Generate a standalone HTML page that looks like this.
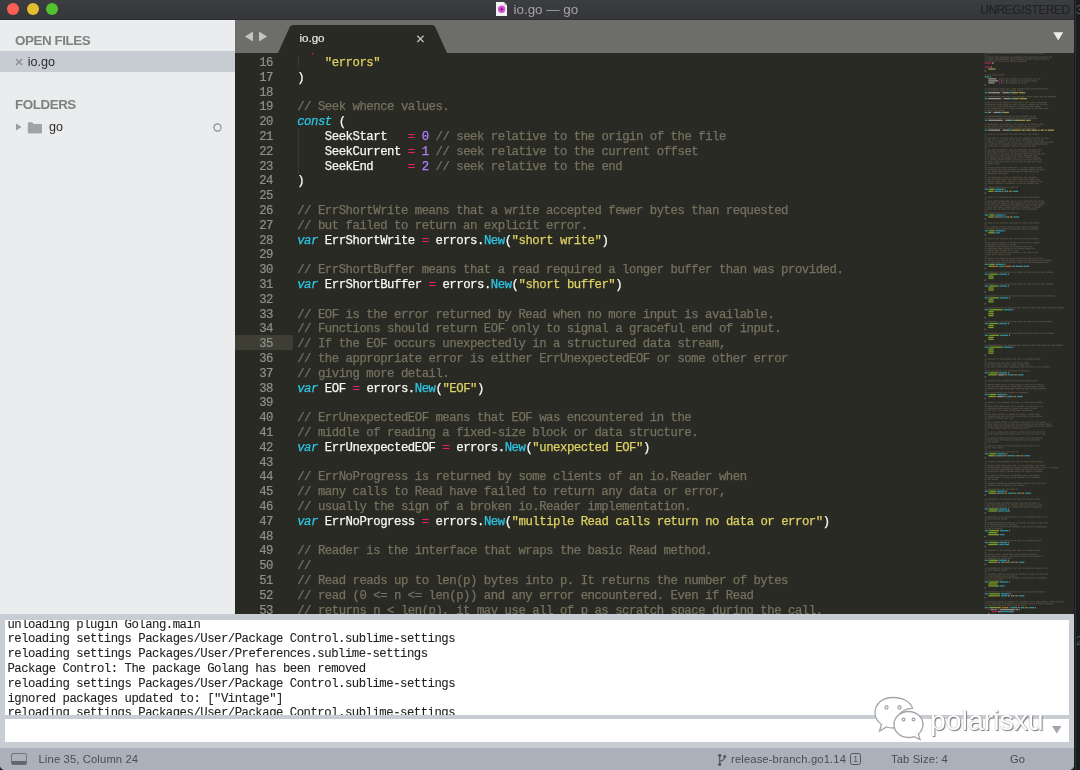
<!DOCTYPE html>
<html><head><meta charset="utf-8">
<style>
*{margin:0;padding:0;box-sizing:border-box}
body{-webkit-font-smoothing:antialiased}
html,body{width:1080px;height:770px;overflow:hidden;background:#1e1f22;font-family:"Liberation Sans",sans-serif}
.abs{position:absolute}
#win{position:absolute;left:0;top:0;width:1074px;height:770px;overflow:hidden;border-radius:0 0 5px 5px;background:#abb1ba;will-change:transform}
#title{position:absolute;left:0;top:0;width:1074px;height:20px;background:linear-gradient(#3c3d40,#36373a);border-bottom:1.5px solid #2b2c2f}
.light{position:absolute;top:3px;width:12px;height:12px;border-radius:50%}
#ttext{position:absolute;left:513.5px;top:1.8px;font-size:13.4px;color:#a4a4a5;white-space:pre;letter-spacing:0px}
#unreg{position:absolute;left:980.3px;top:3.1px;font-size:11.9px;color:#222326;letter-spacing:-0.42px;-webkit-text-stroke:0.2px #222326}
#side{position:absolute;left:0;top:20px;width:235px;height:594px;background:#ebecee}
.hdr{position:absolute;left:15px;font-weight:bold;font-size:13.4px;letter-spacing:-0.45px;color:#7f8080}
#sel{position:absolute;left:0;top:31px;width:235px;height:21px;background:#c7cbd2}
#tabs{position:absolute;left:235px;top:20px;width:839px;height:33px;background:#6d6e69}
#editor{position:absolute;left:235px;top:53px;width:839px;height:561px;background:#2a2a25;overflow:hidden}
.cl{position:absolute;left:297.2px;height:14.8px;line-height:14.8px;font-family:"Liberation Mono",monospace;font-size:12.3px;letter-spacing:-0.4661px;white-space:pre;color:#f8f8f2;-webkit-text-stroke:0.25px}
.gn{position:absolute;left:235px;width:38px;text-align:right;height:14.8px;line-height:14.8px;font-family:"Liberation Mono",monospace;font-size:12.3px;letter-spacing:-0.4661px;white-space:pre;color:#8f908a;-webkit-text-stroke:0.2px}
#codeclip{position:absolute;left:0;top:53px;width:1074px;height:561px;overflow:hidden}
#codeinner{position:absolute;left:0;top:-53px;width:1074px;height:770px;will-change:transform}
.mm{position:absolute;left:0;top:0}
#panel{position:absolute;left:0;top:614px;width:1074px;height:134px;background:#c8ccd3}
#outbox{position:absolute;left:5px;top:6px;width:1064px;height:95px;background:#fff;overflow:hidden}
#outinner{position:absolute;left:-5px;top:-620px;width:1080px;height:770px}
.ol{position:absolute;left:7.4px;height:14.8px;line-height:14.8px;font-family:"Liberation Mono",monospace;font-size:12.3px;letter-spacing:-0.491px;white-space:pre;color:#222;-webkit-text-stroke:0.08px #222}
#inbox{position:absolute;left:5px;top:104.8px;width:1064px;height:23.3px;background:#fff}
#status{position:absolute;left:0;top:748.4px;width:1074px;height:22px;background:#abb1ba}
.st{position:absolute;top:4.5px;font-size:11.2px;letter-spacing:0.15px;color:#4a4c50;white-space:pre}
</style></head>
<body>
<div id="win">
  <div id="title">
    <div class="light" style="left:7px;background:#fd5e56"></div>
    <div class="light" style="left:27px;background:#e5be2d"></div>
    <div class="light" style="left:46px;background:#53c22f"></div>
    <svg class="abs" style="left:495.9px;top:1.7px" width="11.2" height="14.3" viewBox="0 0 11.2 14.3">
      <path d="M0 0 H7.8 L11.2 3.4 V14.3 H0 Z" fill="#f2f2f2"/>
      <path d="M7.8 0 V3.4 H11.2 Z" fill="#d0d0d0"/>
      <circle cx="5.6" cy="7.2" r="3.7" fill="#d65ad6"/>
      <circle cx="5.6" cy="7.2" r="2.2" fill="#c03ec8"/>
      <circle cx="5.6" cy="7.2" r="0.9" fill="#5a2030"/>
    </svg>
    <div id="ttext">io.go — go</div>
    <div id="unreg">UNREGISTERED</div>
  </div>

  <div id="side">
    <div class="hdr" style="top:13px">OPEN FILES</div>
    <div id="sel"></div>
    <svg class="abs" style="left:15px;top:38px" width="8" height="8" viewBox="0 0 8 8"><path d="M1 1 L7 7 M7 1 L1 7" stroke="#86898e" stroke-width="1.25"/></svg>
    <div class="abs" style="left:27.8px;top:35px;font-size:12.6px;color:#2b2b2b">io.go</div>
    <div class="hdr" style="top:77px">FOLDERS</div>
    <svg class="abs" style="left:16px;top:103px" width="6" height="8" viewBox="0 0 6 8"><path d="M0 0.5 L5.5 4 L0 7.5 Z" fill="#9a9b9d"/></svg>
    <svg class="abs" style="left:27px;top:101.5px" width="16" height="12" viewBox="0 0 16 12"><path d="M0.8 1.2 Q0.8 0.3 1.7 0.3 H5.3 L6.8 1.9 H14.1 Q15 1.9 15 2.8 V10.6 Q15 11.5 14.1 11.5 H1.7 Q0.8 11.5 0.8 10.6 Z" fill="#a2a3a5"/></svg>
    <div class="abs" style="left:49px;top:100.2px;font-size:12.6px;color:#2b2b2b">go</div>
    <svg class="abs" style="left:211.7px;top:102px" width="11" height="11" viewBox="0 0 11 11"><circle cx="5.5" cy="5.5" r="3.6" fill="none" stroke="#8e8f91" stroke-width="1.2"/></svg>
  </div>

  <div id="tabs">
    <svg class="abs" style="left:0;top:0" width="839" height="33" viewBox="0 0 839 33">
      <path d="M10 16.5 L18 11.5 V21.5 Z" fill="#c4c4c2"/>
      <path d="M24 11.5 L32 16.5 L24 21.5 Z" fill="#c4c4c2"/>
      <path d="M43 33 L55 6.5 Q56.5 5 58.5 5 L197 5 Q199 5 200 6.5 L212 33 Z" fill="#2a2a25"/>
      <path d="M182.3 15.7 L188.5 21.9 M188.5 15.7 L182.3 21.9" stroke="#bdbdba" stroke-width="1.35"/>
      <path d="M818.3 12.2 L828.2 12.2 L823.25 20.6 Z" fill="#ecece9"/>
    </svg>
    <div class="abs" style="left:64.4px;top:11px;font-size:11.6px;color:#ececea;-webkit-text-stroke:0.15px #ececea">io.go</div>
  </div>

  <div id="editor"></div>
  <div id="codeclip"><div id="codeinner">
    <div class="abs" style="left:235px;top:335px;width:58px;height:15px;background:#3f3e34"></div>
    <div class="abs" style="left:298px;top:55.5px;width:1px;height:12px;border-left:1px dotted #47473f"></div>
    <div class="abs" style="left:298px;top:129px;width:1px;height:45px;border-left:1px dotted #47473f"></div>
<div class="gn" style="top:41.20px">15</div>
<div class="gn" style="top:56.00px">16</div>
<div class="gn" style="top:70.80px">17</div>
<div class="gn" style="top:85.60px">18</div>
<div class="gn" style="top:100.40px">19</div>
<div class="gn" style="top:115.20px">20</div>
<div class="gn" style="top:130.00px">21</div>
<div class="gn" style="top:144.80px">22</div>
<div class="gn" style="top:159.60px">23</div>
<div class="gn" style="top:174.40px">24</div>
<div class="gn" style="top:189.20px">25</div>
<div class="gn" style="top:204.00px">26</div>
<div class="gn" style="top:218.80px">27</div>
<div class="gn" style="top:233.60px">28</div>
<div class="gn" style="top:248.40px">29</div>
<div class="gn" style="top:263.20px">30</div>
<div class="gn" style="top:278.00px">31</div>
<div class="gn" style="top:292.80px">32</div>
<div class="gn" style="top:307.60px">33</div>
<div class="gn" style="top:322.40px">34</div>
<div class="gn" style="top:337.20px">35</div>
<div class="gn" style="top:352.00px">36</div>
<div class="gn" style="top:366.80px">37</div>
<div class="gn" style="top:381.60px">38</div>
<div class="gn" style="top:396.40px">39</div>
<div class="gn" style="top:411.20px">40</div>
<div class="gn" style="top:426.00px">41</div>
<div class="gn" style="top:440.80px">42</div>
<div class="gn" style="top:455.60px">43</div>
<div class="gn" style="top:470.40px">44</div>
<div class="gn" style="top:485.20px">45</div>
<div class="gn" style="top:500.00px">46</div>
<div class="gn" style="top:514.80px">47</div>
<div class="gn" style="top:529.60px">48</div>
<div class="gn" style="top:544.40px">49</div>
<div class="gn" style="top:559.20px">50</div>
<div class="gn" style="top:574.00px">51</div>
<div class="gn" style="top:588.80px">52</div>
<div class="gn" style="top:603.60px">53</div>
<div class="cl" style="top:41.20px"><span style="color:#ec1e72">import</span></div>
<div class="cl" style="top:56.00px">    <span style="color:#ded263">&quot;errors&quot;</span></div>
<div class="cl" style="top:70.80px"><span style="color:#f8f8f2">)</span></div>
<div class="cl" style="top:85.60px"></div>
<div class="cl" style="top:100.40px"><span style="color:#75715e">// Seek whence values.</span></div>
<div class="cl" style="top:115.20px"><span style="color:#2cc6e4;font-style:italic">const</span> <span style="color:#f8f8f2">(</span></div>
<div class="cl" style="top:130.00px">    <span style="color:#f8f8f2">SeekStart</span>   <span style="color:#ec1e72">=</span> <span style="color:#ae81ff">0</span> <span style="color:#75715e">// seek relative to the origin of the file</span></div>
<div class="cl" style="top:144.80px">    <span style="color:#f8f8f2">SeekCurrent</span> <span style="color:#ec1e72">=</span> <span style="color:#ae81ff">1</span> <span style="color:#75715e">// seek relative to the current offset</span></div>
<div class="cl" style="top:159.60px">    <span style="color:#f8f8f2">SeekEnd</span>     <span style="color:#ec1e72">=</span> <span style="color:#ae81ff">2</span> <span style="color:#75715e">// seek relative to the end</span></div>
<div class="cl" style="top:174.40px"><span style="color:#f8f8f2">)</span></div>
<div class="cl" style="top:189.20px"></div>
<div class="cl" style="top:204.00px"><span style="color:#75715e">// ErrShortWrite means that a write accepted fewer bytes than requested</span></div>
<div class="cl" style="top:218.80px"><span style="color:#75715e">// but failed to return an explicit error.</span></div>
<div class="cl" style="top:233.60px"><span style="color:#2cc6e4;font-style:italic">var</span> <span style="color:#f8f8f2">ErrShortWrite</span> <span style="color:#ec1e72">=</span> <span style="color:#f8f8f2">errors</span><span style="color:#f8f8f2">.</span><span style="color:#2cc6e4">New</span><span style="color:#f8f8f2">(</span><span style="color:#ded263">&quot;short write&quot;</span><span style="color:#f8f8f2">)</span></div>
<div class="cl" style="top:248.40px"></div>
<div class="cl" style="top:263.20px"><span style="color:#75715e">// ErrShortBuffer means that a read required a longer buffer than was provided.</span></div>
<div class="cl" style="top:278.00px"><span style="color:#2cc6e4;font-style:italic">var</span> <span style="color:#f8f8f2">ErrShortBuffer</span> <span style="color:#ec1e72">=</span> <span style="color:#f8f8f2">errors</span><span style="color:#f8f8f2">.</span><span style="color:#2cc6e4">New</span><span style="color:#f8f8f2">(</span><span style="color:#ded263">&quot;short buffer&quot;</span><span style="color:#f8f8f2">)</span></div>
<div class="cl" style="top:292.80px"></div>
<div class="cl" style="top:307.60px"><span style="color:#75715e">// EOF is the error returned by Read when no more input is available.</span></div>
<div class="cl" style="top:322.40px"><span style="color:#75715e">// Functions should return EOF only to signal a graceful end of input.</span></div>
<div class="cl" style="top:337.20px"><span style="color:#75715e">// If the EOF occurs unexpectedly in a structured data stream,</span></div>
<div class="cl" style="top:352.00px"><span style="color:#75715e">// the appropriate error is either ErrUnexpectedEOF or some other error</span></div>
<div class="cl" style="top:366.80px"><span style="color:#75715e">// giving more detail.</span></div>
<div class="cl" style="top:381.60px"><span style="color:#2cc6e4;font-style:italic">var</span> <span style="color:#f8f8f2">EOF</span> <span style="color:#ec1e72">=</span> <span style="color:#f8f8f2">errors</span><span style="color:#f8f8f2">.</span><span style="color:#2cc6e4">New</span><span style="color:#f8f8f2">(</span><span style="color:#ded263">&quot;EOF&quot;</span><span style="color:#f8f8f2">)</span></div>
<div class="cl" style="top:396.40px"></div>
<div class="cl" style="top:411.20px"><span style="color:#75715e">// ErrUnexpectedEOF means that EOF was encountered in the</span></div>
<div class="cl" style="top:426.00px"><span style="color:#75715e">// middle of reading a fixed-size block or data structure.</span></div>
<div class="cl" style="top:440.80px"><span style="color:#2cc6e4;font-style:italic">var</span> <span style="color:#f8f8f2">ErrUnexpectedEOF</span> <span style="color:#ec1e72">=</span> <span style="color:#f8f8f2">errors</span><span style="color:#f8f8f2">.</span><span style="color:#2cc6e4">New</span><span style="color:#f8f8f2">(</span><span style="color:#ded263">&quot;unexpected EOF&quot;</span><span style="color:#f8f8f2">)</span></div>
<div class="cl" style="top:455.60px"></div>
<div class="cl" style="top:470.40px"><span style="color:#75715e">// ErrNoProgress is returned by some clients of an io.Reader when</span></div>
<div class="cl" style="top:485.20px"><span style="color:#75715e">// many calls to Read have failed to return any data or error,</span></div>
<div class="cl" style="top:500.00px"><span style="color:#75715e">// usually the sign of a broken io.Reader implementation.</span></div>
<div class="cl" style="top:514.80px"><span style="color:#2cc6e4;font-style:italic">var</span> <span style="color:#f8f8f2">ErrNoProgress</span> <span style="color:#ec1e72">=</span> <span style="color:#f8f8f2">errors</span><span style="color:#f8f8f2">.</span><span style="color:#2cc6e4">New</span><span style="color:#f8f8f2">(</span><span style="color:#ded263">&quot;multiple Read calls return no data or error&quot;</span><span style="color:#f8f8f2">)</span></div>
<div class="cl" style="top:529.60px"></div>
<div class="cl" style="top:544.40px"><span style="color:#75715e">// Reader is the interface that wraps the basic Read method.</span></div>
<div class="cl" style="top:559.20px"><span style="color:#75715e">//</span></div>
<div class="cl" style="top:574.00px"><span style="color:#75715e">// Read reads up to len(p) bytes into p. It returns the number of bytes</span></div>
<div class="cl" style="top:588.80px"><span style="color:#75715e">// read (0 &lt;= n &lt;= len(p)) and any error encountered. Even if Read</span></div>
<div class="cl" style="top:603.60px"><span style="color:#75715e">// returns n &lt; len(p), it may use all of p as scratch space during the call.</span></div>
<svg class="mm" width="1080" height="770" viewBox="0 0 1080 770"><rect x="984.70" y="52.59" width="1.80" height="1.3" fill="#75715e" opacity="0.38"/><rect x="987.40" y="52.59" width="7.20" height="1.3" fill="#75715e" opacity="0.38"/><rect x="995.50" y="52.59" width="2.70" height="1.3" fill="#75715e" opacity="0.38"/><rect x="999.10" y="52.59" width="12.60" height="1.3" fill="#75715e" opacity="0.38"/><rect x="1012.60" y="52.59" width="3.60" height="1.3" fill="#75715e" opacity="0.38"/><rect x="1017.10" y="52.59" width="3.60" height="1.3" fill="#75715e" opacity="0.38"/><rect x="1021.60" y="52.59" width="4.50" height="1.3" fill="#75715e" opacity="0.38"/><rect x="1027.00" y="52.59" width="6.30" height="1.3" fill="#75715e" opacity="0.38"/><rect x="1034.20" y="52.59" width="9.90" height="1.3" fill="#75715e" opacity="0.38"/><rect x="984.70" y="54.56" width="1.80" height="1.3" fill="#75715e" opacity="0.38"/><rect x="984.70" y="56.53" width="1.80" height="1.3" fill="#75715e" opacity="0.38"/><rect x="987.40" y="56.53" width="6.30" height="1.3" fill="#75715e" opacity="0.38"/><rect x="994.60" y="56.53" width="4.50" height="1.3" fill="#75715e" opacity="0.38"/><rect x="1000.00" y="56.53" width="9.00" height="1.3" fill="#75715e" opacity="0.38"/><rect x="1009.90" y="56.53" width="2.70" height="1.3" fill="#75715e" opacity="0.38"/><rect x="1013.50" y="56.53" width="9.00" height="1.3" fill="#75715e" opacity="0.38"/><rect x="1023.40" y="56.53" width="3.60" height="1.3" fill="#75715e" opacity="0.38"/><rect x="1027.90" y="56.53" width="9.90" height="1.3" fill="#75715e" opacity="0.38"/><rect x="1038.70" y="56.53" width="9.00" height="1.3" fill="#75715e" opacity="0.38"/><rect x="1048.60" y="56.53" width="3.60" height="1.3" fill="#75715e" opacity="0.38"/><rect x="984.70" y="58.50" width="1.80" height="1.3" fill="#75715e" opacity="0.38"/><rect x="987.40" y="58.50" width="6.30" height="1.3" fill="#75715e" opacity="0.38"/><rect x="994.60" y="58.50" width="14.40" height="1.3" fill="#75715e" opacity="0.38"/><rect x="1009.90" y="58.50" width="5.40" height="1.3" fill="#75715e" opacity="0.38"/><rect x="1016.20" y="58.50" width="8.10" height="1.3" fill="#75715e" opacity="0.38"/><rect x="1025.20" y="58.50" width="7.20" height="1.3" fill="#75715e" opacity="0.38"/><rect x="1033.30" y="58.50" width="6.30" height="1.3" fill="#75715e" opacity="0.38"/><rect x="1040.50" y="58.50" width="5.40" height="1.3" fill="#75715e" opacity="0.38"/><rect x="1046.80" y="58.50" width="2.70" height="1.3" fill="#75715e" opacity="0.38"/><rect x="984.70" y="60.48" width="1.80" height="1.3" fill="#75715e" opacity="0.38"/><rect x="987.40" y="60.48" width="5.40" height="1.3" fill="#75715e" opacity="0.38"/><rect x="993.70" y="60.48" width="3.60" height="1.3" fill="#75715e" opacity="0.38"/><rect x="998.20" y="60.48" width="2.70" height="1.3" fill="#75715e" opacity="0.38"/><rect x="1001.80" y="60.48" width="3.60" height="1.3" fill="#75715e" opacity="0.38"/><rect x="1006.30" y="60.48" width="2.70" height="1.3" fill="#75715e" opacity="0.38"/><rect x="1009.90" y="60.48" width="7.20" height="1.3" fill="#75715e" opacity="0.38"/><rect x="1018.00" y="60.48" width="9.00" height="1.3" fill="#75715e" opacity="0.38"/><rect x="984.70" y="62.45" width="6.30" height="1.3" fill="#ec1e72" opacity="0.62"/><rect x="991.90" y="62.45" width="1.80" height="1.3" fill="#f8f8f2" opacity="0.5"/><rect x="984.70" y="66.40" width="5.40" height="1.3" fill="#ec1e72" opacity="0.62"/><rect x="991.00" y="66.40" width="0.90" height="1.3" fill="#f8f8f2" opacity="0.5"/><rect x="988.30" y="68.37" width="7.20" height="1.3" fill="#ded263" opacity="0.62"/><rect x="984.70" y="70.34" width="0.90" height="1.3" fill="#f8f8f2" opacity="0.5"/><rect x="984.70" y="74.29" width="1.80" height="1.3" fill="#75715e" opacity="0.38"/><rect x="987.40" y="74.29" width="3.60" height="1.3" fill="#75715e" opacity="0.38"/><rect x="991.90" y="74.29" width="5.40" height="1.3" fill="#75715e" opacity="0.38"/><rect x="998.20" y="74.29" width="6.30" height="1.3" fill="#75715e" opacity="0.38"/><rect x="984.70" y="76.26" width="4.50" height="1.3" fill="#2cc6e4" opacity="0.62"/><rect x="990.10" y="76.26" width="0.90" height="1.3" fill="#f8f8f2" opacity="0.5"/><rect x="988.30" y="78.23" width="8.10" height="1.3" fill="#f8f8f2" opacity="0.5"/><rect x="999.10" y="78.23" width="0.90" height="1.3" fill="#ec1e72" opacity="0.62"/><rect x="1000.90" y="78.23" width="0.90" height="1.3" fill="#ae81ff" opacity="0.62"/><rect x="1002.70" y="78.23" width="1.80" height="1.3" fill="#75715e" opacity="0.38"/><rect x="1005.40" y="78.23" width="3.60" height="1.3" fill="#75715e" opacity="0.38"/><rect x="1009.90" y="78.23" width="7.20" height="1.3" fill="#75715e" opacity="0.38"/><rect x="1018.00" y="78.23" width="1.80" height="1.3" fill="#75715e" opacity="0.38"/><rect x="1020.70" y="78.23" width="2.70" height="1.3" fill="#75715e" opacity="0.38"/><rect x="1024.30" y="78.23" width="5.40" height="1.3" fill="#75715e" opacity="0.38"/><rect x="1030.60" y="78.23" width="1.80" height="1.3" fill="#75715e" opacity="0.38"/><rect x="1033.30" y="78.23" width="2.70" height="1.3" fill="#75715e" opacity="0.38"/><rect x="1036.90" y="78.23" width="3.60" height="1.3" fill="#75715e" opacity="0.38"/><rect x="988.30" y="80.21" width="9.90" height="1.3" fill="#f8f8f2" opacity="0.5"/><rect x="999.10" y="80.21" width="0.90" height="1.3" fill="#ec1e72" opacity="0.62"/><rect x="1000.90" y="80.21" width="0.90" height="1.3" fill="#ae81ff" opacity="0.62"/><rect x="1002.70" y="80.21" width="1.80" height="1.3" fill="#75715e" opacity="0.38"/><rect x="1005.40" y="80.21" width="3.60" height="1.3" fill="#75715e" opacity="0.38"/><rect x="1009.90" y="80.21" width="7.20" height="1.3" fill="#75715e" opacity="0.38"/><rect x="1018.00" y="80.21" width="1.80" height="1.3" fill="#75715e" opacity="0.38"/><rect x="1020.70" y="80.21" width="2.70" height="1.3" fill="#75715e" opacity="0.38"/><rect x="1024.30" y="80.21" width="6.30" height="1.3" fill="#75715e" opacity="0.38"/><rect x="1031.50" y="80.21" width="5.40" height="1.3" fill="#75715e" opacity="0.38"/><rect x="988.30" y="82.18" width="6.30" height="1.3" fill="#f8f8f2" opacity="0.5"/><rect x="999.10" y="82.18" width="0.90" height="1.3" fill="#ec1e72" opacity="0.62"/><rect x="1000.90" y="82.18" width="0.90" height="1.3" fill="#ae81ff" opacity="0.62"/><rect x="1002.70" y="82.18" width="1.80" height="1.3" fill="#75715e" opacity="0.38"/><rect x="1005.40" y="82.18" width="3.60" height="1.3" fill="#75715e" opacity="0.38"/><rect x="1009.90" y="82.18" width="7.20" height="1.3" fill="#75715e" opacity="0.38"/><rect x="1018.00" y="82.18" width="1.80" height="1.3" fill="#75715e" opacity="0.38"/><rect x="1020.70" y="82.18" width="2.70" height="1.3" fill="#75715e" opacity="0.38"/><rect x="1024.30" y="82.18" width="2.70" height="1.3" fill="#75715e" opacity="0.38"/><rect x="984.70" y="84.15" width="0.90" height="1.3" fill="#f8f8f2" opacity="0.5"/><rect x="984.70" y="88.10" width="1.80" height="1.3" fill="#75715e" opacity="0.38"/><rect x="987.40" y="88.10" width="11.70" height="1.3" fill="#75715e" opacity="0.38"/><rect x="1000.00" y="88.10" width="4.50" height="1.3" fill="#75715e" opacity="0.38"/><rect x="1005.40" y="88.10" width="3.60" height="1.3" fill="#75715e" opacity="0.38"/><rect x="1009.90" y="88.10" width="0.90" height="1.3" fill="#75715e" opacity="0.38"/><rect x="1011.70" y="88.10" width="4.50" height="1.3" fill="#75715e" opacity="0.38"/><rect x="1017.10" y="88.10" width="7.20" height="1.3" fill="#75715e" opacity="0.38"/><rect x="1025.20" y="88.10" width="4.50" height="1.3" fill="#75715e" opacity="0.38"/><rect x="1030.60" y="88.10" width="4.50" height="1.3" fill="#75715e" opacity="0.38"/><rect x="1036.00" y="88.10" width="3.60" height="1.3" fill="#75715e" opacity="0.38"/><rect x="1040.50" y="88.10" width="8.10" height="1.3" fill="#75715e" opacity="0.38"/><rect x="984.70" y="90.07" width="1.80" height="1.3" fill="#75715e" opacity="0.38"/><rect x="987.40" y="90.07" width="2.70" height="1.3" fill="#75715e" opacity="0.38"/><rect x="991.00" y="90.07" width="5.40" height="1.3" fill="#75715e" opacity="0.38"/><rect x="997.30" y="90.07" width="1.80" height="1.3" fill="#75715e" opacity="0.38"/><rect x="1000.00" y="90.07" width="5.40" height="1.3" fill="#75715e" opacity="0.38"/><rect x="1006.30" y="90.07" width="1.80" height="1.3" fill="#75715e" opacity="0.38"/><rect x="1009.00" y="90.07" width="7.20" height="1.3" fill="#75715e" opacity="0.38"/><rect x="1017.10" y="90.07" width="5.40" height="1.3" fill="#75715e" opacity="0.38"/><rect x="984.70" y="92.05" width="2.70" height="1.3" fill="#2cc6e4" opacity="0.62"/><rect x="988.30" y="92.05" width="11.70" height="1.3" fill="#f8f8f2" opacity="0.5"/><rect x="1000.90" y="92.05" width="0.90" height="1.3" fill="#ec1e72" opacity="0.62"/><rect x="1002.70" y="92.05" width="5.40" height="1.3" fill="#f8f8f2" opacity="0.5"/><rect x="1008.10" y="92.05" width="0.90" height="1.3" fill="#f8f8f2" opacity="0.5"/><rect x="1009.00" y="92.05" width="2.70" height="1.3" fill="#2cc6e4" opacity="0.62"/><rect x="1011.70" y="92.05" width="0.90" height="1.3" fill="#f8f8f2" opacity="0.5"/><rect x="1012.60" y="92.05" width="5.40" height="1.3" fill="#ded263" opacity="0.62"/><rect x="1018.90" y="92.05" width="5.40" height="1.3" fill="#ded263" opacity="0.62"/><rect x="1024.30" y="92.05" width="0.90" height="1.3" fill="#f8f8f2" opacity="0.5"/><rect x="984.70" y="95.99" width="1.80" height="1.3" fill="#75715e" opacity="0.38"/><rect x="987.40" y="95.99" width="12.60" height="1.3" fill="#75715e" opacity="0.38"/><rect x="1000.90" y="95.99" width="4.50" height="1.3" fill="#75715e" opacity="0.38"/><rect x="1006.30" y="95.99" width="3.60" height="1.3" fill="#75715e" opacity="0.38"/><rect x="1010.80" y="95.99" width="0.90" height="1.3" fill="#75715e" opacity="0.38"/><rect x="1012.60" y="95.99" width="3.60" height="1.3" fill="#75715e" opacity="0.38"/><rect x="1017.10" y="95.99" width="7.20" height="1.3" fill="#75715e" opacity="0.38"/><rect x="1025.20" y="95.99" width="0.90" height="1.3" fill="#75715e" opacity="0.38"/><rect x="1027.00" y="95.99" width="5.40" height="1.3" fill="#75715e" opacity="0.38"/><rect x="1033.30" y="95.99" width="5.40" height="1.3" fill="#75715e" opacity="0.38"/><rect x="1039.60" y="95.99" width="3.60" height="1.3" fill="#75715e" opacity="0.38"/><rect x="1044.10" y="95.99" width="2.70" height="1.3" fill="#75715e" opacity="0.38"/><rect x="1047.70" y="95.99" width="8.10" height="1.3" fill="#75715e" opacity="0.38"/><rect x="984.70" y="97.96" width="2.70" height="1.3" fill="#2cc6e4" opacity="0.62"/><rect x="988.30" y="97.96" width="12.60" height="1.3" fill="#f8f8f2" opacity="0.5"/><rect x="1001.80" y="97.96" width="0.90" height="1.3" fill="#ec1e72" opacity="0.62"/><rect x="1003.60" y="97.96" width="5.40" height="1.3" fill="#f8f8f2" opacity="0.5"/><rect x="1009.00" y="97.96" width="0.90" height="1.3" fill="#f8f8f2" opacity="0.5"/><rect x="1009.90" y="97.96" width="2.70" height="1.3" fill="#2cc6e4" opacity="0.62"/><rect x="1012.60" y="97.96" width="0.90" height="1.3" fill="#f8f8f2" opacity="0.5"/><rect x="1013.50" y="97.96" width="5.40" height="1.3" fill="#ded263" opacity="0.62"/><rect x="1019.80" y="97.96" width="6.30" height="1.3" fill="#ded263" opacity="0.62"/><rect x="1026.10" y="97.96" width="0.90" height="1.3" fill="#f8f8f2" opacity="0.5"/><rect x="984.70" y="101.91" width="1.80" height="1.3" fill="#75715e" opacity="0.38"/><rect x="987.40" y="101.91" width="2.70" height="1.3" fill="#75715e" opacity="0.38"/><rect x="991.00" y="101.91" width="1.80" height="1.3" fill="#75715e" opacity="0.38"/><rect x="993.70" y="101.91" width="2.70" height="1.3" fill="#75715e" opacity="0.38"/><rect x="997.30" y="101.91" width="4.50" height="1.3" fill="#75715e" opacity="0.38"/><rect x="1002.70" y="101.91" width="7.20" height="1.3" fill="#75715e" opacity="0.38"/><rect x="1010.80" y="101.91" width="1.80" height="1.3" fill="#75715e" opacity="0.38"/><rect x="1013.50" y="101.91" width="3.60" height="1.3" fill="#75715e" opacity="0.38"/><rect x="1018.00" y="101.91" width="3.60" height="1.3" fill="#75715e" opacity="0.38"/><rect x="1022.50" y="101.91" width="1.80" height="1.3" fill="#75715e" opacity="0.38"/><rect x="1025.20" y="101.91" width="3.60" height="1.3" fill="#75715e" opacity="0.38"/><rect x="1029.70" y="101.91" width="4.50" height="1.3" fill="#75715e" opacity="0.38"/><rect x="1035.10" y="101.91" width="1.80" height="1.3" fill="#75715e" opacity="0.38"/><rect x="1037.80" y="101.91" width="9.00" height="1.3" fill="#75715e" opacity="0.38"/><rect x="984.70" y="103.88" width="1.80" height="1.3" fill="#75715e" opacity="0.38"/><rect x="987.40" y="103.88" width="8.10" height="1.3" fill="#75715e" opacity="0.38"/><rect x="996.40" y="103.88" width="5.40" height="1.3" fill="#75715e" opacity="0.38"/><rect x="1002.70" y="103.88" width="5.40" height="1.3" fill="#75715e" opacity="0.38"/><rect x="1009.00" y="103.88" width="2.70" height="1.3" fill="#75715e" opacity="0.38"/><rect x="1012.60" y="103.88" width="3.60" height="1.3" fill="#75715e" opacity="0.38"/><rect x="1017.10" y="103.88" width="1.80" height="1.3" fill="#75715e" opacity="0.38"/><rect x="1019.80" y="103.88" width="5.40" height="1.3" fill="#75715e" opacity="0.38"/><rect x="1026.10" y="103.88" width="0.90" height="1.3" fill="#75715e" opacity="0.38"/><rect x="1027.90" y="103.88" width="7.20" height="1.3" fill="#75715e" opacity="0.38"/><rect x="1036.00" y="103.88" width="2.70" height="1.3" fill="#75715e" opacity="0.38"/><rect x="1039.60" y="103.88" width="1.80" height="1.3" fill="#75715e" opacity="0.38"/><rect x="1042.30" y="103.88" width="5.40" height="1.3" fill="#75715e" opacity="0.38"/><rect x="984.70" y="105.86" width="1.80" height="1.3" fill="#75715e" opacity="0.38"/><rect x="987.40" y="105.86" width="1.80" height="1.3" fill="#75715e" opacity="0.38"/><rect x="990.10" y="105.86" width="2.70" height="1.3" fill="#75715e" opacity="0.38"/><rect x="993.70" y="105.86" width="2.70" height="1.3" fill="#75715e" opacity="0.38"/><rect x="997.30" y="105.86" width="5.40" height="1.3" fill="#75715e" opacity="0.38"/><rect x="1003.60" y="105.86" width="10.80" height="1.3" fill="#75715e" opacity="0.38"/><rect x="1015.30" y="105.86" width="1.80" height="1.3" fill="#75715e" opacity="0.38"/><rect x="1018.00" y="105.86" width="0.90" height="1.3" fill="#75715e" opacity="0.38"/><rect x="1019.80" y="105.86" width="9.00" height="1.3" fill="#75715e" opacity="0.38"/><rect x="1029.70" y="105.86" width="3.60" height="1.3" fill="#75715e" opacity="0.38"/><rect x="1034.20" y="105.86" width="6.30" height="1.3" fill="#75715e" opacity="0.38"/><rect x="984.70" y="107.83" width="1.80" height="1.3" fill="#75715e" opacity="0.38"/><rect x="987.40" y="107.83" width="2.70" height="1.3" fill="#75715e" opacity="0.38"/><rect x="991.00" y="107.83" width="9.90" height="1.3" fill="#75715e" opacity="0.38"/><rect x="1001.80" y="107.83" width="4.50" height="1.3" fill="#75715e" opacity="0.38"/><rect x="1007.20" y="107.83" width="1.80" height="1.3" fill="#75715e" opacity="0.38"/><rect x="1009.90" y="107.83" width="5.40" height="1.3" fill="#75715e" opacity="0.38"/><rect x="1016.20" y="107.83" width="14.40" height="1.3" fill="#75715e" opacity="0.38"/><rect x="1031.50" y="107.83" width="1.80" height="1.3" fill="#75715e" opacity="0.38"/><rect x="1034.20" y="107.83" width="3.60" height="1.3" fill="#75715e" opacity="0.38"/><rect x="1038.70" y="107.83" width="4.50" height="1.3" fill="#75715e" opacity="0.38"/><rect x="1044.10" y="107.83" width="4.50" height="1.3" fill="#75715e" opacity="0.38"/><rect x="984.70" y="109.80" width="1.80" height="1.3" fill="#75715e" opacity="0.38"/><rect x="987.40" y="109.80" width="5.40" height="1.3" fill="#75715e" opacity="0.38"/><rect x="993.70" y="109.80" width="3.60" height="1.3" fill="#75715e" opacity="0.38"/><rect x="998.20" y="109.80" width="6.30" height="1.3" fill="#75715e" opacity="0.38"/><rect x="984.70" y="111.78" width="2.70" height="1.3" fill="#2cc6e4" opacity="0.62"/><rect x="988.30" y="111.78" width="2.70" height="1.3" fill="#f8f8f2" opacity="0.5"/><rect x="991.90" y="111.78" width="0.90" height="1.3" fill="#ec1e72" opacity="0.62"/><rect x="993.70" y="111.78" width="5.40" height="1.3" fill="#f8f8f2" opacity="0.5"/><rect x="999.10" y="111.78" width="0.90" height="1.3" fill="#f8f8f2" opacity="0.5"/><rect x="1000.00" y="111.78" width="2.70" height="1.3" fill="#2cc6e4" opacity="0.62"/><rect x="1002.70" y="111.78" width="0.90" height="1.3" fill="#f8f8f2" opacity="0.5"/><rect x="1003.60" y="111.78" width="4.50" height="1.3" fill="#ded263" opacity="0.62"/><rect x="1008.10" y="111.78" width="0.90" height="1.3" fill="#f8f8f2" opacity="0.5"/><rect x="984.70" y="115.72" width="1.80" height="1.3" fill="#75715e" opacity="0.38"/><rect x="987.40" y="115.72" width="14.40" height="1.3" fill="#75715e" opacity="0.38"/><rect x="1002.70" y="115.72" width="4.50" height="1.3" fill="#75715e" opacity="0.38"/><rect x="1008.10" y="115.72" width="3.60" height="1.3" fill="#75715e" opacity="0.38"/><rect x="1012.60" y="115.72" width="2.70" height="1.3" fill="#75715e" opacity="0.38"/><rect x="1016.20" y="115.72" width="2.70" height="1.3" fill="#75715e" opacity="0.38"/><rect x="1019.80" y="115.72" width="9.90" height="1.3" fill="#75715e" opacity="0.38"/><rect x="1030.60" y="115.72" width="1.80" height="1.3" fill="#75715e" opacity="0.38"/><rect x="1033.30" y="115.72" width="2.70" height="1.3" fill="#75715e" opacity="0.38"/><rect x="984.70" y="117.69" width="1.80" height="1.3" fill="#75715e" opacity="0.38"/><rect x="987.40" y="117.69" width="5.40" height="1.3" fill="#75715e" opacity="0.38"/><rect x="993.70" y="117.69" width="1.80" height="1.3" fill="#75715e" opacity="0.38"/><rect x="996.40" y="117.69" width="6.30" height="1.3" fill="#75715e" opacity="0.38"/><rect x="1003.60" y="117.69" width="0.90" height="1.3" fill="#75715e" opacity="0.38"/><rect x="1005.40" y="117.69" width="9.00" height="1.3" fill="#75715e" opacity="0.38"/><rect x="1015.30" y="117.69" width="4.50" height="1.3" fill="#75715e" opacity="0.38"/><rect x="1020.70" y="117.69" width="1.80" height="1.3" fill="#75715e" opacity="0.38"/><rect x="1023.40" y="117.69" width="3.60" height="1.3" fill="#75715e" opacity="0.38"/><rect x="1027.90" y="117.69" width="9.00" height="1.3" fill="#75715e" opacity="0.38"/><rect x="984.70" y="119.67" width="2.70" height="1.3" fill="#2cc6e4" opacity="0.62"/><rect x="988.30" y="119.67" width="14.40" height="1.3" fill="#f8f8f2" opacity="0.5"/><rect x="1003.60" y="119.67" width="0.90" height="1.3" fill="#ec1e72" opacity="0.62"/><rect x="1005.40" y="119.67" width="5.40" height="1.3" fill="#f8f8f2" opacity="0.5"/><rect x="1010.80" y="119.67" width="0.90" height="1.3" fill="#f8f8f2" opacity="0.5"/><rect x="1011.70" y="119.67" width="2.70" height="1.3" fill="#2cc6e4" opacity="0.62"/><rect x="1014.40" y="119.67" width="0.90" height="1.3" fill="#f8f8f2" opacity="0.5"/><rect x="1015.30" y="119.67" width="9.90" height="1.3" fill="#ded263" opacity="0.62"/><rect x="1026.10" y="119.67" width="3.60" height="1.3" fill="#ded263" opacity="0.62"/><rect x="1029.70" y="119.67" width="0.90" height="1.3" fill="#f8f8f2" opacity="0.5"/><rect x="984.70" y="123.61" width="1.80" height="1.3" fill="#75715e" opacity="0.38"/><rect x="987.40" y="123.61" width="11.70" height="1.3" fill="#75715e" opacity="0.38"/><rect x="1000.00" y="123.61" width="1.80" height="1.3" fill="#75715e" opacity="0.38"/><rect x="1002.70" y="123.61" width="7.20" height="1.3" fill="#75715e" opacity="0.38"/><rect x="1010.80" y="123.61" width="1.80" height="1.3" fill="#75715e" opacity="0.38"/><rect x="1013.50" y="123.61" width="3.60" height="1.3" fill="#75715e" opacity="0.38"/><rect x="1018.00" y="123.61" width="6.30" height="1.3" fill="#75715e" opacity="0.38"/><rect x="1025.20" y="123.61" width="1.80" height="1.3" fill="#75715e" opacity="0.38"/><rect x="1027.90" y="123.61" width="1.80" height="1.3" fill="#75715e" opacity="0.38"/><rect x="1030.60" y="123.61" width="8.10" height="1.3" fill="#75715e" opacity="0.38"/><rect x="1039.60" y="123.61" width="3.60" height="1.3" fill="#75715e" opacity="0.38"/><rect x="984.70" y="125.59" width="1.80" height="1.3" fill="#75715e" opacity="0.38"/><rect x="987.40" y="125.59" width="3.60" height="1.3" fill="#75715e" opacity="0.38"/><rect x="991.90" y="125.59" width="4.50" height="1.3" fill="#75715e" opacity="0.38"/><rect x="997.30" y="125.59" width="1.80" height="1.3" fill="#75715e" opacity="0.38"/><rect x="1000.00" y="125.59" width="3.60" height="1.3" fill="#75715e" opacity="0.38"/><rect x="1004.50" y="125.59" width="3.60" height="1.3" fill="#75715e" opacity="0.38"/><rect x="1009.00" y="125.59" width="5.40" height="1.3" fill="#75715e" opacity="0.38"/><rect x="1015.30" y="125.59" width="1.80" height="1.3" fill="#75715e" opacity="0.38"/><rect x="1018.00" y="125.59" width="5.40" height="1.3" fill="#75715e" opacity="0.38"/><rect x="1024.30" y="125.59" width="2.70" height="1.3" fill="#75715e" opacity="0.38"/><rect x="1027.90" y="125.59" width="3.60" height="1.3" fill="#75715e" opacity="0.38"/><rect x="1032.40" y="125.59" width="1.80" height="1.3" fill="#75715e" opacity="0.38"/><rect x="1035.10" y="125.59" width="5.40" height="1.3" fill="#75715e" opacity="0.38"/><rect x="984.70" y="127.56" width="1.80" height="1.3" fill="#75715e" opacity="0.38"/><rect x="987.40" y="127.56" width="6.30" height="1.3" fill="#75715e" opacity="0.38"/><rect x="994.60" y="127.56" width="2.70" height="1.3" fill="#75715e" opacity="0.38"/><rect x="998.20" y="127.56" width="3.60" height="1.3" fill="#75715e" opacity="0.38"/><rect x="1002.70" y="127.56" width="1.80" height="1.3" fill="#75715e" opacity="0.38"/><rect x="1005.40" y="127.56" width="0.90" height="1.3" fill="#75715e" opacity="0.38"/><rect x="1007.20" y="127.56" width="5.40" height="1.3" fill="#75715e" opacity="0.38"/><rect x="1013.50" y="127.56" width="8.10" height="1.3" fill="#75715e" opacity="0.38"/><rect x="1022.50" y="127.56" width="13.50" height="1.3" fill="#75715e" opacity="0.38"/><rect x="984.70" y="129.53" width="2.70" height="1.3" fill="#2cc6e4" opacity="0.62"/><rect x="988.30" y="129.53" width="11.70" height="1.3" fill="#f8f8f2" opacity="0.5"/><rect x="1000.90" y="129.53" width="0.90" height="1.3" fill="#ec1e72" opacity="0.62"/><rect x="1002.70" y="129.53" width="5.40" height="1.3" fill="#f8f8f2" opacity="0.5"/><rect x="1008.10" y="129.53" width="0.90" height="1.3" fill="#f8f8f2" opacity="0.5"/><rect x="1009.00" y="129.53" width="2.70" height="1.3" fill="#2cc6e4" opacity="0.62"/><rect x="1011.70" y="129.53" width="0.90" height="1.3" fill="#f8f8f2" opacity="0.5"/><rect x="1012.60" y="129.53" width="8.10" height="1.3" fill="#ded263" opacity="0.62"/><rect x="1021.60" y="129.53" width="3.60" height="1.3" fill="#ded263" opacity="0.62"/><rect x="1026.10" y="129.53" width="4.50" height="1.3" fill="#ded263" opacity="0.62"/><rect x="1031.50" y="129.53" width="5.40" height="1.3" fill="#ded263" opacity="0.62"/><rect x="1037.80" y="129.53" width="1.80" height="1.3" fill="#ded263" opacity="0.62"/><rect x="1040.50" y="129.53" width="3.60" height="1.3" fill="#ded263" opacity="0.62"/><rect x="1045.00" y="129.53" width="1.80" height="1.3" fill="#ded263" opacity="0.62"/><rect x="1047.70" y="129.53" width="5.40" height="1.3" fill="#ded263" opacity="0.62"/><rect x="1053.10" y="129.53" width="0.90" height="1.3" fill="#f8f8f2" opacity="0.5"/><rect x="984.70" y="133.48" width="1.80" height="1.3" fill="#75715e" opacity="0.38"/><rect x="987.40" y="133.48" width="5.40" height="1.3" fill="#75715e" opacity="0.38"/><rect x="993.70" y="133.48" width="1.80" height="1.3" fill="#75715e" opacity="0.38"/><rect x="996.40" y="133.48" width="2.70" height="1.3" fill="#75715e" opacity="0.38"/><rect x="1000.00" y="133.48" width="8.10" height="1.3" fill="#75715e" opacity="0.38"/><rect x="1009.00" y="133.48" width="3.60" height="1.3" fill="#75715e" opacity="0.38"/><rect x="1013.50" y="133.48" width="4.50" height="1.3" fill="#75715e" opacity="0.38"/><rect x="1018.90" y="133.48" width="2.70" height="1.3" fill="#75715e" opacity="0.38"/><rect x="1022.50" y="133.48" width="4.50" height="1.3" fill="#75715e" opacity="0.38"/><rect x="1027.90" y="133.48" width="3.60" height="1.3" fill="#75715e" opacity="0.38"/><rect x="1032.40" y="133.48" width="6.30" height="1.3" fill="#75715e" opacity="0.38"/><rect x="984.70" y="135.45" width="1.80" height="1.3" fill="#75715e" opacity="0.38"/><rect x="984.70" y="137.42" width="1.80" height="1.3" fill="#75715e" opacity="0.38"/><rect x="987.40" y="137.42" width="3.60" height="1.3" fill="#75715e" opacity="0.38"/><rect x="991.90" y="137.42" width="4.50" height="1.3" fill="#75715e" opacity="0.38"/><rect x="997.30" y="137.42" width="1.80" height="1.3" fill="#75715e" opacity="0.38"/><rect x="1000.00" y="137.42" width="1.80" height="1.3" fill="#75715e" opacity="0.38"/><rect x="1002.70" y="137.42" width="5.40" height="1.3" fill="#75715e" opacity="0.38"/><rect x="1009.00" y="137.42" width="4.50" height="1.3" fill="#75715e" opacity="0.38"/><rect x="1014.40" y="137.42" width="3.60" height="1.3" fill="#75715e" opacity="0.38"/><rect x="1018.90" y="137.42" width="1.80" height="1.3" fill="#75715e" opacity="0.38"/><rect x="1021.60" y="137.42" width="1.80" height="1.3" fill="#75715e" opacity="0.38"/><rect x="1024.30" y="137.42" width="6.30" height="1.3" fill="#75715e" opacity="0.38"/><rect x="1031.50" y="137.42" width="2.70" height="1.3" fill="#75715e" opacity="0.38"/><rect x="1035.10" y="137.42" width="5.40" height="1.3" fill="#75715e" opacity="0.38"/><rect x="1041.40" y="137.42" width="1.80" height="1.3" fill="#75715e" opacity="0.38"/><rect x="1044.10" y="137.42" width="4.50" height="1.3" fill="#75715e" opacity="0.38"/><rect x="984.70" y="139.40" width="1.80" height="1.3" fill="#75715e" opacity="0.38"/><rect x="987.40" y="139.40" width="3.60" height="1.3" fill="#75715e" opacity="0.38"/><rect x="991.90" y="139.40" width="1.80" height="1.3" fill="#75715e" opacity="0.38"/><rect x="994.60" y="139.40" width="1.80" height="1.3" fill="#75715e" opacity="0.38"/><rect x="997.30" y="139.40" width="0.90" height="1.3" fill="#75715e" opacity="0.38"/><rect x="999.10" y="139.40" width="1.80" height="1.3" fill="#75715e" opacity="0.38"/><rect x="1001.80" y="139.40" width="6.30" height="1.3" fill="#75715e" opacity="0.38"/><rect x="1009.00" y="139.40" width="2.70" height="1.3" fill="#75715e" opacity="0.38"/><rect x="1012.60" y="139.40" width="2.70" height="1.3" fill="#75715e" opacity="0.38"/><rect x="1016.20" y="139.40" width="4.50" height="1.3" fill="#75715e" opacity="0.38"/><rect x="1021.60" y="139.40" width="10.80" height="1.3" fill="#75715e" opacity="0.38"/><rect x="1033.30" y="139.40" width="3.60" height="1.3" fill="#75715e" opacity="0.38"/><rect x="1037.80" y="139.40" width="1.80" height="1.3" fill="#75715e" opacity="0.38"/><rect x="1040.50" y="139.40" width="3.60" height="1.3" fill="#75715e" opacity="0.38"/><rect x="984.70" y="141.37" width="1.80" height="1.3" fill="#75715e" opacity="0.38"/><rect x="987.40" y="141.37" width="6.30" height="1.3" fill="#75715e" opacity="0.38"/><rect x="994.60" y="141.37" width="0.90" height="1.3" fill="#75715e" opacity="0.38"/><rect x="996.40" y="141.37" width="0.90" height="1.3" fill="#75715e" opacity="0.38"/><rect x="998.20" y="141.37" width="6.30" height="1.3" fill="#75715e" opacity="0.38"/><rect x="1005.40" y="141.37" width="1.80" height="1.3" fill="#75715e" opacity="0.38"/><rect x="1008.10" y="141.37" width="2.70" height="1.3" fill="#75715e" opacity="0.38"/><rect x="1011.70" y="141.37" width="2.70" height="1.3" fill="#75715e" opacity="0.38"/><rect x="1015.30" y="141.37" width="2.70" height="1.3" fill="#75715e" opacity="0.38"/><rect x="1018.90" y="141.37" width="1.80" height="1.3" fill="#75715e" opacity="0.38"/><rect x="1021.60" y="141.37" width="0.90" height="1.3" fill="#75715e" opacity="0.38"/><rect x="1023.40" y="141.37" width="1.80" height="1.3" fill="#75715e" opacity="0.38"/><rect x="1026.10" y="141.37" width="6.30" height="1.3" fill="#75715e" opacity="0.38"/><rect x="1033.30" y="141.37" width="4.50" height="1.3" fill="#75715e" opacity="0.38"/><rect x="1038.70" y="141.37" width="5.40" height="1.3" fill="#75715e" opacity="0.38"/><rect x="1045.00" y="141.37" width="2.70" height="1.3" fill="#75715e" opacity="0.38"/><rect x="1048.60" y="141.37" width="4.50" height="1.3" fill="#75715e" opacity="0.38"/><rect x="984.70" y="143.34" width="1.80" height="1.3" fill="#75715e" opacity="0.38"/><rect x="987.40" y="143.34" width="1.80" height="1.3" fill="#75715e" opacity="0.38"/><rect x="990.10" y="143.34" width="3.60" height="1.3" fill="#75715e" opacity="0.38"/><rect x="994.60" y="143.34" width="3.60" height="1.3" fill="#75715e" opacity="0.38"/><rect x="999.10" y="143.34" width="1.80" height="1.3" fill="#75715e" opacity="0.38"/><rect x="1001.80" y="143.34" width="8.10" height="1.3" fill="#75715e" opacity="0.38"/><rect x="1010.80" y="143.34" width="2.70" height="1.3" fill="#75715e" opacity="0.38"/><rect x="1014.40" y="143.34" width="2.70" height="1.3" fill="#75715e" opacity="0.38"/><rect x="1018.00" y="143.34" width="5.40" height="1.3" fill="#75715e" opacity="0.38"/><rect x="1024.30" y="143.34" width="5.40" height="1.3" fill="#75715e" opacity="0.38"/><rect x="1030.60" y="143.34" width="3.60" height="1.3" fill="#75715e" opacity="0.38"/><rect x="1035.10" y="143.34" width="12.60" height="1.3" fill="#75715e" opacity="0.38"/><rect x="984.70" y="145.32" width="1.80" height="1.3" fill="#75715e" opacity="0.38"/><rect x="987.40" y="145.32" width="6.30" height="1.3" fill="#75715e" opacity="0.38"/><rect x="994.60" y="145.32" width="3.60" height="1.3" fill="#75715e" opacity="0.38"/><rect x="999.10" y="145.32" width="1.80" height="1.3" fill="#75715e" opacity="0.38"/><rect x="1001.80" y="145.32" width="8.10" height="1.3" fill="#75715e" opacity="0.38"/><rect x="1010.80" y="145.32" width="6.30" height="1.3" fill="#75715e" opacity="0.38"/><rect x="1018.00" y="145.32" width="1.80" height="1.3" fill="#75715e" opacity="0.38"/><rect x="1020.70" y="145.32" width="6.30" height="1.3" fill="#75715e" opacity="0.38"/><rect x="1027.90" y="145.32" width="2.70" height="1.3" fill="#75715e" opacity="0.38"/><rect x="1031.50" y="145.32" width="4.50" height="1.3" fill="#75715e" opacity="0.38"/><rect x="984.70" y="147.29" width="1.80" height="1.3" fill="#75715e" opacity="0.38"/><rect x="984.70" y="149.26" width="1.80" height="1.3" fill="#75715e" opacity="0.38"/><rect x="987.40" y="149.26" width="3.60" height="1.3" fill="#75715e" opacity="0.38"/><rect x="991.90" y="149.26" width="3.60" height="1.3" fill="#75715e" opacity="0.38"/><rect x="996.40" y="149.26" width="9.00" height="1.3" fill="#75715e" opacity="0.38"/><rect x="1006.30" y="149.26" width="1.80" height="1.3" fill="#75715e" opacity="0.38"/><rect x="1009.00" y="149.26" width="4.50" height="1.3" fill="#75715e" opacity="0.38"/><rect x="1014.40" y="149.26" width="1.80" height="1.3" fill="#75715e" opacity="0.38"/><rect x="1017.10" y="149.26" width="9.90" height="1.3" fill="#75715e" opacity="0.38"/><rect x="1027.90" y="149.26" width="8.10" height="1.3" fill="#75715e" opacity="0.38"/><rect x="1036.90" y="149.26" width="4.50" height="1.3" fill="#75715e" opacity="0.38"/><rect x="984.70" y="151.24" width="1.80" height="1.3" fill="#75715e" opacity="0.38"/><rect x="987.40" y="151.24" width="10.80" height="1.3" fill="#75715e" opacity="0.38"/><rect x="999.10" y="151.24" width="6.30" height="1.3" fill="#75715e" opacity="0.38"/><rect x="1006.30" y="151.24" width="0.90" height="1.3" fill="#75715e" opacity="0.38"/><rect x="1008.10" y="151.24" width="0.90" height="1.3" fill="#75715e" opacity="0.38"/><rect x="1009.90" y="151.24" width="0.90" height="1.3" fill="#75715e" opacity="0.38"/><rect x="1011.70" y="151.24" width="5.40" height="1.3" fill="#75715e" opacity="0.38"/><rect x="1018.00" y="151.24" width="1.80" height="1.3" fill="#75715e" opacity="0.38"/><rect x="1020.70" y="151.24" width="6.30" height="1.3" fill="#75715e" opacity="0.38"/><rect x="1027.90" y="151.24" width="2.70" height="1.3" fill="#75715e" opacity="0.38"/><rect x="1031.50" y="151.24" width="5.40" height="1.3" fill="#75715e" opacity="0.38"/><rect x="1037.80" y="151.24" width="1.80" height="1.3" fill="#75715e" opacity="0.38"/><rect x="984.70" y="153.21" width="1.80" height="1.3" fill="#75715e" opacity="0.38"/><rect x="987.40" y="153.21" width="4.50" height="1.3" fill="#75715e" opacity="0.38"/><rect x="992.80" y="153.21" width="4.50" height="1.3" fill="#75715e" opacity="0.38"/><rect x="998.20" y="153.21" width="1.80" height="1.3" fill="#75715e" opacity="0.38"/><rect x="1000.90" y="153.21" width="2.70" height="1.3" fill="#75715e" opacity="0.38"/><rect x="1004.50" y="153.21" width="5.40" height="1.3" fill="#75715e" opacity="0.38"/><rect x="1010.80" y="153.21" width="2.70" height="1.3" fill="#75715e" opacity="0.38"/><rect x="1014.40" y="153.21" width="8.10" height="1.3" fill="#75715e" opacity="0.38"/><rect x="1023.40" y="153.21" width="4.50" height="1.3" fill="#75715e" opacity="0.38"/><rect x="1028.80" y="153.21" width="3.60" height="1.3" fill="#75715e" opacity="0.38"/><rect x="1033.30" y="153.21" width="2.70" height="1.3" fill="#75715e" opacity="0.38"/><rect x="1036.90" y="153.21" width="3.60" height="1.3" fill="#75715e" opacity="0.38"/><rect x="1041.40" y="153.21" width="3.60" height="1.3" fill="#75715e" opacity="0.38"/><rect x="984.70" y="155.18" width="1.80" height="1.3" fill="#75715e" opacity="0.38"/><rect x="987.40" y="155.18" width="1.80" height="1.3" fill="#75715e" opacity="0.38"/><rect x="990.10" y="155.18" width="5.40" height="1.3" fill="#75715e" opacity="0.38"/><rect x="996.40" y="155.18" width="2.70" height="1.3" fill="#75715e" opacity="0.38"/><rect x="1000.00" y="155.18" width="4.50" height="1.3" fill="#75715e" opacity="0.38"/><rect x="1005.40" y="155.18" width="3.60" height="1.3" fill="#75715e" opacity="0.38"/><rect x="1009.90" y="155.18" width="0.90" height="1.3" fill="#75715e" opacity="0.38"/><rect x="1011.70" y="155.18" width="1.80" height="1.3" fill="#75715e" opacity="0.38"/><rect x="1014.40" y="155.18" width="1.80" height="1.3" fill="#75715e" opacity="0.38"/><rect x="1017.10" y="155.18" width="3.60" height="1.3" fill="#75715e" opacity="0.38"/><rect x="1021.60" y="155.18" width="0.90" height="1.3" fill="#75715e" opacity="0.38"/><rect x="1023.40" y="155.18" width="9.00" height="1.3" fill="#75715e" opacity="0.38"/><rect x="1033.30" y="155.18" width="4.50" height="1.3" fill="#75715e" opacity="0.38"/><rect x="984.70" y="157.15" width="1.80" height="1.3" fill="#75715e" opacity="0.38"/><rect x="987.40" y="157.15" width="1.80" height="1.3" fill="#75715e" opacity="0.38"/><rect x="990.10" y="157.15" width="7.20" height="1.3" fill="#75715e" opacity="0.38"/><rect x="998.20" y="157.15" width="1.80" height="1.3" fill="#75715e" opacity="0.38"/><rect x="1000.90" y="157.15" width="3.60" height="1.3" fill="#75715e" opacity="0.38"/><rect x="1005.40" y="157.15" width="6.30" height="1.3" fill="#75715e" opacity="0.38"/><rect x="1012.60" y="157.15" width="3.60" height="1.3" fill="#75715e" opacity="0.38"/><rect x="1017.10" y="157.15" width="1.80" height="1.3" fill="#75715e" opacity="0.38"/><rect x="1019.80" y="157.15" width="3.60" height="1.3" fill="#75715e" opacity="0.38"/><rect x="1024.30" y="157.15" width="0.90" height="1.3" fill="#75715e" opacity="0.38"/><rect x="1026.10" y="157.15" width="5.40" height="1.3" fill="#75715e" opacity="0.38"/><rect x="1032.40" y="157.15" width="8.10" height="1.3" fill="#75715e" opacity="0.38"/><rect x="984.70" y="159.13" width="1.80" height="1.3" fill="#75715e" opacity="0.38"/><rect x="987.40" y="159.13" width="0.90" height="1.3" fill="#75715e" opacity="0.38"/><rect x="989.20" y="159.13" width="7.20" height="1.3" fill="#75715e" opacity="0.38"/><rect x="997.30" y="159.13" width="5.40" height="1.3" fill="#75715e" opacity="0.38"/><rect x="1003.60" y="159.13" width="1.80" height="1.3" fill="#75715e" opacity="0.38"/><rect x="1006.30" y="159.13" width="4.50" height="1.3" fill="#75715e" opacity="0.38"/><rect x="1011.70" y="159.13" width="1.80" height="1.3" fill="#75715e" opacity="0.38"/><rect x="1014.40" y="159.13" width="2.70" height="1.3" fill="#75715e" opacity="0.38"/><rect x="1018.00" y="159.13" width="2.70" height="1.3" fill="#75715e" opacity="0.38"/><rect x="1021.60" y="159.13" width="1.80" height="1.3" fill="#75715e" opacity="0.38"/><rect x="1024.30" y="159.13" width="2.70" height="1.3" fill="#75715e" opacity="0.38"/><rect x="1027.90" y="159.13" width="4.50" height="1.3" fill="#75715e" opacity="0.38"/><rect x="1033.30" y="159.13" width="5.40" height="1.3" fill="#75715e" opacity="0.38"/><rect x="1039.60" y="159.13" width="2.70" height="1.3" fill="#75715e" opacity="0.38"/><rect x="984.70" y="161.10" width="1.80" height="1.3" fill="#75715e" opacity="0.38"/><rect x="987.40" y="161.10" width="5.40" height="1.3" fill="#75715e" opacity="0.38"/><rect x="993.70" y="161.10" width="5.40" height="1.3" fill="#75715e" opacity="0.38"/><rect x="1000.00" y="161.10" width="2.70" height="1.3" fill="#75715e" opacity="0.38"/><rect x="1003.60" y="161.10" width="1.80" height="1.3" fill="#75715e" opacity="0.38"/><rect x="1006.30" y="161.10" width="2.70" height="1.3" fill="#75715e" opacity="0.38"/><rect x="1009.90" y="161.10" width="1.80" height="1.3" fill="#75715e" opacity="0.38"/><rect x="1012.60" y="161.10" width="2.70" height="1.3" fill="#75715e" opacity="0.38"/><rect x="1016.20" y="161.10" width="1.80" height="1.3" fill="#75715e" opacity="0.38"/><rect x="1018.90" y="161.10" width="3.60" height="1.3" fill="#75715e" opacity="0.38"/><rect x="1023.40" y="161.10" width="2.70" height="1.3" fill="#75715e" opacity="0.38"/><rect x="1027.00" y="161.10" width="3.60" height="1.3" fill="#75715e" opacity="0.38"/><rect x="1031.50" y="161.10" width="3.60" height="1.3" fill="#75715e" opacity="0.38"/><rect x="1036.00" y="161.10" width="5.40" height="1.3" fill="#75715e" opacity="0.38"/><rect x="984.70" y="163.07" width="1.80" height="1.3" fill="#75715e" opacity="0.38"/><rect x="987.40" y="163.07" width="5.40" height="1.3" fill="#75715e" opacity="0.38"/><rect x="993.70" y="163.07" width="1.80" height="1.3" fill="#75715e" opacity="0.38"/><rect x="996.40" y="163.07" width="3.60" height="1.3" fill="#75715e" opacity="0.38"/><rect x="984.70" y="165.05" width="1.80" height="1.3" fill="#75715e" opacity="0.38"/><rect x="984.70" y="167.02" width="1.80" height="1.3" fill="#75715e" opacity="0.38"/><rect x="987.40" y="167.02" width="6.30" height="1.3" fill="#75715e" opacity="0.38"/><rect x="994.60" y="167.02" width="5.40" height="1.3" fill="#75715e" opacity="0.38"/><rect x="1000.90" y="167.02" width="5.40" height="1.3" fill="#75715e" opacity="0.38"/><rect x="1007.20" y="167.02" width="6.30" height="1.3" fill="#75715e" opacity="0.38"/><rect x="1014.40" y="167.02" width="2.70" height="1.3" fill="#75715e" opacity="0.38"/><rect x="1018.00" y="167.02" width="0.90" height="1.3" fill="#75715e" opacity="0.38"/><rect x="1019.80" y="167.02" width="0.90" height="1.3" fill="#75715e" opacity="0.38"/><rect x="1021.60" y="167.02" width="0.90" height="1.3" fill="#75715e" opacity="0.38"/><rect x="1023.40" y="167.02" width="4.50" height="1.3" fill="#75715e" opacity="0.38"/><rect x="1028.80" y="167.02" width="7.20" height="1.3" fill="#75715e" opacity="0.38"/><rect x="1036.90" y="167.02" width="5.40" height="1.3" fill="#75715e" opacity="0.38"/><rect x="984.70" y="168.99" width="1.80" height="1.3" fill="#75715e" opacity="0.38"/><rect x="987.40" y="168.99" width="9.90" height="1.3" fill="#75715e" opacity="0.38"/><rect x="998.20" y="168.99" width="2.70" height="1.3" fill="#75715e" opacity="0.38"/><rect x="1001.80" y="168.99" width="4.50" height="1.3" fill="#75715e" opacity="0.38"/><rect x="1007.20" y="168.99" width="3.60" height="1.3" fill="#75715e" opacity="0.38"/><rect x="1011.70" y="168.99" width="4.50" height="1.3" fill="#75715e" opacity="0.38"/><rect x="1017.10" y="168.99" width="1.80" height="1.3" fill="#75715e" opacity="0.38"/><rect x="1019.80" y="168.99" width="8.10" height="1.3" fill="#75715e" opacity="0.38"/><rect x="1028.80" y="168.99" width="6.30" height="1.3" fill="#75715e" opacity="0.38"/><rect x="1036.00" y="168.99" width="2.70" height="1.3" fill="#75715e" opacity="0.38"/><rect x="1039.60" y="168.99" width="5.40" height="1.3" fill="#75715e" opacity="0.38"/><rect x="984.70" y="170.97" width="1.80" height="1.3" fill="#75715e" opacity="0.38"/><rect x="987.40" y="170.97" width="3.60" height="1.3" fill="#75715e" opacity="0.38"/><rect x="991.90" y="170.97" width="5.40" height="1.3" fill="#75715e" opacity="0.38"/><rect x="998.20" y="170.97" width="4.50" height="1.3" fill="#75715e" opacity="0.38"/><rect x="1003.60" y="170.97" width="6.30" height="1.3" fill="#75715e" opacity="0.38"/><rect x="1010.80" y="170.97" width="3.60" height="1.3" fill="#75715e" opacity="0.38"/><rect x="1015.30" y="170.97" width="4.50" height="1.3" fill="#75715e" opacity="0.38"/><rect x="1020.70" y="170.97" width="2.70" height="1.3" fill="#75715e" opacity="0.38"/><rect x="1024.30" y="170.97" width="3.60" height="1.3" fill="#75715e" opacity="0.38"/><rect x="1028.80" y="170.97" width="3.60" height="1.3" fill="#75715e" opacity="0.38"/><rect x="1033.30" y="170.97" width="1.80" height="1.3" fill="#75715e" opacity="0.38"/><rect x="1036.00" y="170.97" width="2.70" height="1.3" fill="#75715e" opacity="0.38"/><rect x="984.70" y="172.94" width="1.80" height="1.3" fill="#75715e" opacity="0.38"/><rect x="987.40" y="172.94" width="6.30" height="1.3" fill="#75715e" opacity="0.38"/><rect x="994.60" y="172.94" width="2.70" height="1.3" fill="#75715e" opacity="0.38"/><rect x="998.20" y="172.94" width="9.00" height="1.3" fill="#75715e" opacity="0.38"/><rect x="984.70" y="174.91" width="1.80" height="1.3" fill="#75715e" opacity="0.38"/><rect x="984.70" y="176.88" width="1.80" height="1.3" fill="#75715e" opacity="0.38"/><rect x="987.40" y="176.88" width="13.50" height="1.3" fill="#75715e" opacity="0.38"/><rect x="1001.80" y="176.88" width="1.80" height="1.3" fill="#75715e" opacity="0.38"/><rect x="1004.50" y="176.88" width="3.60" height="1.3" fill="#75715e" opacity="0.38"/><rect x="1009.00" y="176.88" width="2.70" height="1.3" fill="#75715e" opacity="0.38"/><rect x="1012.60" y="176.88" width="9.90" height="1.3" fill="#75715e" opacity="0.38"/><rect x="1023.40" y="176.88" width="3.60" height="1.3" fill="#75715e" opacity="0.38"/><rect x="1027.90" y="176.88" width="8.10" height="1.3" fill="#75715e" opacity="0.38"/><rect x="1036.90" y="176.88" width="0.90" height="1.3" fill="#75715e" opacity="0.38"/><rect x="984.70" y="178.86" width="1.80" height="1.3" fill="#75715e" opacity="0.38"/><rect x="987.40" y="178.86" width="3.60" height="1.3" fill="#75715e" opacity="0.38"/><rect x="991.90" y="178.86" width="3.60" height="1.3" fill="#75715e" opacity="0.38"/><rect x="996.40" y="178.86" width="4.50" height="1.3" fill="#75715e" opacity="0.38"/><rect x="1001.80" y="178.86" width="3.60" height="1.3" fill="#75715e" opacity="0.38"/><rect x="1006.30" y="178.86" width="0.90" height="1.3" fill="#75715e" opacity="0.38"/><rect x="1008.10" y="178.86" width="2.70" height="1.3" fill="#75715e" opacity="0.38"/><rect x="1011.70" y="178.86" width="5.40" height="1.3" fill="#75715e" opacity="0.38"/><rect x="1018.00" y="178.86" width="5.40" height="1.3" fill="#75715e" opacity="0.38"/><rect x="1024.30" y="178.86" width="3.60" height="1.3" fill="#75715e" opacity="0.38"/><rect x="1028.80" y="178.86" width="5.40" height="1.3" fill="#75715e" opacity="0.38"/><rect x="1035.10" y="178.86" width="1.80" height="1.3" fill="#75715e" opacity="0.38"/><rect x="1037.80" y="178.86" width="1.80" height="1.3" fill="#75715e" opacity="0.38"/><rect x="984.70" y="180.83" width="1.80" height="1.3" fill="#75715e" opacity="0.38"/><rect x="987.40" y="180.83" width="6.30" height="1.3" fill="#75715e" opacity="0.38"/><rect x="994.60" y="180.83" width="5.40" height="1.3" fill="#75715e" opacity="0.38"/><rect x="1000.90" y="180.83" width="4.50" height="1.3" fill="#75715e" opacity="0.38"/><rect x="1006.30" y="180.83" width="0.90" height="1.3" fill="#75715e" opacity="0.38"/><rect x="1008.10" y="180.83" width="5.40" height="1.3" fill="#75715e" opacity="0.38"/><rect x="1014.40" y="180.83" width="1.80" height="1.3" fill="#75715e" opacity="0.38"/><rect x="1017.10" y="180.83" width="0.90" height="1.3" fill="#75715e" opacity="0.38"/><rect x="1018.90" y="180.83" width="2.70" height="1.3" fill="#75715e" opacity="0.38"/><rect x="1022.50" y="180.83" width="2.70" height="1.3" fill="#75715e" opacity="0.38"/><rect x="1026.10" y="180.83" width="1.80" height="1.3" fill="#75715e" opacity="0.38"/><rect x="1028.80" y="180.83" width="9.00" height="1.3" fill="#75715e" opacity="0.38"/><rect x="1038.70" y="180.83" width="3.60" height="1.3" fill="#75715e" opacity="0.38"/><rect x="984.70" y="182.80" width="1.80" height="1.3" fill="#75715e" opacity="0.38"/><rect x="987.40" y="182.80" width="6.30" height="1.3" fill="#75715e" opacity="0.38"/><rect x="994.60" y="182.80" width="8.10" height="1.3" fill="#75715e" opacity="0.38"/><rect x="1003.60" y="182.80" width="1.80" height="1.3" fill="#75715e" opacity="0.38"/><rect x="1006.30" y="182.80" width="9.00" height="1.3" fill="#75715e" opacity="0.38"/><rect x="1016.20" y="182.80" width="1.80" height="1.3" fill="#75715e" opacity="0.38"/><rect x="1018.90" y="182.80" width="3.60" height="1.3" fill="#75715e" opacity="0.38"/><rect x="1023.40" y="182.80" width="2.70" height="1.3" fill="#75715e" opacity="0.38"/><rect x="1027.00" y="182.80" width="7.20" height="1.3" fill="#75715e" opacity="0.38"/><rect x="1035.10" y="182.80" width="3.60" height="1.3" fill="#75715e" opacity="0.38"/><rect x="984.70" y="184.78" width="1.80" height="1.3" fill="#75715e" opacity="0.38"/><rect x="984.70" y="186.75" width="1.80" height="1.3" fill="#75715e" opacity="0.38"/><rect x="987.40" y="186.75" width="13.50" height="1.3" fill="#75715e" opacity="0.38"/><rect x="1001.80" y="186.75" width="3.60" height="1.3" fill="#75715e" opacity="0.38"/><rect x="1006.30" y="186.75" width="2.70" height="1.3" fill="#75715e" opacity="0.38"/><rect x="1009.90" y="186.75" width="5.40" height="1.3" fill="#75715e" opacity="0.38"/><rect x="1016.20" y="186.75" width="1.80" height="1.3" fill="#75715e" opacity="0.38"/><rect x="984.70" y="188.72" width="3.60" height="1.3" fill="#2cc6e4" opacity="0.62"/><rect x="989.20" y="188.72" width="5.40" height="1.3" fill="#a6e22e" opacity="0.62"/><rect x="995.50" y="188.72" width="8.10" height="1.3" fill="#2cc6e4" opacity="0.62"/><rect x="1004.50" y="188.72" width="0.90" height="1.3" fill="#f8f8f2" opacity="0.5"/><rect x="988.30" y="190.69" width="3.60" height="1.3" fill="#a6e22e" opacity="0.62"/><rect x="991.90" y="190.69" width="0.90" height="1.3" fill="#f8f8f2" opacity="0.5"/><rect x="992.80" y="190.69" width="0.90" height="1.3" fill="#fd971f" opacity="0.62"/><rect x="994.60" y="190.69" width="0.90" height="1.3" fill="#f8f8f2" opacity="0.5"/><rect x="995.50" y="190.69" width="0.90" height="1.3" fill="#f8f8f2" opacity="0.5"/><rect x="996.40" y="190.69" width="3.60" height="1.3" fill="#2cc6e4" opacity="0.62"/><rect x="1000.00" y="190.69" width="0.90" height="1.3" fill="#f8f8f2" opacity="0.5"/><rect x="1001.80" y="190.69" width="0.90" height="1.3" fill="#f8f8f2" opacity="0.5"/><rect x="1002.70" y="190.69" width="0.90" height="1.3" fill="#fd971f" opacity="0.62"/><rect x="1004.50" y="190.69" width="2.70" height="1.3" fill="#2cc6e4" opacity="0.62"/><rect x="1007.20" y="190.69" width="0.90" height="1.3" fill="#f8f8f2" opacity="0.5"/><rect x="1009.00" y="190.69" width="2.70" height="1.3" fill="#fd971f" opacity="0.62"/><rect x="1012.60" y="190.69" width="4.50" height="1.3" fill="#2cc6e4" opacity="0.62"/><rect x="1017.10" y="190.69" width="0.90" height="1.3" fill="#f8f8f2" opacity="0.5"/><rect x="984.70" y="192.67" width="0.90" height="1.3" fill="#f8f8f2" opacity="0.5"/><rect x="984.70" y="196.61" width="1.80" height="1.3" fill="#75715e" opacity="0.38"/><rect x="987.40" y="196.61" width="5.40" height="1.3" fill="#75715e" opacity="0.38"/><rect x="993.70" y="196.61" width="1.80" height="1.3" fill="#75715e" opacity="0.38"/><rect x="996.40" y="196.61" width="2.70" height="1.3" fill="#75715e" opacity="0.38"/><rect x="1000.00" y="196.61" width="8.10" height="1.3" fill="#75715e" opacity="0.38"/><rect x="1009.00" y="196.61" width="3.60" height="1.3" fill="#75715e" opacity="0.38"/><rect x="1013.50" y="196.61" width="4.50" height="1.3" fill="#75715e" opacity="0.38"/><rect x="1018.90" y="196.61" width="2.70" height="1.3" fill="#75715e" opacity="0.38"/><rect x="1022.50" y="196.61" width="4.50" height="1.3" fill="#75715e" opacity="0.38"/><rect x="1027.90" y="196.61" width="4.50" height="1.3" fill="#75715e" opacity="0.38"/><rect x="1033.30" y="196.61" width="6.30" height="1.3" fill="#75715e" opacity="0.38"/><rect x="984.70" y="198.59" width="1.80" height="1.3" fill="#75715e" opacity="0.38"/><rect x="984.70" y="200.56" width="1.80" height="1.3" fill="#75715e" opacity="0.38"/><rect x="987.40" y="200.56" width="4.50" height="1.3" fill="#75715e" opacity="0.38"/><rect x="992.80" y="200.56" width="5.40" height="1.3" fill="#75715e" opacity="0.38"/><rect x="999.10" y="200.56" width="5.40" height="1.3" fill="#75715e" opacity="0.38"/><rect x="1005.40" y="200.56" width="4.50" height="1.3" fill="#75715e" opacity="0.38"/><rect x="1010.80" y="200.56" width="3.60" height="1.3" fill="#75715e" opacity="0.38"/><rect x="1015.30" y="200.56" width="0.90" height="1.3" fill="#75715e" opacity="0.38"/><rect x="1017.10" y="200.56" width="1.80" height="1.3" fill="#75715e" opacity="0.38"/><rect x="1019.80" y="200.56" width="2.70" height="1.3" fill="#75715e" opacity="0.38"/><rect x="1023.40" y="200.56" width="9.00" height="1.3" fill="#75715e" opacity="0.38"/><rect x="1033.30" y="200.56" width="3.60" height="1.3" fill="#75715e" opacity="0.38"/><rect x="1037.80" y="200.56" width="6.30" height="1.3" fill="#75715e" opacity="0.38"/><rect x="984.70" y="202.53" width="1.80" height="1.3" fill="#75715e" opacity="0.38"/><rect x="987.40" y="202.53" width="1.80" height="1.3" fill="#75715e" opacity="0.38"/><rect x="990.10" y="202.53" width="6.30" height="1.3" fill="#75715e" opacity="0.38"/><rect x="997.30" y="202.53" width="2.70" height="1.3" fill="#75715e" opacity="0.38"/><rect x="1000.90" y="202.53" width="5.40" height="1.3" fill="#75715e" opacity="0.38"/><rect x="1007.20" y="202.53" width="1.80" height="1.3" fill="#75715e" opacity="0.38"/><rect x="1009.90" y="202.53" width="4.50" height="1.3" fill="#75715e" opacity="0.38"/><rect x="1015.30" y="202.53" width="6.30" height="1.3" fill="#75715e" opacity="0.38"/><rect x="1022.50" y="202.53" width="3.60" height="1.3" fill="#75715e" opacity="0.38"/><rect x="1027.00" y="202.53" width="0.90" height="1.3" fill="#75715e" opacity="0.38"/><rect x="1028.80" y="202.53" width="1.80" height="1.3" fill="#75715e" opacity="0.38"/><rect x="1031.50" y="202.53" width="1.80" height="1.3" fill="#75715e" opacity="0.38"/><rect x="1034.20" y="202.53" width="0.90" height="1.3" fill="#75715e" opacity="0.38"/><rect x="1036.00" y="202.53" width="1.80" height="1.3" fill="#75715e" opacity="0.38"/><rect x="1038.70" y="202.53" width="6.30" height="1.3" fill="#75715e" opacity="0.38"/><rect x="984.70" y="204.51" width="1.80" height="1.3" fill="#75715e" opacity="0.38"/><rect x="987.40" y="204.51" width="2.70" height="1.3" fill="#75715e" opacity="0.38"/><rect x="991.00" y="204.51" width="2.70" height="1.3" fill="#75715e" opacity="0.38"/><rect x="994.60" y="204.51" width="4.50" height="1.3" fill="#75715e" opacity="0.38"/><rect x="1000.00" y="204.51" width="9.90" height="1.3" fill="#75715e" opacity="0.38"/><rect x="1010.80" y="204.51" width="3.60" height="1.3" fill="#75715e" opacity="0.38"/><rect x="1015.30" y="204.51" width="5.40" height="1.3" fill="#75715e" opacity="0.38"/><rect x="1021.60" y="204.51" width="2.70" height="1.3" fill="#75715e" opacity="0.38"/><rect x="1025.20" y="204.51" width="4.50" height="1.3" fill="#75715e" opacity="0.38"/><rect x="1030.60" y="204.51" width="1.80" height="1.3" fill="#75715e" opacity="0.38"/><rect x="1033.30" y="204.51" width="3.60" height="1.3" fill="#75715e" opacity="0.38"/><rect x="1037.80" y="204.51" width="5.40" height="1.3" fill="#75715e" opacity="0.38"/><rect x="984.70" y="206.48" width="1.80" height="1.3" fill="#75715e" opacity="0.38"/><rect x="987.40" y="206.48" width="4.50" height="1.3" fill="#75715e" opacity="0.38"/><rect x="992.80" y="206.48" width="3.60" height="1.3" fill="#75715e" opacity="0.38"/><rect x="997.30" y="206.48" width="5.40" height="1.3" fill="#75715e" opacity="0.38"/><rect x="1003.60" y="206.48" width="0.90" height="1.3" fill="#75715e" opacity="0.38"/><rect x="1005.40" y="206.48" width="6.30" height="1.3" fill="#75715e" opacity="0.38"/><rect x="1012.60" y="206.48" width="4.50" height="1.3" fill="#75715e" opacity="0.38"/><rect x="1018.00" y="206.48" width="1.80" height="1.3" fill="#75715e" opacity="0.38"/><rect x="1020.70" y="206.48" width="1.80" height="1.3" fill="#75715e" opacity="0.38"/><rect x="1023.40" y="206.48" width="6.30" height="1.3" fill="#75715e" opacity="0.38"/><rect x="1030.60" y="206.48" width="0.90" height="1.3" fill="#75715e" opacity="0.38"/><rect x="1032.40" y="206.48" width="0.90" height="1.3" fill="#75715e" opacity="0.38"/><rect x="1034.20" y="206.48" width="6.30" height="1.3" fill="#75715e" opacity="0.38"/><rect x="984.70" y="208.45" width="1.80" height="1.3" fill="#75715e" opacity="0.38"/><rect x="987.40" y="208.45" width="4.50" height="1.3" fill="#75715e" opacity="0.38"/><rect x="992.80" y="208.45" width="3.60" height="1.3" fill="#75715e" opacity="0.38"/><rect x="997.30" y="208.45" width="2.70" height="1.3" fill="#75715e" opacity="0.38"/><rect x="1000.90" y="208.45" width="5.40" height="1.3" fill="#75715e" opacity="0.38"/><rect x="1007.20" y="208.45" width="2.70" height="1.3" fill="#75715e" opacity="0.38"/><rect x="1010.80" y="208.45" width="4.50" height="1.3" fill="#75715e" opacity="0.38"/><rect x="1016.20" y="208.45" width="4.50" height="1.3" fill="#75715e" opacity="0.38"/><rect x="1021.60" y="208.45" width="3.60" height="1.3" fill="#75715e" opacity="0.38"/><rect x="1026.10" y="208.45" width="10.80" height="1.3" fill="#75715e" opacity="0.38"/><rect x="984.70" y="210.42" width="1.80" height="1.3" fill="#75715e" opacity="0.38"/><rect x="984.70" y="212.40" width="1.80" height="1.3" fill="#75715e" opacity="0.38"/><rect x="987.40" y="212.40" width="13.50" height="1.3" fill="#75715e" opacity="0.38"/><rect x="1001.80" y="212.40" width="3.60" height="1.3" fill="#75715e" opacity="0.38"/><rect x="1006.30" y="212.40" width="2.70" height="1.3" fill="#75715e" opacity="0.38"/><rect x="1009.90" y="212.40" width="5.40" height="1.3" fill="#75715e" opacity="0.38"/><rect x="1016.20" y="212.40" width="1.80" height="1.3" fill="#75715e" opacity="0.38"/><rect x="984.70" y="214.37" width="3.60" height="1.3" fill="#2cc6e4" opacity="0.62"/><rect x="989.20" y="214.37" width="5.40" height="1.3" fill="#a6e22e" opacity="0.62"/><rect x="995.50" y="214.37" width="8.10" height="1.3" fill="#2cc6e4" opacity="0.62"/><rect x="1004.50" y="214.37" width="0.90" height="1.3" fill="#f8f8f2" opacity="0.5"/><rect x="988.30" y="216.34" width="4.50" height="1.3" fill="#a6e22e" opacity="0.62"/><rect x="992.80" y="216.34" width="0.90" height="1.3" fill="#f8f8f2" opacity="0.5"/><rect x="993.70" y="216.34" width="0.90" height="1.3" fill="#fd971f" opacity="0.62"/><rect x="995.50" y="216.34" width="0.90" height="1.3" fill="#f8f8f2" opacity="0.5"/><rect x="996.40" y="216.34" width="0.90" height="1.3" fill="#f8f8f2" opacity="0.5"/><rect x="997.30" y="216.34" width="3.60" height="1.3" fill="#2cc6e4" opacity="0.62"/><rect x="1000.90" y="216.34" width="0.90" height="1.3" fill="#f8f8f2" opacity="0.5"/><rect x="1002.70" y="216.34" width="0.90" height="1.3" fill="#f8f8f2" opacity="0.5"/><rect x="1003.60" y="216.34" width="0.90" height="1.3" fill="#fd971f" opacity="0.62"/><rect x="1005.40" y="216.34" width="2.70" height="1.3" fill="#2cc6e4" opacity="0.62"/><rect x="1008.10" y="216.34" width="0.90" height="1.3" fill="#f8f8f2" opacity="0.5"/><rect x="1009.90" y="216.34" width="2.70" height="1.3" fill="#fd971f" opacity="0.62"/><rect x="1013.50" y="216.34" width="4.50" height="1.3" fill="#2cc6e4" opacity="0.62"/><rect x="1018.00" y="216.34" width="0.90" height="1.3" fill="#f8f8f2" opacity="0.5"/><rect x="984.70" y="218.32" width="0.90" height="1.3" fill="#f8f8f2" opacity="0.5"/><rect x="984.70" y="222.26" width="1.80" height="1.3" fill="#75715e" opacity="0.38"/><rect x="987.40" y="222.26" width="5.40" height="1.3" fill="#75715e" opacity="0.38"/><rect x="993.70" y="222.26" width="1.80" height="1.3" fill="#75715e" opacity="0.38"/><rect x="996.40" y="222.26" width="2.70" height="1.3" fill="#75715e" opacity="0.38"/><rect x="1000.00" y="222.26" width="8.10" height="1.3" fill="#75715e" opacity="0.38"/><rect x="1009.00" y="222.26" width="3.60" height="1.3" fill="#75715e" opacity="0.38"/><rect x="1013.50" y="222.26" width="4.50" height="1.3" fill="#75715e" opacity="0.38"/><rect x="1018.90" y="222.26" width="2.70" height="1.3" fill="#75715e" opacity="0.38"/><rect x="1022.50" y="222.26" width="4.50" height="1.3" fill="#75715e" opacity="0.38"/><rect x="1027.90" y="222.26" width="4.50" height="1.3" fill="#75715e" opacity="0.38"/><rect x="1033.30" y="222.26" width="6.30" height="1.3" fill="#75715e" opacity="0.38"/><rect x="984.70" y="224.24" width="1.80" height="1.3" fill="#75715e" opacity="0.38"/><rect x="984.70" y="226.21" width="1.80" height="1.3" fill="#75715e" opacity="0.38"/><rect x="987.40" y="226.21" width="2.70" height="1.3" fill="#75715e" opacity="0.38"/><rect x="991.00" y="226.21" width="7.20" height="1.3" fill="#75715e" opacity="0.38"/><rect x="999.10" y="226.21" width="1.80" height="1.3" fill="#75715e" opacity="0.38"/><rect x="1001.80" y="226.21" width="4.50" height="1.3" fill="#75715e" opacity="0.38"/><rect x="1007.20" y="226.21" width="4.50" height="1.3" fill="#75715e" opacity="0.38"/><rect x="1012.60" y="226.21" width="2.70" height="1.3" fill="#75715e" opacity="0.38"/><rect x="1016.20" y="226.21" width="4.50" height="1.3" fill="#75715e" opacity="0.38"/><rect x="1021.60" y="226.21" width="3.60" height="1.3" fill="#75715e" opacity="0.38"/><rect x="1026.10" y="226.21" width="1.80" height="1.3" fill="#75715e" opacity="0.38"/><rect x="1028.80" y="226.21" width="9.00" height="1.3" fill="#75715e" opacity="0.38"/><rect x="984.70" y="228.18" width="1.80" height="1.3" fill="#75715e" opacity="0.38"/><rect x="987.40" y="228.18" width="7.20" height="1.3" fill="#75715e" opacity="0.38"/><rect x="995.50" y="228.18" width="13.50" height="1.3" fill="#75715e" opacity="0.38"/><rect x="1009.90" y="228.18" width="2.70" height="1.3" fill="#75715e" opacity="0.38"/><rect x="1013.50" y="228.18" width="7.20" height="1.3" fill="#75715e" opacity="0.38"/><rect x="1021.60" y="228.18" width="4.50" height="1.3" fill="#75715e" opacity="0.38"/><rect x="1027.00" y="228.18" width="2.70" height="1.3" fill="#75715e" opacity="0.38"/><rect x="1030.60" y="228.18" width="8.10" height="1.3" fill="#75715e" opacity="0.38"/><rect x="984.70" y="230.16" width="3.60" height="1.3" fill="#2cc6e4" opacity="0.62"/><rect x="989.20" y="230.16" width="5.40" height="1.3" fill="#a6e22e" opacity="0.62"/><rect x="995.50" y="230.16" width="8.10" height="1.3" fill="#2cc6e4" opacity="0.62"/><rect x="1004.50" y="230.16" width="0.90" height="1.3" fill="#f8f8f2" opacity="0.5"/><rect x="988.30" y="232.13" width="4.50" height="1.3" fill="#a6e22e" opacity="0.62"/><rect x="992.80" y="232.13" width="0.90" height="1.3" fill="#f8f8f2" opacity="0.5"/><rect x="993.70" y="232.13" width="0.90" height="1.3" fill="#f8f8f2" opacity="0.5"/><rect x="995.50" y="232.13" width="4.50" height="1.3" fill="#2cc6e4" opacity="0.62"/><rect x="984.70" y="234.10" width="0.90" height="1.3" fill="#f8f8f2" opacity="0.5"/><rect x="984.70" y="238.05" width="1.80" height="1.3" fill="#75715e" opacity="0.38"/><rect x="987.40" y="238.05" width="5.40" height="1.3" fill="#75715e" opacity="0.38"/><rect x="993.70" y="238.05" width="1.80" height="1.3" fill="#75715e" opacity="0.38"/><rect x="996.40" y="238.05" width="2.70" height="1.3" fill="#75715e" opacity="0.38"/><rect x="1000.00" y="238.05" width="8.10" height="1.3" fill="#75715e" opacity="0.38"/><rect x="1009.00" y="238.05" width="3.60" height="1.3" fill="#75715e" opacity="0.38"/><rect x="1013.50" y="238.05" width="4.50" height="1.3" fill="#75715e" opacity="0.38"/><rect x="1018.90" y="238.05" width="2.70" height="1.3" fill="#75715e" opacity="0.38"/><rect x="1022.50" y="238.05" width="4.50" height="1.3" fill="#75715e" opacity="0.38"/><rect x="1027.90" y="238.05" width="3.60" height="1.3" fill="#75715e" opacity="0.38"/><rect x="1032.40" y="238.05" width="6.30" height="1.3" fill="#75715e" opacity="0.38"/><rect x="984.70" y="240.02" width="1.80" height="1.3" fill="#75715e" opacity="0.38"/><rect x="984.70" y="241.99" width="1.80" height="1.3" fill="#75715e" opacity="0.38"/><rect x="987.40" y="241.99" width="3.60" height="1.3" fill="#75715e" opacity="0.38"/><rect x="991.90" y="241.99" width="3.60" height="1.3" fill="#75715e" opacity="0.38"/><rect x="996.40" y="241.99" width="2.70" height="1.3" fill="#75715e" opacity="0.38"/><rect x="1000.00" y="241.99" width="5.40" height="1.3" fill="#75715e" opacity="0.38"/><rect x="1006.30" y="241.99" width="2.70" height="1.3" fill="#75715e" opacity="0.38"/><rect x="1009.90" y="241.99" width="2.70" height="1.3" fill="#75715e" opacity="0.38"/><rect x="1013.50" y="241.99" width="3.60" height="1.3" fill="#75715e" opacity="0.38"/><rect x="1018.00" y="241.99" width="3.60" height="1.3" fill="#75715e" opacity="0.38"/><rect x="1022.50" y="241.99" width="1.80" height="1.3" fill="#75715e" opacity="0.38"/><rect x="1025.20" y="241.99" width="4.50" height="1.3" fill="#75715e" opacity="0.38"/><rect x="1030.60" y="241.99" width="1.80" height="1.3" fill="#75715e" opacity="0.38"/><rect x="1033.30" y="241.99" width="6.30" height="1.3" fill="#75715e" opacity="0.38"/><rect x="984.70" y="243.97" width="1.80" height="1.3" fill="#75715e" opacity="0.38"/><rect x="987.40" y="243.97" width="9.90" height="1.3" fill="#75715e" opacity="0.38"/><rect x="998.20" y="243.97" width="8.10" height="1.3" fill="#75715e" opacity="0.38"/><rect x="1007.20" y="243.97" width="1.80" height="1.3" fill="#75715e" opacity="0.38"/><rect x="1009.90" y="243.97" width="6.30" height="1.3" fill="#75715e" opacity="0.38"/><rect x="984.70" y="245.94" width="1.80" height="1.3" fill="#75715e" opacity="0.38"/><rect x="987.40" y="245.94" width="8.10" height="1.3" fill="#75715e" opacity="0.38"/><rect x="996.40" y="245.94" width="4.50" height="1.3" fill="#75715e" opacity="0.38"/><rect x="1001.80" y="245.94" width="7.20" height="1.3" fill="#75715e" opacity="0.38"/><rect x="1009.90" y="245.94" width="1.80" height="1.3" fill="#75715e" opacity="0.38"/><rect x="1012.60" y="245.94" width="2.70" height="1.3" fill="#75715e" opacity="0.38"/><rect x="1016.20" y="245.94" width="4.50" height="1.3" fill="#75715e" opacity="0.38"/><rect x="1021.60" y="245.94" width="1.80" height="1.3" fill="#75715e" opacity="0.38"/><rect x="1024.30" y="245.94" width="2.70" height="1.3" fill="#75715e" opacity="0.38"/><rect x="1027.90" y="245.94" width="4.50" height="1.3" fill="#75715e" opacity="0.38"/><rect x="984.70" y="247.91" width="1.80" height="1.3" fill="#75715e" opacity="0.38"/><rect x="987.40" y="247.91" width="9.90" height="1.3" fill="#75715e" opacity="0.38"/><rect x="998.20" y="247.91" width="4.50" height="1.3" fill="#75715e" opacity="0.38"/><rect x="1003.60" y="247.91" width="7.20" height="1.3" fill="#75715e" opacity="0.38"/><rect x="1011.70" y="247.91" width="1.80" height="1.3" fill="#75715e" opacity="0.38"/><rect x="1014.40" y="247.91" width="2.70" height="1.3" fill="#75715e" opacity="0.38"/><rect x="1018.00" y="247.91" width="6.30" height="1.3" fill="#75715e" opacity="0.38"/><rect x="1025.20" y="247.91" width="6.30" height="1.3" fill="#75715e" opacity="0.38"/><rect x="1032.40" y="247.91" width="2.70" height="1.3" fill="#75715e" opacity="0.38"/><rect x="984.70" y="249.88" width="1.80" height="1.3" fill="#75715e" opacity="0.38"/><rect x="987.40" y="249.88" width="6.30" height="1.3" fill="#75715e" opacity="0.38"/><rect x="994.60" y="249.88" width="4.50" height="1.3" fill="#75715e" opacity="0.38"/><rect x="1000.00" y="249.88" width="7.20" height="1.3" fill="#75715e" opacity="0.38"/><rect x="1008.10" y="249.88" width="1.80" height="1.3" fill="#75715e" opacity="0.38"/><rect x="1010.80" y="249.88" width="2.70" height="1.3" fill="#75715e" opacity="0.38"/><rect x="1014.40" y="249.88" width="3.60" height="1.3" fill="#75715e" opacity="0.38"/><rect x="984.70" y="251.86" width="1.80" height="1.3" fill="#75715e" opacity="0.38"/><rect x="987.40" y="251.86" width="3.60" height="1.3" fill="#75715e" opacity="0.38"/><rect x="991.90" y="251.86" width="6.30" height="1.3" fill="#75715e" opacity="0.38"/><rect x="999.10" y="251.86" width="2.70" height="1.3" fill="#75715e" opacity="0.38"/><rect x="1002.70" y="251.86" width="2.70" height="1.3" fill="#75715e" opacity="0.38"/><rect x="1006.30" y="251.86" width="5.40" height="1.3" fill="#75715e" opacity="0.38"/><rect x="1012.60" y="251.86" width="7.20" height="1.3" fill="#75715e" opacity="0.38"/><rect x="1020.70" y="251.86" width="1.80" height="1.3" fill="#75715e" opacity="0.38"/><rect x="1023.40" y="251.86" width="2.70" height="1.3" fill="#75715e" opacity="0.38"/><rect x="1027.00" y="251.86" width="4.50" height="1.3" fill="#75715e" opacity="0.38"/><rect x="1032.40" y="251.86" width="1.80" height="1.3" fill="#75715e" opacity="0.38"/><rect x="1035.10" y="251.86" width="2.70" height="1.3" fill="#75715e" opacity="0.38"/><rect x="984.70" y="253.83" width="1.80" height="1.3" fill="#75715e" opacity="0.38"/><rect x="987.40" y="253.83" width="3.60" height="1.3" fill="#75715e" opacity="0.38"/><rect x="991.90" y="253.83" width="2.70" height="1.3" fill="#75715e" opacity="0.38"/><rect x="995.50" y="253.83" width="1.80" height="1.3" fill="#75715e" opacity="0.38"/><rect x="998.20" y="253.83" width="5.40" height="1.3" fill="#75715e" opacity="0.38"/><rect x="1004.50" y="253.83" width="1.80" height="1.3" fill="#75715e" opacity="0.38"/><rect x="1007.20" y="253.83" width="3.60" height="1.3" fill="#75715e" opacity="0.38"/><rect x="984.70" y="255.80" width="1.80" height="1.3" fill="#75715e" opacity="0.38"/><rect x="984.70" y="257.78" width="1.80" height="1.3" fill="#75715e" opacity="0.38"/><rect x="987.40" y="257.78" width="6.30" height="1.3" fill="#75715e" opacity="0.38"/><rect x="994.60" y="257.78" width="1.80" height="1.3" fill="#75715e" opacity="0.38"/><rect x="997.30" y="257.78" width="1.80" height="1.3" fill="#75715e" opacity="0.38"/><rect x="1000.00" y="257.78" width="5.40" height="1.3" fill="#75715e" opacity="0.38"/><rect x="1006.30" y="257.78" width="5.40" height="1.3" fill="#75715e" opacity="0.38"/><rect x="1012.60" y="257.78" width="2.70" height="1.3" fill="#75715e" opacity="0.38"/><rect x="1016.20" y="257.78" width="4.50" height="1.3" fill="#75715e" opacity="0.38"/><rect x="1021.60" y="257.78" width="1.80" height="1.3" fill="#75715e" opacity="0.38"/><rect x="1024.30" y="257.78" width="2.70" height="1.3" fill="#75715e" opacity="0.38"/><rect x="1027.90" y="257.78" width="3.60" height="1.3" fill="#75715e" opacity="0.38"/><rect x="1032.40" y="257.78" width="1.80" height="1.3" fill="#75715e" opacity="0.38"/><rect x="1035.10" y="257.78" width="1.80" height="1.3" fill="#75715e" opacity="0.38"/><rect x="1037.80" y="257.78" width="5.40" height="1.3" fill="#75715e" opacity="0.38"/><rect x="984.70" y="259.75" width="1.80" height="1.3" fill="#75715e" opacity="0.38"/><rect x="987.40" y="259.75" width="6.30" height="1.3" fill="#75715e" opacity="0.38"/><rect x="994.60" y="259.75" width="1.80" height="1.3" fill="#75715e" opacity="0.38"/><rect x="997.30" y="259.75" width="2.70" height="1.3" fill="#75715e" opacity="0.38"/><rect x="1000.90" y="259.75" width="7.20" height="1.3" fill="#75715e" opacity="0.38"/><rect x="1009.00" y="259.75" width="5.40" height="1.3" fill="#75715e" opacity="0.38"/><rect x="1015.30" y="259.75" width="1.80" height="1.3" fill="#75715e" opacity="0.38"/><rect x="1018.00" y="259.75" width="5.40" height="1.3" fill="#75715e" opacity="0.38"/><rect x="1024.30" y="259.75" width="2.70" height="1.3" fill="#75715e" opacity="0.38"/><rect x="1027.90" y="259.75" width="2.70" height="1.3" fill="#75715e" opacity="0.38"/><rect x="1031.50" y="259.75" width="7.20" height="1.3" fill="#75715e" opacity="0.38"/><rect x="1039.60" y="259.75" width="1.80" height="1.3" fill="#75715e" opacity="0.38"/><rect x="1042.30" y="259.75" width="9.00" height="1.3" fill="#75715e" opacity="0.38"/><rect x="984.70" y="261.72" width="1.80" height="1.3" fill="#75715e" opacity="0.38"/><rect x="987.40" y="261.72" width="2.70" height="1.3" fill="#75715e" opacity="0.38"/><rect x="991.00" y="261.72" width="9.00" height="1.3" fill="#75715e" opacity="0.38"/><rect x="1000.90" y="261.72" width="1.80" height="1.3" fill="#75715e" opacity="0.38"/><rect x="1003.60" y="261.72" width="2.70" height="1.3" fill="#75715e" opacity="0.38"/><rect x="1007.20" y="261.72" width="9.00" height="1.3" fill="#75715e" opacity="0.38"/><rect x="1017.10" y="261.72" width="5.40" height="1.3" fill="#75715e" opacity="0.38"/><rect x="1023.40" y="261.72" width="1.80" height="1.3" fill="#75715e" opacity="0.38"/><rect x="1026.10" y="261.72" width="22.50" height="1.3" fill="#75715e" opacity="0.38"/><rect x="984.70" y="263.70" width="3.60" height="1.3" fill="#2cc6e4" opacity="0.62"/><rect x="989.20" y="263.70" width="5.40" height="1.3" fill="#a6e22e" opacity="0.62"/><rect x="995.50" y="263.70" width="8.10" height="1.3" fill="#2cc6e4" opacity="0.62"/><rect x="1004.50" y="263.70" width="0.90" height="1.3" fill="#f8f8f2" opacity="0.5"/><rect x="988.30" y="265.67" width="3.60" height="1.3" fill="#a6e22e" opacity="0.62"/><rect x="991.90" y="265.67" width="0.90" height="1.3" fill="#f8f8f2" opacity="0.5"/><rect x="992.80" y="265.67" width="5.40" height="1.3" fill="#fd971f" opacity="0.62"/><rect x="999.10" y="265.67" width="4.50" height="1.3" fill="#2cc6e4" opacity="0.62"/><rect x="1003.60" y="265.67" width="0.90" height="1.3" fill="#f8f8f2" opacity="0.5"/><rect x="1005.40" y="265.67" width="5.40" height="1.3" fill="#fd971f" opacity="0.62"/><rect x="1011.70" y="265.67" width="2.70" height="1.3" fill="#2cc6e4" opacity="0.62"/><rect x="1014.40" y="265.67" width="0.90" height="1.3" fill="#f8f8f2" opacity="0.5"/><rect x="1016.20" y="265.67" width="0.90" height="1.3" fill="#f8f8f2" opacity="0.5"/><rect x="1017.10" y="265.67" width="4.50" height="1.3" fill="#2cc6e4" opacity="0.62"/><rect x="1021.60" y="265.67" width="0.90" height="1.3" fill="#f8f8f2" opacity="0.5"/><rect x="1023.40" y="265.67" width="4.50" height="1.3" fill="#2cc6e4" opacity="0.62"/><rect x="1027.90" y="265.67" width="0.90" height="1.3" fill="#f8f8f2" opacity="0.5"/><rect x="984.70" y="267.64" width="0.90" height="1.3" fill="#f8f8f2" opacity="0.5"/><rect x="984.70" y="271.59" width="1.80" height="1.3" fill="#75715e" opacity="0.38"/><rect x="987.40" y="271.59" width="9.00" height="1.3" fill="#75715e" opacity="0.38"/><rect x="997.30" y="271.59" width="1.80" height="1.3" fill="#75715e" opacity="0.38"/><rect x="1000.00" y="271.59" width="2.70" height="1.3" fill="#75715e" opacity="0.38"/><rect x="1003.60" y="271.59" width="8.10" height="1.3" fill="#75715e" opacity="0.38"/><rect x="1012.60" y="271.59" width="3.60" height="1.3" fill="#75715e" opacity="0.38"/><rect x="1017.10" y="271.59" width="5.40" height="1.3" fill="#75715e" opacity="0.38"/><rect x="1023.40" y="271.59" width="2.70" height="1.3" fill="#75715e" opacity="0.38"/><rect x="1027.00" y="271.59" width="4.50" height="1.3" fill="#75715e" opacity="0.38"/><rect x="1032.40" y="271.59" width="3.60" height="1.3" fill="#75715e" opacity="0.38"/><rect x="1036.90" y="271.59" width="2.70" height="1.3" fill="#75715e" opacity="0.38"/><rect x="1040.50" y="271.59" width="4.50" height="1.3" fill="#75715e" opacity="0.38"/><rect x="1045.90" y="271.59" width="7.20" height="1.3" fill="#75715e" opacity="0.38"/><rect x="984.70" y="273.56" width="3.60" height="1.3" fill="#2cc6e4" opacity="0.62"/><rect x="989.20" y="273.56" width="9.00" height="1.3" fill="#a6e22e" opacity="0.62"/><rect x="999.10" y="273.56" width="8.10" height="1.3" fill="#2cc6e4" opacity="0.62"/><rect x="1008.10" y="273.56" width="0.90" height="1.3" fill="#f8f8f2" opacity="0.5"/><rect x="988.30" y="275.53" width="5.40" height="1.3" fill="#a6e22e" opacity="0.62"/><rect x="988.30" y="277.51" width="5.40" height="1.3" fill="#a6e22e" opacity="0.62"/><rect x="984.70" y="279.48" width="0.90" height="1.3" fill="#f8f8f2" opacity="0.5"/><rect x="984.70" y="283.43" width="1.80" height="1.3" fill="#75715e" opacity="0.38"/><rect x="987.40" y="283.43" width="9.00" height="1.3" fill="#75715e" opacity="0.38"/><rect x="997.30" y="283.43" width="1.80" height="1.3" fill="#75715e" opacity="0.38"/><rect x="1000.00" y="283.43" width="2.70" height="1.3" fill="#75715e" opacity="0.38"/><rect x="1003.60" y="283.43" width="8.10" height="1.3" fill="#75715e" opacity="0.38"/><rect x="1012.60" y="283.43" width="3.60" height="1.3" fill="#75715e" opacity="0.38"/><rect x="1017.10" y="283.43" width="5.40" height="1.3" fill="#75715e" opacity="0.38"/><rect x="1023.40" y="283.43" width="2.70" height="1.3" fill="#75715e" opacity="0.38"/><rect x="1027.00" y="283.43" width="4.50" height="1.3" fill="#75715e" opacity="0.38"/><rect x="1032.40" y="283.43" width="3.60" height="1.3" fill="#75715e" opacity="0.38"/><rect x="1036.90" y="283.43" width="2.70" height="1.3" fill="#75715e" opacity="0.38"/><rect x="1040.50" y="283.43" width="4.50" height="1.3" fill="#75715e" opacity="0.38"/><rect x="1045.90" y="283.43" width="7.20" height="1.3" fill="#75715e" opacity="0.38"/><rect x="984.70" y="285.40" width="3.60" height="1.3" fill="#2cc6e4" opacity="0.62"/><rect x="989.20" y="285.40" width="9.00" height="1.3" fill="#a6e22e" opacity="0.62"/><rect x="999.10" y="285.40" width="8.10" height="1.3" fill="#2cc6e4" opacity="0.62"/><rect x="1008.10" y="285.40" width="0.90" height="1.3" fill="#f8f8f2" opacity="0.5"/><rect x="988.30" y="287.37" width="5.40" height="1.3" fill="#a6e22e" opacity="0.62"/><rect x="988.30" y="289.35" width="5.40" height="1.3" fill="#a6e22e" opacity="0.62"/><rect x="984.70" y="291.32" width="0.90" height="1.3" fill="#f8f8f2" opacity="0.5"/><rect x="984.70" y="295.26" width="1.80" height="1.3" fill="#75715e" opacity="0.38"/><rect x="987.40" y="295.26" width="9.90" height="1.3" fill="#75715e" opacity="0.38"/><rect x="998.20" y="295.26" width="1.80" height="1.3" fill="#75715e" opacity="0.38"/><rect x="1000.90" y="295.26" width="2.70" height="1.3" fill="#75715e" opacity="0.38"/><rect x="1004.50" y="295.26" width="8.10" height="1.3" fill="#75715e" opacity="0.38"/><rect x="1013.50" y="295.26" width="3.60" height="1.3" fill="#75715e" opacity="0.38"/><rect x="1018.00" y="295.26" width="5.40" height="1.3" fill="#75715e" opacity="0.38"/><rect x="1024.30" y="295.26" width="2.70" height="1.3" fill="#75715e" opacity="0.38"/><rect x="1027.90" y="295.26" width="4.50" height="1.3" fill="#75715e" opacity="0.38"/><rect x="1033.30" y="295.26" width="4.50" height="1.3" fill="#75715e" opacity="0.38"/><rect x="1038.70" y="295.26" width="2.70" height="1.3" fill="#75715e" opacity="0.38"/><rect x="1042.30" y="295.26" width="4.50" height="1.3" fill="#75715e" opacity="0.38"/><rect x="1047.70" y="295.26" width="7.20" height="1.3" fill="#75715e" opacity="0.38"/><rect x="984.70" y="297.24" width="3.60" height="1.3" fill="#2cc6e4" opacity="0.62"/><rect x="989.20" y="297.24" width="9.90" height="1.3" fill="#a6e22e" opacity="0.62"/><rect x="1000.00" y="297.24" width="8.10" height="1.3" fill="#2cc6e4" opacity="0.62"/><rect x="1009.00" y="297.24" width="0.90" height="1.3" fill="#f8f8f2" opacity="0.5"/><rect x="988.30" y="299.21" width="5.40" height="1.3" fill="#a6e22e" opacity="0.62"/><rect x="988.30" y="301.18" width="5.40" height="1.3" fill="#a6e22e" opacity="0.62"/><rect x="984.70" y="303.16" width="0.90" height="1.3" fill="#f8f8f2" opacity="0.5"/><rect x="984.70" y="307.10" width="1.80" height="1.3" fill="#75715e" opacity="0.38"/><rect x="987.40" y="307.10" width="13.50" height="1.3" fill="#75715e" opacity="0.38"/><rect x="1001.80" y="307.10" width="1.80" height="1.3" fill="#75715e" opacity="0.38"/><rect x="1004.50" y="307.10" width="2.70" height="1.3" fill="#75715e" opacity="0.38"/><rect x="1008.10" y="307.10" width="8.10" height="1.3" fill="#75715e" opacity="0.38"/><rect x="1017.10" y="307.10" width="3.60" height="1.3" fill="#75715e" opacity="0.38"/><rect x="1021.60" y="307.10" width="5.40" height="1.3" fill="#75715e" opacity="0.38"/><rect x="1027.90" y="307.10" width="2.70" height="1.3" fill="#75715e" opacity="0.38"/><rect x="1031.50" y="307.10" width="4.50" height="1.3" fill="#75715e" opacity="0.38"/><rect x="1036.90" y="307.10" width="4.50" height="1.3" fill="#75715e" opacity="0.38"/><rect x="1042.30" y="307.10" width="4.50" height="1.3" fill="#75715e" opacity="0.38"/><rect x="1047.70" y="307.10" width="2.70" height="1.3" fill="#75715e" opacity="0.38"/><rect x="1051.30" y="307.10" width="4.50" height="1.3" fill="#75715e" opacity="0.38"/><rect x="1056.70" y="307.10" width="7.20" height="1.3" fill="#75715e" opacity="0.38"/><rect x="984.70" y="309.08" width="3.60" height="1.3" fill="#2cc6e4" opacity="0.62"/><rect x="989.20" y="309.08" width="13.50" height="1.3" fill="#a6e22e" opacity="0.62"/><rect x="1003.60" y="309.08" width="8.10" height="1.3" fill="#2cc6e4" opacity="0.62"/><rect x="1012.60" y="309.08" width="0.90" height="1.3" fill="#f8f8f2" opacity="0.5"/><rect x="988.30" y="311.05" width="5.40" height="1.3" fill="#a6e22e" opacity="0.62"/><rect x="988.30" y="313.02" width="5.40" height="1.3" fill="#a6e22e" opacity="0.62"/><rect x="988.30" y="314.99" width="5.40" height="1.3" fill="#a6e22e" opacity="0.62"/><rect x="984.70" y="316.97" width="0.90" height="1.3" fill="#f8f8f2" opacity="0.5"/><rect x="984.70" y="320.91" width="1.80" height="1.3" fill="#75715e" opacity="0.38"/><rect x="987.40" y="320.91" width="9.00" height="1.3" fill="#75715e" opacity="0.38"/><rect x="997.30" y="320.91" width="1.80" height="1.3" fill="#75715e" opacity="0.38"/><rect x="1000.00" y="320.91" width="2.70" height="1.3" fill="#75715e" opacity="0.38"/><rect x="1003.60" y="320.91" width="8.10" height="1.3" fill="#75715e" opacity="0.38"/><rect x="1012.60" y="320.91" width="3.60" height="1.3" fill="#75715e" opacity="0.38"/><rect x="1017.10" y="320.91" width="5.40" height="1.3" fill="#75715e" opacity="0.38"/><rect x="1023.40" y="320.91" width="2.70" height="1.3" fill="#75715e" opacity="0.38"/><rect x="1027.00" y="320.91" width="4.50" height="1.3" fill="#75715e" opacity="0.38"/><rect x="1032.40" y="320.91" width="3.60" height="1.3" fill="#75715e" opacity="0.38"/><rect x="1036.90" y="320.91" width="2.70" height="1.3" fill="#75715e" opacity="0.38"/><rect x="1040.50" y="320.91" width="3.60" height="1.3" fill="#75715e" opacity="0.38"/><rect x="1045.00" y="320.91" width="7.20" height="1.3" fill="#75715e" opacity="0.38"/><rect x="984.70" y="322.89" width="3.60" height="1.3" fill="#2cc6e4" opacity="0.62"/><rect x="989.20" y="322.89" width="9.00" height="1.3" fill="#a6e22e" opacity="0.62"/><rect x="999.10" y="322.89" width="8.10" height="1.3" fill="#2cc6e4" opacity="0.62"/><rect x="1008.10" y="322.89" width="0.90" height="1.3" fill="#f8f8f2" opacity="0.5"/><rect x="988.30" y="324.86" width="5.40" height="1.3" fill="#a6e22e" opacity="0.62"/><rect x="988.30" y="326.83" width="5.40" height="1.3" fill="#a6e22e" opacity="0.62"/><rect x="984.70" y="328.81" width="0.90" height="1.3" fill="#f8f8f2" opacity="0.5"/><rect x="984.70" y="332.75" width="1.80" height="1.3" fill="#75715e" opacity="0.38"/><rect x="987.40" y="332.75" width="9.90" height="1.3" fill="#75715e" opacity="0.38"/><rect x="998.20" y="332.75" width="1.80" height="1.3" fill="#75715e" opacity="0.38"/><rect x="1000.90" y="332.75" width="2.70" height="1.3" fill="#75715e" opacity="0.38"/><rect x="1004.50" y="332.75" width="8.10" height="1.3" fill="#75715e" opacity="0.38"/><rect x="1013.50" y="332.75" width="3.60" height="1.3" fill="#75715e" opacity="0.38"/><rect x="1018.00" y="332.75" width="5.40" height="1.3" fill="#75715e" opacity="0.38"/><rect x="1024.30" y="332.75" width="2.70" height="1.3" fill="#75715e" opacity="0.38"/><rect x="1027.90" y="332.75" width="4.50" height="1.3" fill="#75715e" opacity="0.38"/><rect x="1033.30" y="332.75" width="4.50" height="1.3" fill="#75715e" opacity="0.38"/><rect x="1038.70" y="332.75" width="2.70" height="1.3" fill="#75715e" opacity="0.38"/><rect x="1042.30" y="332.75" width="3.60" height="1.3" fill="#75715e" opacity="0.38"/><rect x="1046.80" y="332.75" width="7.20" height="1.3" fill="#75715e" opacity="0.38"/><rect x="984.70" y="334.72" width="3.60" height="1.3" fill="#2cc6e4" opacity="0.62"/><rect x="989.20" y="334.72" width="9.90" height="1.3" fill="#a6e22e" opacity="0.62"/><rect x="1000.00" y="334.72" width="8.10" height="1.3" fill="#2cc6e4" opacity="0.62"/><rect x="1009.00" y="334.72" width="0.90" height="1.3" fill="#f8f8f2" opacity="0.5"/><rect x="988.30" y="336.70" width="5.40" height="1.3" fill="#a6e22e" opacity="0.62"/><rect x="988.30" y="338.67" width="5.40" height="1.3" fill="#a6e22e" opacity="0.62"/><rect x="984.70" y="340.64" width="0.90" height="1.3" fill="#f8f8f2" opacity="0.5"/><rect x="984.70" y="344.59" width="1.80" height="1.3" fill="#75715e" opacity="0.38"/><rect x="987.40" y="344.59" width="13.50" height="1.3" fill="#75715e" opacity="0.38"/><rect x="1001.80" y="344.59" width="1.80" height="1.3" fill="#75715e" opacity="0.38"/><rect x="1004.50" y="344.59" width="2.70" height="1.3" fill="#75715e" opacity="0.38"/><rect x="1008.10" y="344.59" width="8.10" height="1.3" fill="#75715e" opacity="0.38"/><rect x="1017.10" y="344.59" width="3.60" height="1.3" fill="#75715e" opacity="0.38"/><rect x="1021.60" y="344.59" width="5.40" height="1.3" fill="#75715e" opacity="0.38"/><rect x="1027.90" y="344.59" width="2.70" height="1.3" fill="#75715e" opacity="0.38"/><rect x="1031.50" y="344.59" width="4.50" height="1.3" fill="#75715e" opacity="0.38"/><rect x="1036.90" y="344.59" width="4.50" height="1.3" fill="#75715e" opacity="0.38"/><rect x="1042.30" y="344.59" width="4.50" height="1.3" fill="#75715e" opacity="0.38"/><rect x="1047.70" y="344.59" width="2.70" height="1.3" fill="#75715e" opacity="0.38"/><rect x="1051.30" y="344.59" width="3.60" height="1.3" fill="#75715e" opacity="0.38"/><rect x="1055.80" y="344.59" width="7.20" height="1.3" fill="#75715e" opacity="0.38"/><rect x="984.70" y="346.56" width="3.60" height="1.3" fill="#2cc6e4" opacity="0.62"/><rect x="989.20" y="346.56" width="13.50" height="1.3" fill="#a6e22e" opacity="0.62"/><rect x="1003.60" y="346.56" width="8.10" height="1.3" fill="#2cc6e4" opacity="0.62"/><rect x="1012.60" y="346.56" width="0.90" height="1.3" fill="#f8f8f2" opacity="0.5"/><rect x="988.30" y="348.54" width="5.40" height="1.3" fill="#a6e22e" opacity="0.62"/><rect x="988.30" y="350.51" width="5.40" height="1.3" fill="#a6e22e" opacity="0.62"/><rect x="988.30" y="352.48" width="5.40" height="1.3" fill="#a6e22e" opacity="0.62"/><rect x="984.70" y="354.45" width="0.90" height="1.3" fill="#f8f8f2" opacity="0.5"/><rect x="984.70" y="358.40" width="1.80" height="1.3" fill="#75715e" opacity="0.38"/><rect x="987.40" y="358.40" width="9.00" height="1.3" fill="#75715e" opacity="0.38"/><rect x="997.30" y="358.40" width="1.80" height="1.3" fill="#75715e" opacity="0.38"/><rect x="1000.00" y="358.40" width="2.70" height="1.3" fill="#75715e" opacity="0.38"/><rect x="1003.60" y="358.40" width="8.10" height="1.3" fill="#75715e" opacity="0.38"/><rect x="1012.60" y="358.40" width="3.60" height="1.3" fill="#75715e" opacity="0.38"/><rect x="1017.10" y="358.40" width="4.50" height="1.3" fill="#75715e" opacity="0.38"/><rect x="1022.50" y="358.40" width="2.70" height="1.3" fill="#75715e" opacity="0.38"/><rect x="1026.10" y="358.40" width="7.20" height="1.3" fill="#75715e" opacity="0.38"/><rect x="1034.20" y="358.40" width="6.30" height="1.3" fill="#75715e" opacity="0.38"/><rect x="984.70" y="360.37" width="1.80" height="1.3" fill="#75715e" opacity="0.38"/><rect x="984.70" y="362.35" width="1.80" height="1.3" fill="#75715e" opacity="0.38"/><rect x="987.40" y="362.35" width="7.20" height="1.3" fill="#75715e" opacity="0.38"/><rect x="995.50" y="362.35" width="4.50" height="1.3" fill="#75715e" opacity="0.38"/><rect x="1000.90" y="362.35" width="3.60" height="1.3" fill="#75715e" opacity="0.38"/><rect x="1005.40" y="362.35" width="3.60" height="1.3" fill="#75715e" opacity="0.38"/><rect x="1009.90" y="362.35" width="0.90" height="1.3" fill="#75715e" opacity="0.38"/><rect x="1011.70" y="362.35" width="4.50" height="1.3" fill="#75715e" opacity="0.38"/><rect x="1017.10" y="362.35" width="2.70" height="1.3" fill="#75715e" opacity="0.38"/><rect x="1020.70" y="362.35" width="1.80" height="1.3" fill="#75715e" opacity="0.38"/><rect x="1023.40" y="362.35" width="5.40" height="1.3" fill="#75715e" opacity="0.38"/><rect x="984.70" y="364.32" width="1.80" height="1.3" fill="#75715e" opacity="0.38"/><rect x="987.40" y="364.32" width="2.70" height="1.3" fill="#75715e" opacity="0.38"/><rect x="991.00" y="364.32" width="5.40" height="1.3" fill="#75715e" opacity="0.38"/><rect x="997.30" y="364.32" width="4.50" height="1.3" fill="#75715e" opacity="0.38"/><rect x="1002.70" y="364.32" width="0.90" height="1.3" fill="#75715e" opacity="0.38"/><rect x="1004.50" y="364.32" width="1.80" height="1.3" fill="#75715e" opacity="0.38"/><rect x="1007.20" y="364.32" width="2.70" height="1.3" fill="#75715e" opacity="0.38"/><rect x="1010.80" y="364.32" width="5.40" height="1.3" fill="#75715e" opacity="0.38"/><rect x="1017.10" y="364.32" width="1.80" height="1.3" fill="#75715e" opacity="0.38"/><rect x="1019.80" y="364.32" width="4.50" height="1.3" fill="#75715e" opacity="0.38"/><rect x="1025.20" y="364.32" width="4.50" height="1.3" fill="#75715e" opacity="0.38"/><rect x="984.70" y="366.29" width="1.80" height="1.3" fill="#75715e" opacity="0.38"/><rect x="987.40" y="366.29" width="2.70" height="1.3" fill="#75715e" opacity="0.38"/><rect x="991.00" y="366.29" width="4.50" height="1.3" fill="#75715e" opacity="0.38"/><rect x="996.40" y="366.29" width="5.40" height="1.3" fill="#75715e" opacity="0.38"/><rect x="1002.70" y="366.29" width="5.40" height="1.3" fill="#75715e" opacity="0.38"/><rect x="1009.00" y="366.29" width="9.90" height="1.3" fill="#75715e" opacity="0.38"/><rect x="1019.80" y="366.29" width="5.40" height="1.3" fill="#75715e" opacity="0.38"/><rect x="1026.10" y="366.29" width="2.70" height="1.3" fill="#75715e" opacity="0.38"/><rect x="1029.70" y="366.29" width="3.60" height="1.3" fill="#75715e" opacity="0.38"/><rect x="1034.20" y="366.29" width="1.80" height="1.3" fill="#75715e" opacity="0.38"/><rect x="1036.90" y="366.29" width="3.60" height="1.3" fill="#75715e" opacity="0.38"/><rect x="1041.40" y="366.29" width="8.10" height="1.3" fill="#75715e" opacity="0.38"/><rect x="984.70" y="368.27" width="1.80" height="1.3" fill="#75715e" opacity="0.38"/><rect x="984.70" y="370.24" width="1.80" height="1.3" fill="#75715e" opacity="0.38"/><rect x="987.40" y="370.24" width="2.70" height="1.3" fill="#75715e" opacity="0.38"/><rect x="991.00" y="370.24" width="3.60" height="1.3" fill="#75715e" opacity="0.38"/><rect x="995.50" y="370.24" width="7.20" height="1.3" fill="#75715e" opacity="0.38"/><rect x="1003.60" y="370.24" width="3.60" height="1.3" fill="#75715e" opacity="0.38"/><rect x="1008.10" y="370.24" width="9.00" height="1.3" fill="#75715e" opacity="0.38"/><rect x="1018.00" y="370.24" width="1.80" height="1.3" fill="#75715e" opacity="0.38"/><rect x="1020.70" y="370.24" width="9.00" height="1.3" fill="#75715e" opacity="0.38"/><rect x="984.70" y="372.21" width="3.60" height="1.3" fill="#2cc6e4" opacity="0.62"/><rect x="989.20" y="372.21" width="9.00" height="1.3" fill="#a6e22e" opacity="0.62"/><rect x="999.10" y="372.21" width="8.10" height="1.3" fill="#2cc6e4" opacity="0.62"/><rect x="1008.10" y="372.21" width="0.90" height="1.3" fill="#f8f8f2" opacity="0.5"/><rect x="988.30" y="374.18" width="7.20" height="1.3" fill="#a6e22e" opacity="0.62"/><rect x="995.50" y="374.18" width="0.90" height="1.3" fill="#f8f8f2" opacity="0.5"/><rect x="996.40" y="374.18" width="0.90" height="1.3" fill="#fd971f" opacity="0.62"/><rect x="998.20" y="374.18" width="5.40" height="1.3" fill="#f8f8f2" opacity="0.5"/><rect x="1003.60" y="374.18" width="0.90" height="1.3" fill="#f8f8f2" opacity="0.5"/><rect x="1005.40" y="374.18" width="0.90" height="1.3" fill="#f8f8f2" opacity="0.5"/><rect x="1006.30" y="374.18" width="0.90" height="1.3" fill="#fd971f" opacity="0.62"/><rect x="1008.10" y="374.18" width="4.50" height="1.3" fill="#2cc6e4" opacity="0.62"/><rect x="1012.60" y="374.18" width="0.90" height="1.3" fill="#f8f8f2" opacity="0.5"/><rect x="1014.40" y="374.18" width="2.70" height="1.3" fill="#fd971f" opacity="0.62"/><rect x="1018.00" y="374.18" width="4.50" height="1.3" fill="#2cc6e4" opacity="0.62"/><rect x="1022.50" y="374.18" width="0.90" height="1.3" fill="#f8f8f2" opacity="0.5"/><rect x="984.70" y="376.16" width="0.90" height="1.3" fill="#f8f8f2" opacity="0.5"/><rect x="984.70" y="380.10" width="1.80" height="1.3" fill="#75715e" opacity="0.38"/><rect x="987.40" y="380.10" width="7.20" height="1.3" fill="#75715e" opacity="0.38"/><rect x="995.50" y="380.10" width="1.80" height="1.3" fill="#75715e" opacity="0.38"/><rect x="998.20" y="380.10" width="2.70" height="1.3" fill="#75715e" opacity="0.38"/><rect x="1001.80" y="380.10" width="8.10" height="1.3" fill="#75715e" opacity="0.38"/><rect x="1010.80" y="380.10" width="3.60" height="1.3" fill="#75715e" opacity="0.38"/><rect x="1015.30" y="380.10" width="4.50" height="1.3" fill="#75715e" opacity="0.38"/><rect x="1020.70" y="380.10" width="2.70" height="1.3" fill="#75715e" opacity="0.38"/><rect x="1024.30" y="380.10" width="6.30" height="1.3" fill="#75715e" opacity="0.38"/><rect x="1031.50" y="380.10" width="6.30" height="1.3" fill="#75715e" opacity="0.38"/><rect x="984.70" y="382.08" width="1.80" height="1.3" fill="#75715e" opacity="0.38"/><rect x="984.70" y="384.05" width="1.80" height="1.3" fill="#75715e" opacity="0.38"/><rect x="987.40" y="384.05" width="6.30" height="1.3" fill="#75715e" opacity="0.38"/><rect x="994.60" y="384.05" width="5.40" height="1.3" fill="#75715e" opacity="0.38"/><rect x="1000.90" y="384.05" width="3.60" height="1.3" fill="#75715e" opacity="0.38"/><rect x="1005.40" y="384.05" width="1.80" height="1.3" fill="#75715e" opacity="0.38"/><rect x="1008.10" y="384.05" width="0.90" height="1.3" fill="#75715e" opacity="0.38"/><rect x="1009.90" y="384.05" width="4.50" height="1.3" fill="#75715e" opacity="0.38"/><rect x="1015.30" y="384.05" width="6.30" height="1.3" fill="#75715e" opacity="0.38"/><rect x="1022.50" y="384.05" width="1.80" height="1.3" fill="#75715e" opacity="0.38"/><rect x="1025.20" y="384.05" width="3.60" height="1.3" fill="#75715e" opacity="0.38"/><rect x="1029.70" y="384.05" width="3.60" height="1.3" fill="#75715e" opacity="0.38"/><rect x="1034.20" y="384.05" width="1.80" height="1.3" fill="#75715e" opacity="0.38"/><rect x="1036.90" y="384.05" width="4.50" height="1.3" fill="#75715e" opacity="0.38"/><rect x="1042.30" y="384.05" width="1.80" height="1.3" fill="#75715e" opacity="0.38"/><rect x="984.70" y="386.02" width="1.80" height="1.3" fill="#75715e" opacity="0.38"/><rect x="987.40" y="386.02" width="3.60" height="1.3" fill="#75715e" opacity="0.38"/><rect x="991.90" y="386.02" width="1.80" height="1.3" fill="#75715e" opacity="0.38"/><rect x="994.60" y="386.02" width="4.50" height="1.3" fill="#75715e" opacity="0.38"/><rect x="1000.00" y="386.02" width="6.30" height="1.3" fill="#75715e" opacity="0.38"/><rect x="1007.20" y="386.02" width="2.70" height="1.3" fill="#75715e" opacity="0.38"/><rect x="1010.80" y="386.02" width="5.40" height="1.3" fill="#75715e" opacity="0.38"/><rect x="1017.10" y="386.02" width="4.50" height="1.3" fill="#75715e" opacity="0.38"/><rect x="1022.50" y="386.02" width="0.90" height="1.3" fill="#75715e" opacity="0.38"/><rect x="1024.30" y="386.02" width="1.80" height="1.3" fill="#75715e" opacity="0.38"/><rect x="1027.00" y="386.02" width="2.70" height="1.3" fill="#75715e" opacity="0.38"/><rect x="1030.60" y="386.02" width="5.40" height="1.3" fill="#75715e" opacity="0.38"/><rect x="1036.90" y="386.02" width="1.80" height="1.3" fill="#75715e" opacity="0.38"/><rect x="1039.60" y="386.02" width="4.50" height="1.3" fill="#75715e" opacity="0.38"/><rect x="984.70" y="388.00" width="1.80" height="1.3" fill="#75715e" opacity="0.38"/><rect x="987.40" y="388.00" width="7.20" height="1.3" fill="#75715e" opacity="0.38"/><rect x="995.50" y="388.00" width="2.70" height="1.3" fill="#75715e" opacity="0.38"/><rect x="999.10" y="388.00" width="4.50" height="1.3" fill="#75715e" opacity="0.38"/><rect x="1004.50" y="388.00" width="9.90" height="1.3" fill="#75715e" opacity="0.38"/><rect x="1015.30" y="388.00" width="5.40" height="1.3" fill="#75715e" opacity="0.38"/><rect x="1021.60" y="388.00" width="2.70" height="1.3" fill="#75715e" opacity="0.38"/><rect x="1025.20" y="388.00" width="4.50" height="1.3" fill="#75715e" opacity="0.38"/><rect x="1030.60" y="388.00" width="1.80" height="1.3" fill="#75715e" opacity="0.38"/><rect x="1033.30" y="388.00" width="3.60" height="1.3" fill="#75715e" opacity="0.38"/><rect x="1037.80" y="388.00" width="8.10" height="1.3" fill="#75715e" opacity="0.38"/><rect x="984.70" y="389.97" width="1.80" height="1.3" fill="#75715e" opacity="0.38"/><rect x="984.70" y="391.94" width="1.80" height="1.3" fill="#75715e" opacity="0.38"/><rect x="987.40" y="391.94" width="2.70" height="1.3" fill="#75715e" opacity="0.38"/><rect x="991.00" y="391.94" width="3.60" height="1.3" fill="#75715e" opacity="0.38"/><rect x="995.50" y="391.94" width="7.20" height="1.3" fill="#75715e" opacity="0.38"/><rect x="1003.60" y="391.94" width="3.60" height="1.3" fill="#75715e" opacity="0.38"/><rect x="1008.10" y="391.94" width="7.20" height="1.3" fill="#75715e" opacity="0.38"/><rect x="1016.20" y="391.94" width="1.80" height="1.3" fill="#75715e" opacity="0.38"/><rect x="1018.90" y="391.94" width="9.00" height="1.3" fill="#75715e" opacity="0.38"/><rect x="984.70" y="393.91" width="3.60" height="1.3" fill="#2cc6e4" opacity="0.62"/><rect x="989.20" y="393.91" width="7.20" height="1.3" fill="#a6e22e" opacity="0.62"/><rect x="997.30" y="393.91" width="8.10" height="1.3" fill="#2cc6e4" opacity="0.62"/><rect x="1006.30" y="393.91" width="0.90" height="1.3" fill="#f8f8f2" opacity="0.5"/><rect x="988.30" y="395.89" width="6.30" height="1.3" fill="#a6e22e" opacity="0.62"/><rect x="994.60" y="395.89" width="0.90" height="1.3" fill="#f8f8f2" opacity="0.5"/><rect x="995.50" y="395.89" width="0.90" height="1.3" fill="#fd971f" opacity="0.62"/><rect x="997.30" y="395.89" width="5.40" height="1.3" fill="#f8f8f2" opacity="0.5"/><rect x="1002.70" y="395.89" width="0.90" height="1.3" fill="#f8f8f2" opacity="0.5"/><rect x="1004.50" y="395.89" width="0.90" height="1.3" fill="#f8f8f2" opacity="0.5"/><rect x="1005.40" y="395.89" width="0.90" height="1.3" fill="#fd971f" opacity="0.62"/><rect x="1007.20" y="395.89" width="4.50" height="1.3" fill="#2cc6e4" opacity="0.62"/><rect x="1011.70" y="395.89" width="0.90" height="1.3" fill="#f8f8f2" opacity="0.5"/><rect x="1013.50" y="395.89" width="2.70" height="1.3" fill="#fd971f" opacity="0.62"/><rect x="1017.10" y="395.89" width="4.50" height="1.3" fill="#2cc6e4" opacity="0.62"/><rect x="1021.60" y="395.89" width="0.90" height="1.3" fill="#f8f8f2" opacity="0.5"/><rect x="984.70" y="397.86" width="0.90" height="1.3" fill="#f8f8f2" opacity="0.5"/><rect x="984.70" y="401.81" width="1.80" height="1.3" fill="#75715e" opacity="0.38"/><rect x="987.40" y="401.81" width="7.20" height="1.3" fill="#75715e" opacity="0.38"/><rect x="995.50" y="401.81" width="1.80" height="1.3" fill="#75715e" opacity="0.38"/><rect x="998.20" y="401.81" width="2.70" height="1.3" fill="#75715e" opacity="0.38"/><rect x="1001.80" y="401.81" width="8.10" height="1.3" fill="#75715e" opacity="0.38"/><rect x="1010.80" y="401.81" width="3.60" height="1.3" fill="#75715e" opacity="0.38"/><rect x="1015.30" y="401.81" width="4.50" height="1.3" fill="#75715e" opacity="0.38"/><rect x="1020.70" y="401.81" width="2.70" height="1.3" fill="#75715e" opacity="0.38"/><rect x="1024.30" y="401.81" width="4.50" height="1.3" fill="#75715e" opacity="0.38"/><rect x="1029.70" y="401.81" width="5.40" height="1.3" fill="#75715e" opacity="0.38"/><rect x="1036.00" y="401.81" width="6.30" height="1.3" fill="#75715e" opacity="0.38"/><rect x="984.70" y="403.78" width="1.80" height="1.3" fill="#75715e" opacity="0.38"/><rect x="984.70" y="405.75" width="1.80" height="1.3" fill="#75715e" opacity="0.38"/><rect x="987.40" y="405.75" width="5.40" height="1.3" fill="#75715e" opacity="0.38"/><rect x="993.70" y="405.75" width="4.50" height="1.3" fill="#75715e" opacity="0.38"/><rect x="999.10" y="405.75" width="5.40" height="1.3" fill="#75715e" opacity="0.38"/><rect x="1005.40" y="405.75" width="4.50" height="1.3" fill="#75715e" opacity="0.38"/><rect x="1010.80" y="405.75" width="3.60" height="1.3" fill="#75715e" opacity="0.38"/><rect x="1015.30" y="405.75" width="0.90" height="1.3" fill="#75715e" opacity="0.38"/><rect x="1017.10" y="405.75" width="7.20" height="1.3" fill="#75715e" opacity="0.38"/><rect x="1025.20" y="405.75" width="1.80" height="1.3" fill="#75715e" opacity="0.38"/><rect x="1027.90" y="405.75" width="5.40" height="1.3" fill="#75715e" opacity="0.38"/><rect x="1034.20" y="405.75" width="2.70" height="1.3" fill="#75715e" opacity="0.38"/><rect x="1037.80" y="405.75" width="1.80" height="1.3" fill="#75715e" opacity="0.38"/><rect x="1040.50" y="405.75" width="2.70" height="1.3" fill="#75715e" opacity="0.38"/><rect x="984.70" y="407.73" width="1.80" height="1.3" fill="#75715e" opacity="0.38"/><rect x="987.40" y="407.73" width="9.00" height="1.3" fill="#75715e" opacity="0.38"/><rect x="997.30" y="407.73" width="4.50" height="1.3" fill="#75715e" opacity="0.38"/><rect x="1002.70" y="407.73" width="6.30" height="1.3" fill="#75715e" opacity="0.38"/><rect x="1009.90" y="407.73" width="1.80" height="1.3" fill="#75715e" opacity="0.38"/><rect x="1012.60" y="407.73" width="6.30" height="1.3" fill="#75715e" opacity="0.38"/><rect x="1019.80" y="407.73" width="2.70" height="1.3" fill="#75715e" opacity="0.38"/><rect x="1023.40" y="407.73" width="5.40" height="1.3" fill="#75715e" opacity="0.38"/><rect x="1029.70" y="407.73" width="1.80" height="1.3" fill="#75715e" opacity="0.38"/><rect x="1032.40" y="407.73" width="4.50" height="1.3" fill="#75715e" opacity="0.38"/><rect x="984.70" y="409.70" width="1.80" height="1.3" fill="#75715e" opacity="0.38"/><rect x="987.40" y="409.70" width="3.60" height="1.3" fill="#75715e" opacity="0.38"/><rect x="991.90" y="409.70" width="1.80" height="1.3" fill="#75715e" opacity="0.38"/><rect x="994.60" y="409.70" width="1.80" height="1.3" fill="#75715e" opacity="0.38"/><rect x="997.30" y="409.70" width="0.90" height="1.3" fill="#75715e" opacity="0.38"/><rect x="999.10" y="409.70" width="1.80" height="1.3" fill="#75715e" opacity="0.38"/><rect x="1001.80" y="409.70" width="6.30" height="1.3" fill="#75715e" opacity="0.38"/><rect x="1009.00" y="409.70" width="2.70" height="1.3" fill="#75715e" opacity="0.38"/><rect x="1012.60" y="409.70" width="2.70" height="1.3" fill="#75715e" opacity="0.38"/><rect x="1016.20" y="409.70" width="4.50" height="1.3" fill="#75715e" opacity="0.38"/><rect x="1021.60" y="409.70" width="10.80" height="1.3" fill="#75715e" opacity="0.38"/><rect x="984.70" y="411.67" width="1.80" height="1.3" fill="#75715e" opacity="0.38"/><rect x="984.70" y="413.64" width="1.80" height="1.3" fill="#75715e" opacity="0.38"/><rect x="987.40" y="413.64" width="3.60" height="1.3" fill="#75715e" opacity="0.38"/><rect x="991.90" y="413.64" width="5.40" height="1.3" fill="#75715e" opacity="0.38"/><rect x="998.20" y="413.64" width="6.30" height="1.3" fill="#75715e" opacity="0.38"/><rect x="1005.40" y="413.64" width="0.90" height="1.3" fill="#75715e" opacity="0.38"/><rect x="1007.20" y="413.64" width="0.90" height="1.3" fill="#75715e" opacity="0.38"/><rect x="1009.00" y="413.64" width="6.30" height="1.3" fill="#75715e" opacity="0.38"/><rect x="1016.20" y="413.64" width="1.80" height="1.3" fill="#75715e" opacity="0.38"/><rect x="1018.90" y="413.64" width="6.30" height="1.3" fill="#75715e" opacity="0.38"/><rect x="1026.10" y="413.64" width="0.90" height="1.3" fill="#75715e" opacity="0.38"/><rect x="1027.90" y="413.64" width="6.30" height="1.3" fill="#75715e" opacity="0.38"/><rect x="1035.10" y="413.64" width="4.50" height="1.3" fill="#75715e" opacity="0.38"/><rect x="984.70" y="415.62" width="1.80" height="1.3" fill="#75715e" opacity="0.38"/><rect x="987.40" y="415.62" width="9.00" height="1.3" fill="#75715e" opacity="0.38"/><rect x="997.30" y="415.62" width="2.70" height="1.3" fill="#75715e" opacity="0.38"/><rect x="1000.90" y="415.62" width="3.60" height="1.3" fill="#75715e" opacity="0.38"/><rect x="1005.40" y="415.62" width="4.50" height="1.3" fill="#75715e" opacity="0.38"/><rect x="1010.80" y="415.62" width="3.60" height="1.3" fill="#75715e" opacity="0.38"/><rect x="1015.30" y="415.62" width="2.70" height="1.3" fill="#75715e" opacity="0.38"/><rect x="1018.90" y="415.62" width="8.10" height="1.3" fill="#75715e" opacity="0.38"/><rect x="1027.90" y="415.62" width="1.80" height="1.3" fill="#75715e" opacity="0.38"/><rect x="1030.60" y="415.62" width="3.60" height="1.3" fill="#75715e" opacity="0.38"/><rect x="1035.10" y="415.62" width="7.20" height="1.3" fill="#75715e" opacity="0.38"/><rect x="984.70" y="417.59" width="1.80" height="1.3" fill="#75715e" opacity="0.38"/><rect x="987.40" y="417.59" width="5.40" height="1.3" fill="#75715e" opacity="0.38"/><rect x="993.70" y="417.59" width="1.80" height="1.3" fill="#75715e" opacity="0.38"/><rect x="996.40" y="417.59" width="7.20" height="1.3" fill="#75715e" opacity="0.38"/><rect x="1004.50" y="417.59" width="3.60" height="1.3" fill="#75715e" opacity="0.38"/><rect x="1009.00" y="417.59" width="4.50" height="1.3" fill="#75715e" opacity="0.38"/><rect x="984.70" y="419.56" width="1.80" height="1.3" fill="#75715e" opacity="0.38"/><rect x="984.70" y="421.54" width="1.80" height="1.3" fill="#75715e" opacity="0.38"/><rect x="987.40" y="421.54" width="3.60" height="1.3" fill="#75715e" opacity="0.38"/><rect x="991.90" y="421.54" width="1.80" height="1.3" fill="#75715e" opacity="0.38"/><rect x="994.60" y="421.54" width="5.40" height="1.3" fill="#75715e" opacity="0.38"/><rect x="1000.90" y="421.54" width="6.30" height="1.3" fill="#75715e" opacity="0.38"/><rect x="1008.10" y="421.54" width="0.90" height="1.3" fill="#75715e" opacity="0.38"/><rect x="1009.90" y="421.54" width="0.90" height="1.3" fill="#75715e" opacity="0.38"/><rect x="1011.70" y="421.54" width="6.30" height="1.3" fill="#75715e" opacity="0.38"/><rect x="1018.90" y="421.54" width="1.80" height="1.3" fill="#75715e" opacity="0.38"/><rect x="1021.60" y="421.54" width="2.70" height="1.3" fill="#75715e" opacity="0.38"/><rect x="1025.20" y="421.54" width="2.70" height="1.3" fill="#75715e" opacity="0.38"/><rect x="1028.80" y="421.54" width="2.70" height="1.3" fill="#75715e" opacity="0.38"/><rect x="1032.40" y="421.54" width="1.80" height="1.3" fill="#75715e" opacity="0.38"/><rect x="1035.10" y="421.54" width="0.90" height="1.3" fill="#75715e" opacity="0.38"/><rect x="1036.90" y="421.54" width="1.80" height="1.3" fill="#75715e" opacity="0.38"/><rect x="1039.60" y="421.54" width="6.30" height="1.3" fill="#75715e" opacity="0.38"/><rect x="984.70" y="423.51" width="1.80" height="1.3" fill="#75715e" opacity="0.38"/><rect x="987.40" y="423.51" width="4.50" height="1.3" fill="#75715e" opacity="0.38"/><rect x="992.80" y="423.51" width="5.40" height="1.3" fill="#75715e" opacity="0.38"/><rect x="999.10" y="423.51" width="2.70" height="1.3" fill="#75715e" opacity="0.38"/><rect x="1002.70" y="423.51" width="4.50" height="1.3" fill="#75715e" opacity="0.38"/><rect x="1008.10" y="423.51" width="1.80" height="1.3" fill="#75715e" opacity="0.38"/><rect x="1010.80" y="423.51" width="3.60" height="1.3" fill="#75715e" opacity="0.38"/><rect x="1015.30" y="423.51" width="3.60" height="1.3" fill="#75715e" opacity="0.38"/><rect x="1019.80" y="423.51" width="1.80" height="1.3" fill="#75715e" opacity="0.38"/><rect x="1022.50" y="423.51" width="8.10" height="1.3" fill="#75715e" opacity="0.38"/><rect x="1031.50" y="423.51" width="2.70" height="1.3" fill="#75715e" opacity="0.38"/><rect x="1035.10" y="423.51" width="2.70" height="1.3" fill="#75715e" opacity="0.38"/><rect x="1038.70" y="423.51" width="5.40" height="1.3" fill="#75715e" opacity="0.38"/><rect x="1045.00" y="423.51" width="5.40" height="1.3" fill="#75715e" opacity="0.38"/><rect x="984.70" y="425.48" width="1.80" height="1.3" fill="#75715e" opacity="0.38"/><rect x="987.40" y="425.48" width="5.40" height="1.3" fill="#75715e" opacity="0.38"/><rect x="993.70" y="425.48" width="5.40" height="1.3" fill="#75715e" opacity="0.38"/><rect x="1000.00" y="425.48" width="4.50" height="1.3" fill="#75715e" opacity="0.38"/><rect x="1005.40" y="425.48" width="5.40" height="1.3" fill="#75715e" opacity="0.38"/><rect x="1011.70" y="425.48" width="2.70" height="1.3" fill="#75715e" opacity="0.38"/><rect x="1015.30" y="425.48" width="2.70" height="1.3" fill="#75715e" opacity="0.38"/><rect x="1018.90" y="425.48" width="3.60" height="1.3" fill="#75715e" opacity="0.38"/><rect x="1023.40" y="425.48" width="1.80" height="1.3" fill="#75715e" opacity="0.38"/><rect x="1026.10" y="425.48" width="8.10" height="1.3" fill="#75715e" opacity="0.38"/><rect x="1035.10" y="425.48" width="1.80" height="1.3" fill="#75715e" opacity="0.38"/><rect x="1037.80" y="425.48" width="1.80" height="1.3" fill="#75715e" opacity="0.38"/><rect x="1040.50" y="425.48" width="4.50" height="1.3" fill="#75715e" opacity="0.38"/><rect x="1045.90" y="425.48" width="6.30" height="1.3" fill="#75715e" opacity="0.38"/><rect x="984.70" y="427.46" width="1.80" height="1.3" fill="#75715e" opacity="0.38"/><rect x="987.40" y="427.46" width="1.80" height="1.3" fill="#75715e" opacity="0.38"/><rect x="990.10" y="427.46" width="3.60" height="1.3" fill="#75715e" opacity="0.38"/><rect x="994.60" y="427.46" width="6.30" height="1.3" fill="#75715e" opacity="0.38"/><rect x="1001.80" y="427.46" width="5.40" height="1.3" fill="#75715e" opacity="0.38"/><rect x="1008.10" y="427.46" width="1.80" height="1.3" fill="#75715e" opacity="0.38"/><rect x="1010.80" y="427.46" width="8.10" height="1.3" fill="#75715e" opacity="0.38"/><rect x="1019.80" y="427.46" width="3.60" height="1.3" fill="#75715e" opacity="0.38"/><rect x="1024.30" y="427.46" width="4.50" height="1.3" fill="#75715e" opacity="0.38"/><rect x="984.70" y="429.43" width="1.80" height="1.3" fill="#75715e" opacity="0.38"/><rect x="984.70" y="431.40" width="1.80" height="1.3" fill="#75715e" opacity="0.38"/><rect x="987.40" y="431.40" width="1.80" height="1.3" fill="#75715e" opacity="0.38"/><rect x="990.10" y="431.40" width="2.70" height="1.3" fill="#75715e" opacity="0.38"/><rect x="993.70" y="431.40" width="0.90" height="1.3" fill="#75715e" opacity="0.38"/><rect x="995.50" y="431.40" width="0.90" height="1.3" fill="#75715e" opacity="0.38"/><rect x="997.30" y="431.40" width="5.40" height="1.3" fill="#75715e" opacity="0.38"/><rect x="1003.60" y="431.40" width="4.50" height="1.3" fill="#75715e" opacity="0.38"/><rect x="1009.00" y="431.40" width="7.20" height="1.3" fill="#75715e" opacity="0.38"/><rect x="1017.10" y="431.40" width="1.80" height="1.3" fill="#75715e" opacity="0.38"/><rect x="1019.80" y="431.40" width="5.40" height="1.3" fill="#75715e" opacity="0.38"/><rect x="1026.10" y="431.40" width="2.70" height="1.3" fill="#75715e" opacity="0.38"/><rect x="1029.70" y="431.40" width="1.80" height="1.3" fill="#75715e" opacity="0.38"/><rect x="1032.40" y="431.40" width="2.70" height="1.3" fill="#75715e" opacity="0.38"/><rect x="1036.00" y="431.40" width="2.70" height="1.3" fill="#75715e" opacity="0.38"/><rect x="1039.60" y="431.40" width="1.80" height="1.3" fill="#75715e" opacity="0.38"/><rect x="1042.30" y="431.40" width="2.70" height="1.3" fill="#75715e" opacity="0.38"/><rect x="984.70" y="433.37" width="1.80" height="1.3" fill="#75715e" opacity="0.38"/><rect x="987.40" y="433.37" width="4.50" height="1.3" fill="#75715e" opacity="0.38"/><rect x="992.80" y="433.37" width="6.30" height="1.3" fill="#75715e" opacity="0.38"/><rect x="1000.00" y="433.37" width="5.40" height="1.3" fill="#75715e" opacity="0.38"/><rect x="1006.30" y="433.37" width="2.70" height="1.3" fill="#75715e" opacity="0.38"/><rect x="1009.90" y="433.37" width="5.40" height="1.3" fill="#75715e" opacity="0.38"/><rect x="1016.20" y="433.37" width="5.40" height="1.3" fill="#75715e" opacity="0.38"/><rect x="1022.50" y="433.37" width="2.70" height="1.3" fill="#75715e" opacity="0.38"/><rect x="1026.10" y="433.37" width="1.80" height="1.3" fill="#75715e" opacity="0.38"/><rect x="1028.80" y="433.37" width="2.70" height="1.3" fill="#75715e" opacity="0.38"/><rect x="1032.40" y="433.37" width="1.80" height="1.3" fill="#75715e" opacity="0.38"/><rect x="1035.10" y="433.37" width="2.70" height="1.3" fill="#75715e" opacity="0.38"/><rect x="1038.70" y="433.37" width="1.80" height="1.3" fill="#75715e" opacity="0.38"/><rect x="1041.40" y="433.37" width="3.60" height="1.3" fill="#75715e" opacity="0.38"/><rect x="984.70" y="435.35" width="1.80" height="1.3" fill="#75715e" opacity="0.38"/><rect x="984.70" y="437.32" width="1.80" height="1.3" fill="#75715e" opacity="0.38"/><rect x="987.40" y="437.32" width="1.80" height="1.3" fill="#75715e" opacity="0.38"/><rect x="990.10" y="437.32" width="5.40" height="1.3" fill="#75715e" opacity="0.38"/><rect x="996.40" y="437.32" width="1.80" height="1.3" fill="#75715e" opacity="0.38"/><rect x="999.10" y="437.32" width="6.30" height="1.3" fill="#75715e" opacity="0.38"/><rect x="1006.30" y="437.32" width="3.60" height="1.3" fill="#75715e" opacity="0.38"/><rect x="1010.80" y="437.32" width="1.80" height="1.3" fill="#75715e" opacity="0.38"/><rect x="1013.50" y="437.32" width="4.50" height="1.3" fill="#75715e" opacity="0.38"/><rect x="1018.90" y="437.32" width="5.40" height="1.3" fill="#75715e" opacity="0.38"/><rect x="1025.20" y="437.32" width="3.60" height="1.3" fill="#75715e" opacity="0.38"/><rect x="1029.70" y="437.32" width="0.90" height="1.3" fill="#75715e" opacity="0.38"/><rect x="1031.50" y="437.32" width="3.60" height="1.3" fill="#75715e" opacity="0.38"/><rect x="1036.00" y="437.32" width="6.30" height="1.3" fill="#75715e" opacity="0.38"/><rect x="984.70" y="439.29" width="1.80" height="1.3" fill="#75715e" opacity="0.38"/><rect x="987.40" y="439.29" width="5.40" height="1.3" fill="#75715e" opacity="0.38"/><rect x="993.70" y="439.29" width="5.40" height="1.3" fill="#75715e" opacity="0.38"/><rect x="1000.00" y="439.29" width="2.70" height="1.3" fill="#75715e" opacity="0.38"/><rect x="1003.60" y="439.29" width="5.40" height="1.3" fill="#75715e" opacity="0.38"/><rect x="1009.90" y="439.29" width="2.70" height="1.3" fill="#75715e" opacity="0.38"/><rect x="1013.50" y="439.29" width="1.80" height="1.3" fill="#75715e" opacity="0.38"/><rect x="1016.20" y="439.29" width="7.20" height="1.3" fill="#75715e" opacity="0.38"/><rect x="1024.30" y="439.29" width="1.80" height="1.3" fill="#75715e" opacity="0.38"/><rect x="1027.00" y="439.29" width="2.70" height="1.3" fill="#75715e" opacity="0.38"/><rect x="1030.60" y="439.29" width="9.00" height="1.3" fill="#75715e" opacity="0.38"/><rect x="984.70" y="441.27" width="1.80" height="1.3" fill="#75715e" opacity="0.38"/><rect x="987.40" y="441.27" width="3.60" height="1.3" fill="#75715e" opacity="0.38"/><rect x="991.90" y="441.27" width="6.30" height="1.3" fill="#75715e" opacity="0.38"/><rect x="984.70" y="443.24" width="1.80" height="1.3" fill="#75715e" opacity="0.38"/><rect x="984.70" y="445.21" width="1.80" height="1.3" fill="#75715e" opacity="0.38"/><rect x="987.40" y="445.21" width="6.30" height="1.3" fill="#75715e" opacity="0.38"/><rect x="994.60" y="445.21" width="1.80" height="1.3" fill="#75715e" opacity="0.38"/><rect x="997.30" y="445.21" width="5.40" height="1.3" fill="#75715e" opacity="0.38"/><rect x="1003.60" y="445.21" width="2.70" height="1.3" fill="#75715e" opacity="0.38"/><rect x="1007.20" y="445.21" width="6.30" height="1.3" fill="#75715e" opacity="0.38"/><rect x="1014.40" y="445.21" width="7.20" height="1.3" fill="#75715e" opacity="0.38"/><rect x="1022.50" y="445.21" width="5.40" height="1.3" fill="#75715e" opacity="0.38"/><rect x="1028.80" y="445.21" width="4.50" height="1.3" fill="#75715e" opacity="0.38"/><rect x="1034.20" y="445.21" width="1.80" height="1.3" fill="#75715e" opacity="0.38"/><rect x="1036.90" y="445.21" width="2.70" height="1.3" fill="#75715e" opacity="0.38"/><rect x="984.70" y="447.19" width="1.80" height="1.3" fill="#75715e" opacity="0.38"/><rect x="987.40" y="447.19" width="3.60" height="1.3" fill="#75715e" opacity="0.38"/><rect x="991.90" y="447.19" width="4.50" height="1.3" fill="#75715e" opacity="0.38"/><rect x="997.30" y="447.19" width="6.30" height="1.3" fill="#75715e" opacity="0.38"/><rect x="984.70" y="449.16" width="1.80" height="1.3" fill="#75715e" opacity="0.38"/><rect x="984.70" y="451.13" width="1.80" height="1.3" fill="#75715e" opacity="0.38"/><rect x="987.40" y="451.13" width="13.50" height="1.3" fill="#75715e" opacity="0.38"/><rect x="1001.80" y="451.13" width="3.60" height="1.3" fill="#75715e" opacity="0.38"/><rect x="1006.30" y="451.13" width="2.70" height="1.3" fill="#75715e" opacity="0.38"/><rect x="1009.90" y="451.13" width="5.40" height="1.3" fill="#75715e" opacity="0.38"/><rect x="1016.20" y="451.13" width="1.80" height="1.3" fill="#75715e" opacity="0.38"/><rect x="984.70" y="453.10" width="3.60" height="1.3" fill="#2cc6e4" opacity="0.62"/><rect x="989.20" y="453.10" width="7.20" height="1.3" fill="#a6e22e" opacity="0.62"/><rect x="997.30" y="453.10" width="8.10" height="1.3" fill="#2cc6e4" opacity="0.62"/><rect x="1006.30" y="453.10" width="0.90" height="1.3" fill="#f8f8f2" opacity="0.5"/><rect x="988.30" y="455.08" width="5.40" height="1.3" fill="#a6e22e" opacity="0.62"/><rect x="993.70" y="455.08" width="0.90" height="1.3" fill="#f8f8f2" opacity="0.5"/><rect x="994.60" y="455.08" width="0.90" height="1.3" fill="#fd971f" opacity="0.62"/><rect x="996.40" y="455.08" width="0.90" height="1.3" fill="#f8f8f2" opacity="0.5"/><rect x="997.30" y="455.08" width="0.90" height="1.3" fill="#f8f8f2" opacity="0.5"/><rect x="998.20" y="455.08" width="3.60" height="1.3" fill="#2cc6e4" opacity="0.62"/><rect x="1001.80" y="455.08" width="0.90" height="1.3" fill="#f8f8f2" opacity="0.5"/><rect x="1003.60" y="455.08" width="2.70" height="1.3" fill="#fd971f" opacity="0.62"/><rect x="1007.20" y="455.08" width="4.50" height="1.3" fill="#2cc6e4" opacity="0.62"/><rect x="1011.70" y="455.08" width="0.90" height="1.3" fill="#f8f8f2" opacity="0.5"/><rect x="1013.50" y="455.08" width="0.90" height="1.3" fill="#f8f8f2" opacity="0.5"/><rect x="1014.40" y="455.08" width="0.90" height="1.3" fill="#fd971f" opacity="0.62"/><rect x="1016.20" y="455.08" width="2.70" height="1.3" fill="#2cc6e4" opacity="0.62"/><rect x="1018.90" y="455.08" width="0.90" height="1.3" fill="#f8f8f2" opacity="0.5"/><rect x="1020.70" y="455.08" width="2.70" height="1.3" fill="#fd971f" opacity="0.62"/><rect x="1024.30" y="455.08" width="4.50" height="1.3" fill="#2cc6e4" opacity="0.62"/><rect x="1028.80" y="455.08" width="0.90" height="1.3" fill="#f8f8f2" opacity="0.5"/><rect x="984.70" y="457.05" width="0.90" height="1.3" fill="#f8f8f2" opacity="0.5"/><rect x="984.70" y="461.00" width="1.80" height="1.3" fill="#75715e" opacity="0.38"/><rect x="987.40" y="461.00" width="7.20" height="1.3" fill="#75715e" opacity="0.38"/><rect x="995.50" y="461.00" width="1.80" height="1.3" fill="#75715e" opacity="0.38"/><rect x="998.20" y="461.00" width="2.70" height="1.3" fill="#75715e" opacity="0.38"/><rect x="1001.80" y="461.00" width="8.10" height="1.3" fill="#75715e" opacity="0.38"/><rect x="1010.80" y="461.00" width="3.60" height="1.3" fill="#75715e" opacity="0.38"/><rect x="1015.30" y="461.00" width="4.50" height="1.3" fill="#75715e" opacity="0.38"/><rect x="1020.70" y="461.00" width="2.70" height="1.3" fill="#75715e" opacity="0.38"/><rect x="1024.30" y="461.00" width="4.50" height="1.3" fill="#75715e" opacity="0.38"/><rect x="1029.70" y="461.00" width="6.30" height="1.3" fill="#75715e" opacity="0.38"/><rect x="1036.90" y="461.00" width="6.30" height="1.3" fill="#75715e" opacity="0.38"/><rect x="984.70" y="462.97" width="1.80" height="1.3" fill="#75715e" opacity="0.38"/><rect x="984.70" y="464.94" width="1.80" height="1.3" fill="#75715e" opacity="0.38"/><rect x="987.40" y="464.94" width="6.30" height="1.3" fill="#75715e" opacity="0.38"/><rect x="994.60" y="464.94" width="5.40" height="1.3" fill="#75715e" opacity="0.38"/><rect x="1000.90" y="464.94" width="5.40" height="1.3" fill="#75715e" opacity="0.38"/><rect x="1007.20" y="464.94" width="4.50" height="1.3" fill="#75715e" opacity="0.38"/><rect x="1012.60" y="464.94" width="3.60" height="1.3" fill="#75715e" opacity="0.38"/><rect x="1017.10" y="464.94" width="0.90" height="1.3" fill="#75715e" opacity="0.38"/><rect x="1018.90" y="464.94" width="1.80" height="1.3" fill="#75715e" opacity="0.38"/><rect x="1021.60" y="464.94" width="2.70" height="1.3" fill="#75715e" opacity="0.38"/><rect x="1025.20" y="464.94" width="9.00" height="1.3" fill="#75715e" opacity="0.38"/><rect x="1035.10" y="464.94" width="3.60" height="1.3" fill="#75715e" opacity="0.38"/><rect x="1039.60" y="464.94" width="5.40" height="1.3" fill="#75715e" opacity="0.38"/><rect x="984.70" y="466.92" width="1.80" height="1.3" fill="#75715e" opacity="0.38"/><rect x="987.40" y="466.92" width="1.80" height="1.3" fill="#75715e" opacity="0.38"/><rect x="990.10" y="466.92" width="5.40" height="1.3" fill="#75715e" opacity="0.38"/><rect x="996.40" y="466.92" width="3.60" height="1.3" fill="#75715e" opacity="0.38"/><rect x="1000.90" y="466.92" width="1.80" height="1.3" fill="#75715e" opacity="0.38"/><rect x="1003.60" y="466.92" width="6.30" height="1.3" fill="#75715e" opacity="0.38"/><rect x="1010.80" y="466.92" width="2.70" height="1.3" fill="#75715e" opacity="0.38"/><rect x="1014.40" y="466.92" width="5.40" height="1.3" fill="#75715e" opacity="0.38"/><rect x="1020.70" y="466.92" width="1.80" height="1.3" fill="#75715e" opacity="0.38"/><rect x="1023.40" y="466.92" width="4.50" height="1.3" fill="#75715e" opacity="0.38"/><rect x="1028.80" y="466.92" width="6.30" height="1.3" fill="#75715e" opacity="0.38"/><rect x="1036.00" y="466.92" width="3.60" height="1.3" fill="#75715e" opacity="0.38"/><rect x="1040.50" y="466.92" width="0.90" height="1.3" fill="#75715e" opacity="0.38"/><rect x="1042.30" y="466.92" width="1.80" height="1.3" fill="#75715e" opacity="0.38"/><rect x="1045.00" y="466.92" width="1.80" height="1.3" fill="#75715e" opacity="0.38"/><rect x="1047.70" y="466.92" width="0.90" height="1.3" fill="#75715e" opacity="0.38"/><rect x="1049.50" y="466.92" width="1.80" height="1.3" fill="#75715e" opacity="0.38"/><rect x="1052.20" y="466.92" width="6.30" height="1.3" fill="#75715e" opacity="0.38"/><rect x="984.70" y="468.89" width="1.80" height="1.3" fill="#75715e" opacity="0.38"/><rect x="987.40" y="468.89" width="2.70" height="1.3" fill="#75715e" opacity="0.38"/><rect x="991.00" y="468.89" width="2.70" height="1.3" fill="#75715e" opacity="0.38"/><rect x="994.60" y="468.89" width="4.50" height="1.3" fill="#75715e" opacity="0.38"/><rect x="1000.00" y="468.89" width="9.90" height="1.3" fill="#75715e" opacity="0.38"/><rect x="1010.80" y="468.89" width="3.60" height="1.3" fill="#75715e" opacity="0.38"/><rect x="1015.30" y="468.89" width="5.40" height="1.3" fill="#75715e" opacity="0.38"/><rect x="1021.60" y="468.89" width="2.70" height="1.3" fill="#75715e" opacity="0.38"/><rect x="1025.20" y="468.89" width="4.50" height="1.3" fill="#75715e" opacity="0.38"/><rect x="1030.60" y="468.89" width="1.80" height="1.3" fill="#75715e" opacity="0.38"/><rect x="1033.30" y="468.89" width="3.60" height="1.3" fill="#75715e" opacity="0.38"/><rect x="1037.80" y="468.89" width="5.40" height="1.3" fill="#75715e" opacity="0.38"/><rect x="984.70" y="470.86" width="1.80" height="1.3" fill="#75715e" opacity="0.38"/><rect x="987.40" y="470.86" width="6.30" height="1.3" fill="#75715e" opacity="0.38"/><rect x="994.60" y="470.86" width="3.60" height="1.3" fill="#75715e" opacity="0.38"/><rect x="999.10" y="470.86" width="5.40" height="1.3" fill="#75715e" opacity="0.38"/><rect x="1005.40" y="470.86" width="0.90" height="1.3" fill="#75715e" opacity="0.38"/><rect x="1007.20" y="470.86" width="6.30" height="1.3" fill="#75715e" opacity="0.38"/><rect x="1014.40" y="470.86" width="4.50" height="1.3" fill="#75715e" opacity="0.38"/><rect x="1019.80" y="470.86" width="1.80" height="1.3" fill="#75715e" opacity="0.38"/><rect x="1022.50" y="470.86" width="1.80" height="1.3" fill="#75715e" opacity="0.38"/><rect x="1025.20" y="470.86" width="6.30" height="1.3" fill="#75715e" opacity="0.38"/><rect x="1032.40" y="470.86" width="0.90" height="1.3" fill="#75715e" opacity="0.38"/><rect x="1034.20" y="470.86" width="0.90" height="1.3" fill="#75715e" opacity="0.38"/><rect x="1036.00" y="470.86" width="6.30" height="1.3" fill="#75715e" opacity="0.38"/><rect x="984.70" y="472.83" width="1.80" height="1.3" fill="#75715e" opacity="0.38"/><rect x="984.70" y="474.81" width="1.80" height="1.3" fill="#75715e" opacity="0.38"/><rect x="987.40" y="474.81" width="1.80" height="1.3" fill="#75715e" opacity="0.38"/><rect x="990.10" y="474.81" width="6.30" height="1.3" fill="#75715e" opacity="0.38"/><rect x="997.30" y="474.81" width="1.80" height="1.3" fill="#75715e" opacity="0.38"/><rect x="1000.00" y="474.81" width="6.30" height="1.3" fill="#75715e" opacity="0.38"/><rect x="1007.20" y="474.81" width="1.80" height="1.3" fill="#75715e" opacity="0.38"/><rect x="1009.90" y="474.81" width="0.90" height="1.3" fill="#75715e" opacity="0.38"/><rect x="1011.70" y="474.81" width="9.90" height="1.3" fill="#75715e" opacity="0.38"/><rect x="1022.50" y="474.81" width="3.60" height="1.3" fill="#75715e" opacity="0.38"/><rect x="1027.00" y="474.81" width="0.90" height="1.3" fill="#75715e" opacity="0.38"/><rect x="1028.80" y="474.81" width="3.60" height="1.3" fill="#75715e" opacity="0.38"/><rect x="1033.30" y="474.81" width="6.30" height="1.3" fill="#75715e" opacity="0.38"/><rect x="984.70" y="476.78" width="1.80" height="1.3" fill="#75715e" opacity="0.38"/><rect x="987.40" y="476.78" width="6.30" height="1.3" fill="#75715e" opacity="0.38"/><rect x="994.60" y="476.78" width="5.40" height="1.3" fill="#75715e" opacity="0.38"/><rect x="1000.90" y="476.78" width="2.70" height="1.3" fill="#75715e" opacity="0.38"/><rect x="1004.50" y="476.78" width="5.40" height="1.3" fill="#75715e" opacity="0.38"/><rect x="1010.80" y="476.78" width="2.70" height="1.3" fill="#75715e" opacity="0.38"/><rect x="1014.40" y="476.78" width="1.80" height="1.3" fill="#75715e" opacity="0.38"/><rect x="1017.10" y="476.78" width="7.20" height="1.3" fill="#75715e" opacity="0.38"/><rect x="1025.20" y="476.78" width="1.80" height="1.3" fill="#75715e" opacity="0.38"/><rect x="1027.90" y="476.78" width="2.70" height="1.3" fill="#75715e" opacity="0.38"/><rect x="1031.50" y="476.78" width="9.00" height="1.3" fill="#75715e" opacity="0.38"/><rect x="984.70" y="478.75" width="1.80" height="1.3" fill="#75715e" opacity="0.38"/><rect x="987.40" y="478.75" width="3.60" height="1.3" fill="#75715e" opacity="0.38"/><rect x="991.90" y="478.75" width="6.30" height="1.3" fill="#75715e" opacity="0.38"/><rect x="984.70" y="480.73" width="1.80" height="1.3" fill="#75715e" opacity="0.38"/><rect x="984.70" y="482.70" width="1.80" height="1.3" fill="#75715e" opacity="0.38"/><rect x="987.40" y="482.70" width="6.30" height="1.3" fill="#75715e" opacity="0.38"/><rect x="994.60" y="482.70" width="1.80" height="1.3" fill="#75715e" opacity="0.38"/><rect x="997.30" y="482.70" width="6.30" height="1.3" fill="#75715e" opacity="0.38"/><rect x="1004.50" y="482.70" width="2.70" height="1.3" fill="#75715e" opacity="0.38"/><rect x="1008.10" y="482.70" width="6.30" height="1.3" fill="#75715e" opacity="0.38"/><rect x="1015.30" y="482.70" width="7.20" height="1.3" fill="#75715e" opacity="0.38"/><rect x="1023.40" y="482.70" width="6.30" height="1.3" fill="#75715e" opacity="0.38"/><rect x="1030.60" y="482.70" width="4.50" height="1.3" fill="#75715e" opacity="0.38"/><rect x="1036.00" y="482.70" width="1.80" height="1.3" fill="#75715e" opacity="0.38"/><rect x="1038.70" y="482.70" width="2.70" height="1.3" fill="#75715e" opacity="0.38"/><rect x="1042.30" y="482.70" width="3.60" height="1.3" fill="#75715e" opacity="0.38"/><rect x="984.70" y="484.67" width="1.80" height="1.3" fill="#75715e" opacity="0.38"/><rect x="987.40" y="484.67" width="9.90" height="1.3" fill="#75715e" opacity="0.38"/><rect x="998.20" y="484.67" width="1.80" height="1.3" fill="#75715e" opacity="0.38"/><rect x="1000.90" y="484.67" width="2.70" height="1.3" fill="#75715e" opacity="0.38"/><rect x="1004.50" y="484.67" width="5.40" height="1.3" fill="#75715e" opacity="0.38"/><rect x="1010.80" y="484.67" width="1.80" height="1.3" fill="#75715e" opacity="0.38"/><rect x="1013.50" y="484.67" width="2.70" height="1.3" fill="#75715e" opacity="0.38"/><rect x="1017.10" y="484.67" width="7.20" height="1.3" fill="#75715e" opacity="0.38"/><rect x="984.70" y="486.65" width="1.80" height="1.3" fill="#75715e" opacity="0.38"/><rect x="984.70" y="488.62" width="1.80" height="1.3" fill="#75715e" opacity="0.38"/><rect x="987.40" y="488.62" width="13.50" height="1.3" fill="#75715e" opacity="0.38"/><rect x="1001.80" y="488.62" width="3.60" height="1.3" fill="#75715e" opacity="0.38"/><rect x="1006.30" y="488.62" width="2.70" height="1.3" fill="#75715e" opacity="0.38"/><rect x="1009.90" y="488.62" width="5.40" height="1.3" fill="#75715e" opacity="0.38"/><rect x="1016.20" y="488.62" width="1.80" height="1.3" fill="#75715e" opacity="0.38"/><rect x="984.70" y="490.59" width="3.60" height="1.3" fill="#2cc6e4" opacity="0.62"/><rect x="989.20" y="490.59" width="7.20" height="1.3" fill="#a6e22e" opacity="0.62"/><rect x="997.30" y="490.59" width="8.10" height="1.3" fill="#2cc6e4" opacity="0.62"/><rect x="1006.30" y="490.59" width="0.90" height="1.3" fill="#f8f8f2" opacity="0.5"/><rect x="988.30" y="492.56" width="6.30" height="1.3" fill="#a6e22e" opacity="0.62"/><rect x="994.60" y="492.56" width="0.90" height="1.3" fill="#f8f8f2" opacity="0.5"/><rect x="995.50" y="492.56" width="0.90" height="1.3" fill="#fd971f" opacity="0.62"/><rect x="997.30" y="492.56" width="0.90" height="1.3" fill="#f8f8f2" opacity="0.5"/><rect x="998.20" y="492.56" width="0.90" height="1.3" fill="#f8f8f2" opacity="0.5"/><rect x="999.10" y="492.56" width="3.60" height="1.3" fill="#2cc6e4" opacity="0.62"/><rect x="1002.70" y="492.56" width="0.90" height="1.3" fill="#f8f8f2" opacity="0.5"/><rect x="1004.50" y="492.56" width="2.70" height="1.3" fill="#fd971f" opacity="0.62"/><rect x="1008.10" y="492.56" width="4.50" height="1.3" fill="#2cc6e4" opacity="0.62"/><rect x="1012.60" y="492.56" width="0.90" height="1.3" fill="#f8f8f2" opacity="0.5"/><rect x="1014.40" y="492.56" width="0.90" height="1.3" fill="#f8f8f2" opacity="0.5"/><rect x="1015.30" y="492.56" width="0.90" height="1.3" fill="#fd971f" opacity="0.62"/><rect x="1017.10" y="492.56" width="2.70" height="1.3" fill="#2cc6e4" opacity="0.62"/><rect x="1019.80" y="492.56" width="0.90" height="1.3" fill="#f8f8f2" opacity="0.5"/><rect x="1021.60" y="492.56" width="2.70" height="1.3" fill="#fd971f" opacity="0.62"/><rect x="1025.20" y="492.56" width="4.50" height="1.3" fill="#2cc6e4" opacity="0.62"/><rect x="1029.70" y="492.56" width="0.90" height="1.3" fill="#f8f8f2" opacity="0.5"/><rect x="984.70" y="494.54" width="0.90" height="1.3" fill="#f8f8f2" opacity="0.5"/><rect x="984.70" y="498.48" width="1.80" height="1.3" fill="#75715e" opacity="0.38"/><rect x="987.40" y="498.48" width="9.00" height="1.3" fill="#75715e" opacity="0.38"/><rect x="997.30" y="498.48" width="1.80" height="1.3" fill="#75715e" opacity="0.38"/><rect x="1000.00" y="498.48" width="2.70" height="1.3" fill="#75715e" opacity="0.38"/><rect x="1003.60" y="498.48" width="8.10" height="1.3" fill="#75715e" opacity="0.38"/><rect x="1012.60" y="498.48" width="3.60" height="1.3" fill="#75715e" opacity="0.38"/><rect x="1017.10" y="498.48" width="4.50" height="1.3" fill="#75715e" opacity="0.38"/><rect x="1022.50" y="498.48" width="2.70" height="1.3" fill="#75715e" opacity="0.38"/><rect x="1026.10" y="498.48" width="7.20" height="1.3" fill="#75715e" opacity="0.38"/><rect x="1034.20" y="498.48" width="6.30" height="1.3" fill="#75715e" opacity="0.38"/><rect x="984.70" y="500.46" width="1.80" height="1.3" fill="#75715e" opacity="0.38"/><rect x="984.70" y="502.43" width="1.80" height="1.3" fill="#75715e" opacity="0.38"/><rect x="987.40" y="502.43" width="7.20" height="1.3" fill="#75715e" opacity="0.38"/><rect x="995.50" y="502.43" width="4.50" height="1.3" fill="#75715e" opacity="0.38"/><rect x="1000.90" y="502.43" width="2.70" height="1.3" fill="#75715e" opacity="0.38"/><rect x="1004.50" y="502.43" width="6.30" height="1.3" fill="#75715e" opacity="0.38"/><rect x="1011.70" y="502.43" width="2.70" height="1.3" fill="#75715e" opacity="0.38"/><rect x="1015.30" y="502.43" width="3.60" height="1.3" fill="#75715e" opacity="0.38"/><rect x="1019.80" y="502.43" width="3.60" height="1.3" fill="#75715e" opacity="0.38"/><rect x="1024.30" y="502.43" width="3.60" height="1.3" fill="#75715e" opacity="0.38"/><rect x="1028.80" y="502.43" width="2.70" height="1.3" fill="#75715e" opacity="0.38"/><rect x="1032.40" y="502.43" width="4.50" height="1.3" fill="#75715e" opacity="0.38"/><rect x="1037.80" y="502.43" width="1.80" height="1.3" fill="#75715e" opacity="0.38"/><rect x="984.70" y="504.40" width="1.80" height="1.3" fill="#75715e" opacity="0.38"/><rect x="987.40" y="504.40" width="2.70" height="1.3" fill="#75715e" opacity="0.38"/><rect x="991.00" y="504.40" width="4.50" height="1.3" fill="#75715e" opacity="0.38"/><rect x="996.40" y="504.40" width="10.80" height="1.3" fill="#75715e" opacity="0.38"/><rect x="1008.10" y="504.40" width="1.80" height="1.3" fill="#75715e" opacity="0.38"/><rect x="1010.80" y="504.40" width="7.20" height="1.3" fill="#75715e" opacity="0.38"/><rect x="1018.90" y="504.40" width="6.30" height="1.3" fill="#75715e" opacity="0.38"/><rect x="1026.10" y="504.40" width="1.80" height="1.3" fill="#75715e" opacity="0.38"/><rect x="1028.80" y="504.40" width="5.40" height="1.3" fill="#75715e" opacity="0.38"/><rect x="1035.10" y="504.40" width="1.80" height="1.3" fill="#75715e" opacity="0.38"/><rect x="1037.80" y="504.40" width="4.50" height="1.3" fill="#75715e" opacity="0.38"/><rect x="984.70" y="506.38" width="1.80" height="1.3" fill="#75715e" opacity="0.38"/><rect x="987.40" y="506.38" width="3.60" height="1.3" fill="#75715e" opacity="0.38"/><rect x="991.90" y="506.38" width="2.70" height="1.3" fill="#75715e" opacity="0.38"/><rect x="995.50" y="506.38" width="8.10" height="1.3" fill="#75715e" opacity="0.38"/><rect x="1004.50" y="506.38" width="2.70" height="1.3" fill="#75715e" opacity="0.38"/><rect x="1008.10" y="506.38" width="2.70" height="1.3" fill="#75715e" opacity="0.38"/><rect x="1011.70" y="506.38" width="7.20" height="1.3" fill="#75715e" opacity="0.38"/><rect x="1019.80" y="506.38" width="3.60" height="1.3" fill="#75715e" opacity="0.38"/><rect x="1024.30" y="506.38" width="4.50" height="1.3" fill="#75715e" opacity="0.38"/><rect x="1029.70" y="506.38" width="1.80" height="1.3" fill="#75715e" opacity="0.38"/><rect x="1032.40" y="506.38" width="9.00" height="1.3" fill="#75715e" opacity="0.38"/><rect x="984.70" y="508.35" width="3.60" height="1.3" fill="#2cc6e4" opacity="0.62"/><rect x="989.20" y="508.35" width="9.00" height="1.3" fill="#a6e22e" opacity="0.62"/><rect x="999.10" y="508.35" width="8.10" height="1.3" fill="#2cc6e4" opacity="0.62"/><rect x="1008.10" y="508.35" width="0.90" height="1.3" fill="#f8f8f2" opacity="0.5"/><rect x="988.30" y="510.32" width="7.20" height="1.3" fill="#a6e22e" opacity="0.62"/><rect x="995.50" y="510.32" width="0.90" height="1.3" fill="#f8f8f2" opacity="0.5"/><rect x="996.40" y="510.32" width="0.90" height="1.3" fill="#f8f8f2" opacity="0.5"/><rect x="998.20" y="510.32" width="0.90" height="1.3" fill="#f8f8f2" opacity="0.5"/><rect x="999.10" y="510.32" width="3.60" height="1.3" fill="#2cc6e4" opacity="0.62"/><rect x="1002.70" y="510.32" width="0.90" height="1.3" fill="#f8f8f2" opacity="0.5"/><rect x="1004.50" y="510.32" width="4.50" height="1.3" fill="#2cc6e4" opacity="0.62"/><rect x="1009.00" y="510.32" width="0.90" height="1.3" fill="#f8f8f2" opacity="0.5"/><rect x="984.70" y="512.29" width="0.90" height="1.3" fill="#f8f8f2" opacity="0.5"/><rect x="984.70" y="516.24" width="1.80" height="1.3" fill="#75715e" opacity="0.38"/><rect x="987.40" y="516.24" width="9.90" height="1.3" fill="#75715e" opacity="0.38"/><rect x="998.20" y="516.24" width="1.80" height="1.3" fill="#75715e" opacity="0.38"/><rect x="1000.90" y="516.24" width="2.70" height="1.3" fill="#75715e" opacity="0.38"/><rect x="1004.50" y="516.24" width="8.10" height="1.3" fill="#75715e" opacity="0.38"/><rect x="1013.50" y="516.24" width="3.60" height="1.3" fill="#75715e" opacity="0.38"/><rect x="1018.00" y="516.24" width="3.60" height="1.3" fill="#75715e" opacity="0.38"/><rect x="1022.50" y="516.24" width="2.70" height="1.3" fill="#75715e" opacity="0.38"/><rect x="1026.10" y="516.24" width="9.00" height="1.3" fill="#75715e" opacity="0.38"/><rect x="1036.00" y="516.24" width="5.40" height="1.3" fill="#75715e" opacity="0.38"/><rect x="1042.30" y="516.24" width="1.80" height="1.3" fill="#75715e" opacity="0.38"/><rect x="1045.00" y="516.24" width="2.70" height="1.3" fill="#75715e" opacity="0.38"/><rect x="984.70" y="518.21" width="1.80" height="1.3" fill="#75715e" opacity="0.38"/><rect x="987.40" y="518.21" width="4.50" height="1.3" fill="#75715e" opacity="0.38"/><rect x="992.80" y="518.21" width="7.20" height="1.3" fill="#75715e" opacity="0.38"/><rect x="1000.90" y="518.21" width="6.30" height="1.3" fill="#75715e" opacity="0.38"/><rect x="984.70" y="520.19" width="1.80" height="1.3" fill="#75715e" opacity="0.38"/><rect x="984.70" y="522.16" width="1.80" height="1.3" fill="#75715e" opacity="0.38"/><rect x="987.40" y="522.16" width="9.00" height="1.3" fill="#75715e" opacity="0.38"/><rect x="997.30" y="522.16" width="5.40" height="1.3" fill="#75715e" opacity="0.38"/><rect x="1003.60" y="522.16" width="2.70" height="1.3" fill="#75715e" opacity="0.38"/><rect x="1007.20" y="522.16" width="3.60" height="1.3" fill="#75715e" opacity="0.38"/><rect x="1011.70" y="522.16" width="3.60" height="1.3" fill="#75715e" opacity="0.38"/><rect x="1016.20" y="522.16" width="1.80" height="1.3" fill="#75715e" opacity="0.38"/><rect x="1018.90" y="522.16" width="7.20" height="1.3" fill="#75715e" opacity="0.38"/><rect x="1027.00" y="522.16" width="1.80" height="1.3" fill="#75715e" opacity="0.38"/><rect x="1029.70" y="522.16" width="5.40" height="1.3" fill="#75715e" opacity="0.38"/><rect x="1036.00" y="522.16" width="2.70" height="1.3" fill="#75715e" opacity="0.38"/><rect x="1039.60" y="522.16" width="3.60" height="1.3" fill="#75715e" opacity="0.38"/><rect x="1044.10" y="522.16" width="3.60" height="1.3" fill="#75715e" opacity="0.38"/><rect x="984.70" y="524.13" width="1.80" height="1.3" fill="#75715e" opacity="0.38"/><rect x="987.40" y="524.13" width="1.80" height="1.3" fill="#75715e" opacity="0.38"/><rect x="990.10" y="524.13" width="2.70" height="1.3" fill="#75715e" opacity="0.38"/><rect x="993.70" y="524.13" width="7.20" height="1.3" fill="#75715e" opacity="0.38"/><rect x="1001.80" y="524.13" width="3.60" height="1.3" fill="#75715e" opacity="0.38"/><rect x="1006.30" y="524.13" width="1.80" height="1.3" fill="#75715e" opacity="0.38"/><rect x="1009.00" y="524.13" width="8.10" height="1.3" fill="#75715e" opacity="0.38"/><rect x="984.70" y="526.11" width="1.80" height="1.3" fill="#75715e" opacity="0.38"/><rect x="987.40" y="526.11" width="1.80" height="1.3" fill="#75715e" opacity="0.38"/><rect x="990.10" y="526.11" width="2.70" height="1.3" fill="#75715e" opacity="0.38"/><rect x="993.70" y="526.11" width="1.80" height="1.3" fill="#75715e" opacity="0.38"/><rect x="996.40" y="526.11" width="1.80" height="1.3" fill="#75715e" opacity="0.38"/><rect x="999.10" y="526.11" width="4.50" height="1.3" fill="#75715e" opacity="0.38"/><rect x="1004.50" y="526.11" width="1.80" height="1.3" fill="#75715e" opacity="0.38"/><rect x="1007.20" y="526.11" width="3.60" height="1.3" fill="#75715e" opacity="0.38"/><rect x="1011.70" y="526.11" width="9.00" height="1.3" fill="#75715e" opacity="0.38"/><rect x="1021.60" y="526.11" width="4.50" height="1.3" fill="#75715e" opacity="0.38"/><rect x="1027.00" y="526.11" width="6.30" height="1.3" fill="#75715e" opacity="0.38"/><rect x="1034.20" y="526.11" width="1.80" height="1.3" fill="#75715e" opacity="0.38"/><rect x="1036.90" y="526.11" width="9.90" height="1.3" fill="#75715e" opacity="0.38"/><rect x="984.70" y="528.08" width="1.80" height="1.3" fill="#75715e" opacity="0.38"/><rect x="987.40" y="528.08" width="3.60" height="1.3" fill="#75715e" opacity="0.38"/><rect x="991.90" y="528.08" width="1.80" height="1.3" fill="#75715e" opacity="0.38"/><rect x="994.60" y="528.08" width="8.10" height="1.3" fill="#75715e" opacity="0.38"/><rect x="984.70" y="530.05" width="3.60" height="1.3" fill="#2cc6e4" opacity="0.62"/><rect x="989.20" y="530.05" width="9.90" height="1.3" fill="#a6e22e" opacity="0.62"/><rect x="1000.00" y="530.05" width="8.10" height="1.3" fill="#2cc6e4" opacity="0.62"/><rect x="1009.00" y="530.05" width="0.90" height="1.3" fill="#f8f8f2" opacity="0.5"/><rect x="988.30" y="532.02" width="9.00" height="1.3" fill="#a6e22e" opacity="0.62"/><rect x="988.30" y="534.00" width="9.00" height="1.3" fill="#a6e22e" opacity="0.62"/><rect x="997.30" y="534.00" width="0.90" height="1.3" fill="#f8f8f2" opacity="0.5"/><rect x="998.20" y="534.00" width="0.90" height="1.3" fill="#f8f8f2" opacity="0.5"/><rect x="1000.00" y="534.00" width="4.50" height="1.3" fill="#2cc6e4" opacity="0.62"/><rect x="984.70" y="535.97" width="0.90" height="1.3" fill="#f8f8f2" opacity="0.5"/><rect x="984.70" y="539.92" width="1.80" height="1.3" fill="#75715e" opacity="0.38"/><rect x="987.40" y="539.92" width="9.00" height="1.3" fill="#75715e" opacity="0.38"/><rect x="997.30" y="539.92" width="1.80" height="1.3" fill="#75715e" opacity="0.38"/><rect x="1000.00" y="539.92" width="2.70" height="1.3" fill="#75715e" opacity="0.38"/><rect x="1003.60" y="539.92" width="8.10" height="1.3" fill="#75715e" opacity="0.38"/><rect x="1012.60" y="539.92" width="3.60" height="1.3" fill="#75715e" opacity="0.38"/><rect x="1017.10" y="539.92" width="4.50" height="1.3" fill="#75715e" opacity="0.38"/><rect x="1022.50" y="539.92" width="2.70" height="1.3" fill="#75715e" opacity="0.38"/><rect x="1026.10" y="539.92" width="8.10" height="1.3" fill="#75715e" opacity="0.38"/><rect x="1035.10" y="539.92" width="6.30" height="1.3" fill="#75715e" opacity="0.38"/><rect x="984.70" y="541.89" width="3.60" height="1.3" fill="#2cc6e4" opacity="0.62"/><rect x="989.20" y="541.89" width="9.00" height="1.3" fill="#a6e22e" opacity="0.62"/><rect x="999.10" y="541.89" width="8.10" height="1.3" fill="#2cc6e4" opacity="0.62"/><rect x="1008.10" y="541.89" width="0.90" height="1.3" fill="#f8f8f2" opacity="0.5"/><rect x="988.30" y="543.86" width="8.10" height="1.3" fill="#a6e22e" opacity="0.62"/><rect x="996.40" y="543.86" width="0.90" height="1.3" fill="#f8f8f2" opacity="0.5"/><rect x="997.30" y="543.86" width="0.90" height="1.3" fill="#fd971f" opacity="0.62"/><rect x="999.10" y="543.86" width="3.60" height="1.3" fill="#2cc6e4" opacity="0.62"/><rect x="1002.70" y="543.86" width="0.90" height="1.3" fill="#f8f8f2" opacity="0.5"/><rect x="1004.50" y="543.86" width="4.50" height="1.3" fill="#2cc6e4" opacity="0.62"/><rect x="984.70" y="545.84" width="0.90" height="1.3" fill="#f8f8f2" opacity="0.5"/><rect x="984.70" y="549.78" width="1.80" height="1.3" fill="#75715e" opacity="0.38"/><rect x="987.40" y="549.78" width="9.00" height="1.3" fill="#75715e" opacity="0.38"/><rect x="997.30" y="549.78" width="1.80" height="1.3" fill="#75715e" opacity="0.38"/><rect x="1000.00" y="549.78" width="2.70" height="1.3" fill="#75715e" opacity="0.38"/><rect x="1003.60" y="549.78" width="8.10" height="1.3" fill="#75715e" opacity="0.38"/><rect x="1012.60" y="549.78" width="3.60" height="1.3" fill="#75715e" opacity="0.38"/><rect x="1017.10" y="549.78" width="4.50" height="1.3" fill="#75715e" opacity="0.38"/><rect x="1022.50" y="549.78" width="2.70" height="1.3" fill="#75715e" opacity="0.38"/><rect x="1026.10" y="549.78" width="7.20" height="1.3" fill="#75715e" opacity="0.38"/><rect x="1034.20" y="549.78" width="6.30" height="1.3" fill="#75715e" opacity="0.38"/><rect x="984.70" y="551.75" width="1.80" height="1.3" fill="#75715e" opacity="0.38"/><rect x="984.70" y="553.73" width="1.80" height="1.3" fill="#75715e" opacity="0.38"/><rect x="987.40" y="553.73" width="7.20" height="1.3" fill="#75715e" opacity="0.38"/><rect x="995.50" y="553.73" width="4.50" height="1.3" fill="#75715e" opacity="0.38"/><rect x="1000.90" y="553.73" width="0.90" height="1.3" fill="#75715e" opacity="0.38"/><rect x="1002.70" y="553.73" width="5.40" height="1.3" fill="#75715e" opacity="0.38"/><rect x="1009.00" y="553.73" width="4.50" height="1.3" fill="#75715e" opacity="0.38"/><rect x="1014.40" y="553.73" width="6.30" height="1.3" fill="#75715e" opacity="0.38"/><rect x="1021.60" y="553.73" width="6.30" height="1.3" fill="#75715e" opacity="0.38"/><rect x="1028.80" y="553.73" width="8.10" height="1.3" fill="#75715e" opacity="0.38"/><rect x="984.70" y="555.70" width="1.80" height="1.3" fill="#75715e" opacity="0.38"/><rect x="987.40" y="555.70" width="2.70" height="1.3" fill="#75715e" opacity="0.38"/><rect x="991.00" y="555.70" width="6.30" height="1.3" fill="#75715e" opacity="0.38"/><rect x="998.20" y="555.70" width="2.70" height="1.3" fill="#75715e" opacity="0.38"/><rect x="1001.80" y="555.70" width="3.60" height="1.3" fill="#75715e" opacity="0.38"/><rect x="1006.30" y="555.70" width="2.70" height="1.3" fill="#75715e" opacity="0.38"/><rect x="1009.90" y="555.70" width="2.70" height="1.3" fill="#75715e" opacity="0.38"/><rect x="1013.50" y="555.70" width="3.60" height="1.3" fill="#75715e" opacity="0.38"/><rect x="1018.00" y="555.70" width="1.80" height="1.3" fill="#75715e" opacity="0.38"/><rect x="1020.70" y="555.70" width="5.40" height="1.3" fill="#75715e" opacity="0.38"/><rect x="1027.00" y="555.70" width="1.80" height="1.3" fill="#75715e" opacity="0.38"/><rect x="1029.70" y="555.70" width="1.80" height="1.3" fill="#75715e" opacity="0.38"/><rect x="1032.40" y="555.70" width="8.10" height="1.3" fill="#75715e" opacity="0.38"/><rect x="1041.40" y="555.70" width="1.80" height="1.3" fill="#75715e" opacity="0.38"/><rect x="984.70" y="557.67" width="1.80" height="1.3" fill="#75715e" opacity="0.38"/><rect x="987.40" y="557.67" width="9.00" height="1.3" fill="#75715e" opacity="0.38"/><rect x="997.30" y="557.67" width="2.70" height="1.3" fill="#75715e" opacity="0.38"/><rect x="1000.90" y="557.67" width="3.60" height="1.3" fill="#75715e" opacity="0.38"/><rect x="1005.40" y="557.67" width="1.80" height="1.3" fill="#75715e" opacity="0.38"/><rect x="1008.10" y="557.67" width="3.60" height="1.3" fill="#75715e" opacity="0.38"/><rect x="984.70" y="559.65" width="3.60" height="1.3" fill="#2cc6e4" opacity="0.62"/><rect x="989.20" y="559.65" width="9.00" height="1.3" fill="#a6e22e" opacity="0.62"/><rect x="999.10" y="559.65" width="8.10" height="1.3" fill="#2cc6e4" opacity="0.62"/><rect x="1008.10" y="559.65" width="0.90" height="1.3" fill="#f8f8f2" opacity="0.5"/><rect x="988.30" y="561.62" width="7.20" height="1.3" fill="#a6e22e" opacity="0.62"/><rect x="995.50" y="561.62" width="0.90" height="1.3" fill="#f8f8f2" opacity="0.5"/><rect x="996.40" y="561.62" width="0.90" height="1.3" fill="#f8f8f2" opacity="0.5"/><rect x="998.20" y="561.62" width="0.90" height="1.3" fill="#f8f8f2" opacity="0.5"/><rect x="999.10" y="561.62" width="0.90" height="1.3" fill="#fd971f" opacity="0.62"/><rect x="1000.90" y="561.62" width="3.60" height="1.3" fill="#2cc6e4" opacity="0.62"/><rect x="1004.50" y="561.62" width="0.90" height="1.3" fill="#f8f8f2" opacity="0.5"/><rect x="1006.30" y="561.62" width="3.60" height="1.3" fill="#fd971f" opacity="0.62"/><rect x="1010.80" y="561.62" width="2.70" height="1.3" fill="#2cc6e4" opacity="0.62"/><rect x="1013.50" y="561.62" width="0.90" height="1.3" fill="#f8f8f2" opacity="0.5"/><rect x="1015.30" y="561.62" width="2.70" height="1.3" fill="#fd971f" opacity="0.62"/><rect x="1018.90" y="561.62" width="4.50" height="1.3" fill="#2cc6e4" opacity="0.62"/><rect x="1023.40" y="561.62" width="0.90" height="1.3" fill="#f8f8f2" opacity="0.5"/><rect x="984.70" y="563.59" width="0.90" height="1.3" fill="#f8f8f2" opacity="0.5"/><rect x="984.70" y="567.54" width="1.80" height="1.3" fill="#75715e" opacity="0.38"/><rect x="987.40" y="567.54" width="9.90" height="1.3" fill="#75715e" opacity="0.38"/><rect x="998.20" y="567.54" width="1.80" height="1.3" fill="#75715e" opacity="0.38"/><rect x="1000.90" y="567.54" width="2.70" height="1.3" fill="#75715e" opacity="0.38"/><rect x="1004.50" y="567.54" width="8.10" height="1.3" fill="#75715e" opacity="0.38"/><rect x="1013.50" y="567.54" width="3.60" height="1.3" fill="#75715e" opacity="0.38"/><rect x="1018.00" y="567.54" width="3.60" height="1.3" fill="#75715e" opacity="0.38"/><rect x="1022.50" y="567.54" width="2.70" height="1.3" fill="#75715e" opacity="0.38"/><rect x="1026.10" y="567.54" width="9.00" height="1.3" fill="#75715e" opacity="0.38"/><rect x="1036.00" y="567.54" width="5.40" height="1.3" fill="#75715e" opacity="0.38"/><rect x="1042.30" y="567.54" width="1.80" height="1.3" fill="#75715e" opacity="0.38"/><rect x="1045.00" y="567.54" width="2.70" height="1.3" fill="#75715e" opacity="0.38"/><rect x="984.70" y="569.51" width="1.80" height="1.3" fill="#75715e" opacity="0.38"/><rect x="987.40" y="569.51" width="4.50" height="1.3" fill="#75715e" opacity="0.38"/><rect x="992.80" y="569.51" width="7.20" height="1.3" fill="#75715e" opacity="0.38"/><rect x="1000.90" y="569.51" width="6.30" height="1.3" fill="#75715e" opacity="0.38"/><rect x="984.70" y="571.48" width="1.80" height="1.3" fill="#75715e" opacity="0.38"/><rect x="984.70" y="573.46" width="1.80" height="1.3" fill="#75715e" opacity="0.38"/><rect x="987.40" y="573.46" width="9.00" height="1.3" fill="#75715e" opacity="0.38"/><rect x="997.30" y="573.46" width="5.40" height="1.3" fill="#75715e" opacity="0.38"/><rect x="1003.60" y="573.46" width="2.70" height="1.3" fill="#75715e" opacity="0.38"/><rect x="1007.20" y="573.46" width="3.60" height="1.3" fill="#75715e" opacity="0.38"/><rect x="1011.70" y="573.46" width="3.60" height="1.3" fill="#75715e" opacity="0.38"/><rect x="1016.20" y="573.46" width="1.80" height="1.3" fill="#75715e" opacity="0.38"/><rect x="1018.90" y="573.46" width="7.20" height="1.3" fill="#75715e" opacity="0.38"/><rect x="1027.00" y="573.46" width="1.80" height="1.3" fill="#75715e" opacity="0.38"/><rect x="1029.70" y="573.46" width="5.40" height="1.3" fill="#75715e" opacity="0.38"/><rect x="1036.00" y="573.46" width="2.70" height="1.3" fill="#75715e" opacity="0.38"/><rect x="1039.60" y="573.46" width="3.60" height="1.3" fill="#75715e" opacity="0.38"/><rect x="1044.10" y="573.46" width="3.60" height="1.3" fill="#75715e" opacity="0.38"/><rect x="984.70" y="575.43" width="1.80" height="1.3" fill="#75715e" opacity="0.38"/><rect x="987.40" y="575.43" width="1.80" height="1.3" fill="#75715e" opacity="0.38"/><rect x="990.10" y="575.43" width="2.70" height="1.3" fill="#75715e" opacity="0.38"/><rect x="993.70" y="575.43" width="7.20" height="1.3" fill="#75715e" opacity="0.38"/><rect x="1001.80" y="575.43" width="3.60" height="1.3" fill="#75715e" opacity="0.38"/><rect x="1006.30" y="575.43" width="1.80" height="1.3" fill="#75715e" opacity="0.38"/><rect x="1009.00" y="575.43" width="8.10" height="1.3" fill="#75715e" opacity="0.38"/><rect x="984.70" y="577.40" width="1.80" height="1.3" fill="#75715e" opacity="0.38"/><rect x="987.40" y="577.40" width="1.80" height="1.3" fill="#75715e" opacity="0.38"/><rect x="990.10" y="577.40" width="2.70" height="1.3" fill="#75715e" opacity="0.38"/><rect x="993.70" y="577.40" width="1.80" height="1.3" fill="#75715e" opacity="0.38"/><rect x="996.40" y="577.40" width="1.80" height="1.3" fill="#75715e" opacity="0.38"/><rect x="999.10" y="577.40" width="4.50" height="1.3" fill="#75715e" opacity="0.38"/><rect x="1004.50" y="577.40" width="1.80" height="1.3" fill="#75715e" opacity="0.38"/><rect x="1007.20" y="577.40" width="3.60" height="1.3" fill="#75715e" opacity="0.38"/><rect x="1011.70" y="577.40" width="9.00" height="1.3" fill="#75715e" opacity="0.38"/><rect x="1021.60" y="577.40" width="4.50" height="1.3" fill="#75715e" opacity="0.38"/><rect x="1027.00" y="577.40" width="6.30" height="1.3" fill="#75715e" opacity="0.38"/><rect x="1034.20" y="577.40" width="1.80" height="1.3" fill="#75715e" opacity="0.38"/><rect x="1036.90" y="577.40" width="9.90" height="1.3" fill="#75715e" opacity="0.38"/><rect x="984.70" y="579.38" width="1.80" height="1.3" fill="#75715e" opacity="0.38"/><rect x="987.40" y="579.38" width="3.60" height="1.3" fill="#75715e" opacity="0.38"/><rect x="991.90" y="579.38" width="1.80" height="1.3" fill="#75715e" opacity="0.38"/><rect x="994.60" y="579.38" width="8.10" height="1.3" fill="#75715e" opacity="0.38"/><rect x="984.70" y="581.35" width="3.60" height="1.3" fill="#2cc6e4" opacity="0.62"/><rect x="989.20" y="581.35" width="9.90" height="1.3" fill="#a6e22e" opacity="0.62"/><rect x="1000.00" y="581.35" width="8.10" height="1.3" fill="#2cc6e4" opacity="0.62"/><rect x="1009.00" y="581.35" width="0.90" height="1.3" fill="#f8f8f2" opacity="0.5"/><rect x="988.30" y="583.32" width="9.00" height="1.3" fill="#a6e22e" opacity="0.62"/><rect x="988.30" y="585.30" width="9.00" height="1.3" fill="#a6e22e" opacity="0.62"/><rect x="997.30" y="585.30" width="0.90" height="1.3" fill="#f8f8f2" opacity="0.5"/><rect x="998.20" y="585.30" width="0.90" height="1.3" fill="#f8f8f2" opacity="0.5"/><rect x="1000.00" y="585.30" width="4.50" height="1.3" fill="#2cc6e4" opacity="0.62"/><rect x="984.70" y="587.27" width="0.90" height="1.3" fill="#f8f8f2" opacity="0.5"/><rect x="984.70" y="591.21" width="1.80" height="1.3" fill="#75715e" opacity="0.38"/><rect x="987.40" y="591.21" width="10.80" height="1.3" fill="#75715e" opacity="0.38"/><rect x="999.10" y="591.21" width="1.80" height="1.3" fill="#75715e" opacity="0.38"/><rect x="1001.80" y="591.21" width="2.70" height="1.3" fill="#75715e" opacity="0.38"/><rect x="1005.40" y="591.21" width="8.10" height="1.3" fill="#75715e" opacity="0.38"/><rect x="1014.40" y="591.21" width="3.60" height="1.3" fill="#75715e" opacity="0.38"/><rect x="1018.90" y="591.21" width="4.50" height="1.3" fill="#75715e" opacity="0.38"/><rect x="1024.30" y="591.21" width="2.70" height="1.3" fill="#75715e" opacity="0.38"/><rect x="1027.90" y="591.21" width="9.90" height="1.3" fill="#75715e" opacity="0.38"/><rect x="1038.70" y="591.21" width="6.30" height="1.3" fill="#75715e" opacity="0.38"/><rect x="984.70" y="593.19" width="3.60" height="1.3" fill="#2cc6e4" opacity="0.62"/><rect x="989.20" y="593.19" width="10.80" height="1.3" fill="#a6e22e" opacity="0.62"/><rect x="1000.90" y="593.19" width="8.10" height="1.3" fill="#2cc6e4" opacity="0.62"/><rect x="1009.90" y="593.19" width="0.90" height="1.3" fill="#f8f8f2" opacity="0.5"/><rect x="988.30" y="595.16" width="9.90" height="1.3" fill="#a6e22e" opacity="0.62"/><rect x="998.20" y="595.16" width="0.90" height="1.3" fill="#f8f8f2" opacity="0.5"/><rect x="999.10" y="595.16" width="0.90" height="1.3" fill="#fd971f" opacity="0.62"/><rect x="1000.90" y="595.16" width="5.40" height="1.3" fill="#2cc6e4" opacity="0.62"/><rect x="1006.30" y="595.16" width="0.90" height="1.3" fill="#f8f8f2" opacity="0.5"/><rect x="1008.10" y="595.16" width="0.90" height="1.3" fill="#f8f8f2" opacity="0.5"/><rect x="1009.00" y="595.16" width="0.90" height="1.3" fill="#fd971f" opacity="0.62"/><rect x="1010.80" y="595.16" width="2.70" height="1.3" fill="#2cc6e4" opacity="0.62"/><rect x="1013.50" y="595.16" width="0.90" height="1.3" fill="#f8f8f2" opacity="0.5"/><rect x="1015.30" y="595.16" width="2.70" height="1.3" fill="#fd971f" opacity="0.62"/><rect x="1018.90" y="595.16" width="4.50" height="1.3" fill="#2cc6e4" opacity="0.62"/><rect x="1023.40" y="595.16" width="0.90" height="1.3" fill="#f8f8f2" opacity="0.5"/><rect x="984.70" y="597.13" width="0.90" height="1.3" fill="#f8f8f2" opacity="0.5"/><rect x="984.70" y="601.08" width="1.80" height="1.3" fill="#75715e" opacity="0.38"/><rect x="987.40" y="601.08" width="9.90" height="1.3" fill="#75715e" opacity="0.38"/><rect x="998.20" y="601.08" width="5.40" height="1.3" fill="#75715e" opacity="0.38"/><rect x="1004.50" y="601.08" width="2.70" height="1.3" fill="#75715e" opacity="0.38"/><rect x="1008.10" y="601.08" width="7.20" height="1.3" fill="#75715e" opacity="0.38"/><rect x="1016.20" y="601.08" width="1.80" height="1.3" fill="#75715e" opacity="0.38"/><rect x="1018.90" y="601.08" width="2.70" height="1.3" fill="#75715e" opacity="0.38"/><rect x="1022.50" y="601.08" width="5.40" height="1.3" fill="#75715e" opacity="0.38"/><rect x="1028.80" y="601.08" width="0.90" height="1.3" fill="#75715e" opacity="0.38"/><rect x="1030.60" y="601.08" width="1.80" height="1.3" fill="#75715e" opacity="0.38"/><rect x="1033.30" y="601.08" width="1.80" height="1.3" fill="#75715e" opacity="0.38"/><rect x="1036.00" y="601.08" width="4.50" height="1.3" fill="#75715e" opacity="0.38"/><rect x="1041.40" y="601.08" width="6.30" height="1.3" fill="#75715e" opacity="0.38"/><rect x="1048.60" y="601.08" width="0.90" height="1.3" fill="#75715e" opacity="0.38"/><rect x="1050.40" y="601.08" width="4.50" height="1.3" fill="#75715e" opacity="0.38"/><rect x="1055.80" y="601.08" width="1.80" height="1.3" fill="#75715e" opacity="0.38"/><rect x="1058.50" y="601.08" width="5.40" height="1.3" fill="#75715e" opacity="0.38"/><rect x="984.70" y="603.05" width="1.80" height="1.3" fill="#75715e" opacity="0.38"/><rect x="987.40" y="603.05" width="1.80" height="1.3" fill="#75715e" opacity="0.38"/><rect x="990.10" y="603.05" width="0.90" height="1.3" fill="#75715e" opacity="0.38"/><rect x="991.90" y="603.05" width="9.00" height="1.3" fill="#75715e" opacity="0.38"/><rect x="1001.80" y="603.05" width="11.70" height="1.3" fill="#75715e" opacity="0.38"/><rect x="1014.40" y="603.05" width="2.70" height="1.3" fill="#75715e" opacity="0.38"/><rect x="1018.00" y="603.05" width="9.90" height="1.3" fill="#75715e" opacity="0.38"/><rect x="1028.80" y="603.05" width="5.40" height="1.3" fill="#75715e" opacity="0.38"/><rect x="1035.10" y="603.05" width="1.80" height="1.3" fill="#75715e" opacity="0.38"/><rect x="1037.80" y="603.05" width="6.30" height="1.3" fill="#75715e" opacity="0.38"/><rect x="1045.00" y="603.05" width="8.10" height="1.3" fill="#75715e" opacity="0.38"/><rect x="984.70" y="605.03" width="1.80" height="1.3" fill="#75715e" opacity="0.38"/><rect x="987.40" y="605.03" width="9.00" height="1.3" fill="#75715e" opacity="0.38"/><rect x="997.30" y="605.03" width="6.30" height="1.3" fill="#75715e" opacity="0.38"/><rect x="1004.50" y="605.03" width="1.80" height="1.3" fill="#75715e" opacity="0.38"/><rect x="1007.20" y="605.03" width="5.40" height="1.3" fill="#75715e" opacity="0.38"/><rect x="1013.50" y="605.03" width="6.30" height="1.3" fill="#75715e" opacity="0.38"/><rect x="1020.70" y="605.03" width="4.50" height="1.3" fill="#75715e" opacity="0.38"/><rect x="984.70" y="607.00" width="3.60" height="1.3" fill="#2cc6e4" opacity="0.62"/><rect x="989.20" y="607.00" width="9.90" height="1.3" fill="#a6e22e" opacity="0.62"/><rect x="999.10" y="607.00" width="0.90" height="1.3" fill="#f8f8f2" opacity="0.5"/><rect x="1000.00" y="607.00" width="0.90" height="1.3" fill="#fd971f" opacity="0.62"/><rect x="1001.80" y="607.00" width="5.40" height="1.3" fill="#fd971f" opacity="0.62"/><rect x="1007.20" y="607.00" width="0.90" height="1.3" fill="#f8f8f2" opacity="0.5"/><rect x="1009.00" y="607.00" width="0.90" height="1.3" fill="#fd971f" opacity="0.62"/><rect x="1010.80" y="607.00" width="5.40" height="1.3" fill="#2cc6e4" opacity="0.62"/><rect x="1016.20" y="607.00" width="0.90" height="1.3" fill="#f8f8f2" opacity="0.5"/><rect x="1018.00" y="607.00" width="0.90" height="1.3" fill="#f8f8f2" opacity="0.5"/><rect x="1018.90" y="607.00" width="0.90" height="1.3" fill="#fd971f" opacity="0.62"/><rect x="1020.70" y="607.00" width="2.70" height="1.3" fill="#2cc6e4" opacity="0.62"/><rect x="1023.40" y="607.00" width="0.90" height="1.3" fill="#f8f8f2" opacity="0.5"/><rect x="1025.20" y="607.00" width="2.70" height="1.3" fill="#fd971f" opacity="0.62"/><rect x="1028.80" y="607.00" width="4.50" height="1.3" fill="#2cc6e4" opacity="0.62"/><rect x="1033.30" y="607.00" width="0.90" height="1.3" fill="#f8f8f2" opacity="0.5"/><rect x="1035.10" y="607.00" width="0.90" height="1.3" fill="#f8f8f2" opacity="0.5"/><rect x="988.30" y="608.97" width="1.80" height="1.3" fill="#ec1e72" opacity="0.62"/><rect x="991.00" y="608.97" width="1.80" height="1.3" fill="#f8f8f2" opacity="0.5"/><rect x="992.80" y="608.97" width="0.90" height="1.3" fill="#f8f8f2" opacity="0.5"/><rect x="994.60" y="608.97" width="1.80" height="1.3" fill="#f8f8f2" opacity="0.5"/><rect x="997.30" y="608.97" width="1.80" height="1.3" fill="#ec1e72" opacity="0.62"/><rect x="1000.00" y="608.97" width="0.90" height="1.3" fill="#f8f8f2" opacity="0.5"/><rect x="1000.90" y="608.97" width="0.90" height="1.3" fill="#f8f8f2" opacity="0.5"/><rect x="1001.80" y="608.97" width="0.90" height="1.3" fill="#f8f8f2" opacity="0.5"/><rect x="1002.70" y="608.97" width="10.80" height="1.3" fill="#f8f8f2" opacity="0.5"/><rect x="1013.50" y="608.97" width="0.90" height="1.3" fill="#f8f8f2" opacity="0.5"/><rect x="1014.40" y="608.97" width="0.90" height="1.3" fill="#f8f8f2" opacity="0.5"/><rect x="1016.20" y="608.97" width="1.80" height="1.3" fill="#f8f8f2" opacity="0.5"/><rect x="1018.90" y="608.97" width="0.90" height="1.3" fill="#f8f8f2" opacity="0.5"/><rect x="991.90" y="610.94" width="5.40" height="1.3" fill="#ec1e72" opacity="0.62"/><rect x="998.20" y="610.94" width="1.80" height="1.3" fill="#f8f8f2" opacity="0.5"/><rect x="1000.00" y="610.94" width="0.90" height="1.3" fill="#f8f8f2" opacity="0.5"/><rect x="1000.90" y="610.94" width="9.90" height="1.3" fill="#2cc6e4" opacity="0.62"/><rect x="1010.80" y="610.94" width="0.90" height="1.3" fill="#f8f8f2" opacity="0.5"/><rect x="1011.70" y="610.94" width="0.90" height="1.3" fill="#f8f8f2" opacity="0.5"/><rect x="1012.60" y="610.94" width="0.90" height="1.3" fill="#f8f8f2" opacity="0.5"/><rect x="988.30" y="612.92" width="0.90" height="1.3" fill="#f8f8f2" opacity="0.5"/><rect x="988.30" y="614.89" width="5.40" height="1.3" fill="#ec1e72" opacity="0.62"/><rect x="994.60" y="614.89" width="0.90" height="1.3" fill="#f8f8f2" opacity="0.5"/><rect x="995.50" y="614.89" width="0.90" height="1.3" fill="#f8f8f2" opacity="0.5"/><rect x="996.40" y="614.89" width="4.50" height="1.3" fill="#2cc6e4" opacity="0.62"/><rect x="1000.90" y="614.89" width="0.90" height="1.3" fill="#f8f8f2" opacity="0.5"/><rect x="1001.80" y="614.89" width="0.90" height="1.3" fill="#f8f8f2" opacity="0.5"/><rect x="1002.70" y="614.89" width="0.90" height="1.3" fill="#f8f8f2" opacity="0.5"/><rect x="1003.60" y="614.89" width="3.60" height="1.3" fill="#2cc6e4" opacity="0.62"/><rect x="1007.20" y="614.89" width="0.90" height="1.3" fill="#f8f8f2" opacity="0.5"/><rect x="1008.10" y="614.89" width="0.90" height="1.3" fill="#f8f8f2" opacity="0.5"/><rect x="1009.00" y="614.89" width="0.90" height="1.3" fill="#f8f8f2" opacity="0.5"/><rect x="1009.90" y="614.89" width="0.90" height="1.3" fill="#f8f8f2" opacity="0.5"/></svg>
  </div></div>

  <div id="panel">
    <div id="outbox"><div id="outinner">
<div class="ol" style="top:617.60px">unloading plugin Golang.main</div>
<div class="ol" style="top:632.40px">reloading settings Packages/User/Package Control.sublime-settings</div>
<div class="ol" style="top:647.20px">reloading settings Packages/User/Preferences.sublime-settings</div>
<div class="ol" style="top:662.00px">Package Control: The package Golang has been removed</div>
<div class="ol" style="top:676.80px">reloading settings Packages/User/Package Control.sublime-settings</div>
<div class="ol" style="top:691.60px">ignored packages updated to: [&quot;Vintage&quot;]</div>
<div class="ol" style="top:706.40px">reloading settings Packages/User/Package Control.sublime-settings</div>
    </div></div>
    <div id="inbox"></div>
  </div>

  <div id="status">
    <svg class="abs" style="left:11px;top:5px" width="16" height="12" viewBox="0 0 16 12"><rect x="0.5" y="0.5" width="15" height="11" rx="1.5" fill="#abb1ba" stroke="#70737a" stroke-width="1"/><rect x="1" y="8" width="14" height="3.5" fill="#62666e"/></svg>
    <div class="st" style="left:38.5px">Line 35, Column 24</div>
    <svg class="abs" style="left:717px;top:5.4px" width="11" height="13" viewBox="0 0 11 13"><g fill="#55585d"><circle cx="2.7" cy="1.4" r="1.6"/><circle cx="2.7" cy="10.4" r="1.6"/><circle cx="7.7" cy="2.4" r="1.5"/></g><path d="M2.7 1.4 V10.4 M7.7 2.4 Q7.7 6 2.7 7.4" stroke="#55585d" stroke-width="1.2" fill="none"/></svg>
    <div class="st" style="left:731px">release-branch.go1.14</div>
    <svg class="abs" style="left:849.5px;top:5px" width="11" height="12" viewBox="0 0 11 12"><rect x="0.5" y="0.5" width="10" height="11" rx="2" fill="none" stroke="#55575b" stroke-width="1"/><text x="5.5" y="9.3" font-size="8.5" text-anchor="middle" fill="#55575b" font-family="Liberation Sans">1</text></svg>
    <div class="st" style="left:891px">Tab Size: 4</div>
    <div class="st" style="left:1010px">Go</div>
  </div>
</div>

<!-- right background window strip -->
<div class="abs" style="left:1074px;top:0;width:6px;height:770px;background:#1b1c1f"></div>
<div class="abs" style="left:1075px;top:0;width:1px;height:770px;background:#2f3135"></div>
<div class="abs" style="left:1076px;top:3px;font-size:12px;color:#55575a">3</div>
<div class="abs" style="left:1076px;top:633px;font-size:13px;color:#55575a">2</div>

<!-- watermark -->
<svg class="abs" style="left:860px;top:690px" width="80" height="60" viewBox="0 0 80 60">
  <g fill="#fff" stroke="#a5a5a5" stroke-width="1.3">
    <path d="M33 7.5 C22.5 7.5 15 14 15 22.5 C15 27.5 17.5 31.5 21.5 34.5 L19.5 41 L26.5 37 C28.5 37.6 30.5 38 33 38 C35 38 36.5 37.8 38 37.3 C37.2 35.6 36.8 33.8 36.8 31.8 C36.8 24.2 44 18.3 52.5 18.3 C50.8 11.8 42.8 7.5 33 7.5 Z"/>
    <path d="M48.5 21.5 C40.5 21.5 34 27 34 34.5 C34 42 40.5 47.5 48.5 47.5 C50.5 47.5 52.3 47.2 54 46.6 L60 49.5 L58.4 44 C61.3 41.6 63 38.2 63 34.5 C63 27 56.5 21.5 48.5 21.5 Z"/>
  </g>
  <g fill="#fff" stroke="#9c9c9c" stroke-width="1.1"><circle cx="26.5" cy="17.5" r="1.6"/><circle cx="39.5" cy="17.5" r="1.6"/><circle cx="43.5" cy="29.5" r="1.4"/><circle cx="53.5" cy="29.5" r="1.4"/></g>
</svg>
<div class="abs" style="left:930px;top:704px;font-size:28.4px;color:#fff;text-shadow:0 0 1px #888,1px 1px 1px #777">polarisxu</div>
<svg class="abs" style="left:1052px;top:726px" width="10" height="8" viewBox="0 0 10 8"><path d="M0 0 H9.5 L4.75 7.5 Z" fill="#a3a6ab"/></svg>
</body></html>
